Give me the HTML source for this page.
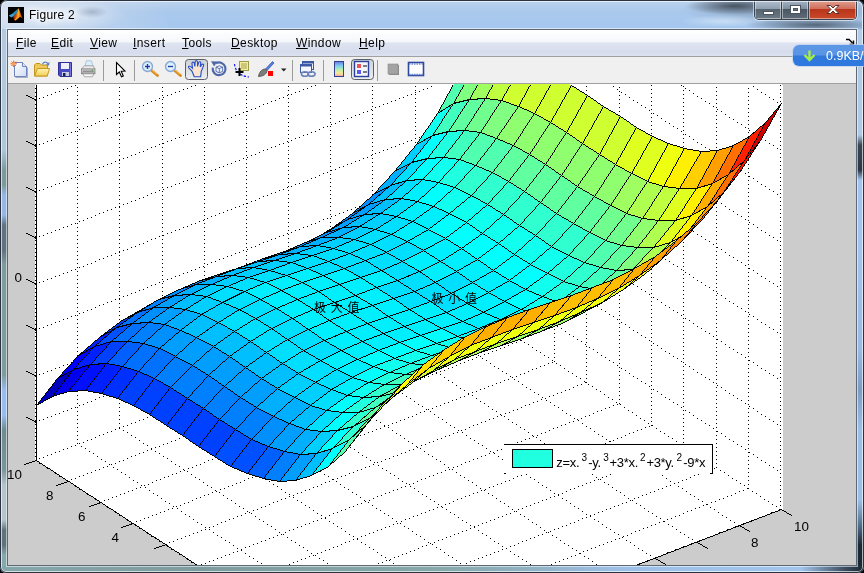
<!DOCTYPE html>
<html><head><meta charset="utf-8"><title>Figure 2</title>
<style>
html,body{margin:0;padding:0;}
body{width:864px;height:573px;overflow:hidden;position:relative;background:#000;font-family:"Liberation Sans","Noto Sans CJK SC",sans-serif;}
#win{position:absolute;left:0;top:0;width:864px;height:573px;border-radius:7px 7px 6px 6px;overflow:hidden;
 background:linear-gradient(180deg,#bcd3ee 0px,#a9c8ec 12px,#a6c8ef 30px,#a9c9ee 100%);}
#winedge{position:absolute;left:0;top:0;width:862px;height:571px;border:1px solid #2b3340;border-radius:7px 7px 6px 6px;box-shadow:inset 0 0 0 1px rgba(255,255,255,.65);z-index:20;pointer-events:none;}
#smudge{position:absolute;left:600px;top:2px;width:262px;height:27px;
 background:radial-gradient(ellipse 50px 9px at 135px 4px,rgba(55,65,75,.85),rgba(55,65,75,0) 100%),radial-gradient(ellipse 70px 7px at 215px 23px,rgba(60,70,80,.75),rgba(60,70,80,0) 100%),radial-gradient(ellipse 45px 6px at 125px 19px,rgba(215,232,250,.7),rgba(215,232,250,0) 100%),radial-gradient(ellipse 110px 16px at 190px 8px,rgba(90,105,120,.45),rgba(90,105,120,0) 100%);}
#glow{position:absolute;left:2px;top:2px;width:200px;height:27px;background:radial-gradient(ellipse 16px 6px at 90px 10px,rgba(120,135,160,.45),rgba(120,135,160,0) 100%),radial-gradient(ellipse 80px 18px at 45px 13px,rgba(238,242,248,.8),rgba(238,242,248,0) 100%),linear-gradient(90deg,rgba(225,230,238,.6) 0,rgba(225,230,238,.35) 90px,rgba(225,230,238,0) 170px);}
#bl{position:absolute;left:1px;top:30px;width:6px;height:540px;background:linear-gradient(180deg,#b3cae0 0,#aec6dc 120px,#7d9a9b 140px,#7d9a9b 155px,#96b6e6 165px,#96b6e6 185px,#5e7480 195px,#5e7480 220px,#7f9c9c 235px,#7f9c9c 345px,#98bcf0 360px,#98bcf0 385px,#6f8a90 400px,#7a9698 440px,#b4c4cc 455px,#b4c4cc 490px,#5e747c 500px,#5e747c 515px,#86a8ac 525px,#86a8ac 100%);}
#br{position:absolute;left:857px;top:30px;width:6px;height:540px;background:linear-gradient(180deg,#b5cde6 0,#b0c9e4 105px,#3a4656 115px,#2c3646 140px,#a2c4ee 150px,#a2c4ee 220px,#98bae4 320px,#7d9cc4 360px,#9cbfe8 400px,#9cbfe8 470px,#55708c 495px,#1c2836 515px,#1c2836 100%);}
#bb{position:absolute;left:1px;top:566px;width:862px;height:6px;background:linear-gradient(90deg,#84a6ab 0,#7e9c9f 200px,#86a8a8 430px,#8fb0c0 520px,#9dc0e8 620px,#a0c4ec 800px,#3a4a5c 845px,#1c2836 100%);}
#ticon{position:absolute;left:8px;top:7px;width:16px;height:16px;}
#title{position:absolute;left:29px;top:7px;font-size:12px;line-height:16px;color:#000;letter-spacing:.25px;text-shadow:0 0 6px #fff,0 0 6px #fff,0 0 8px #fff;}
#btns{position:absolute;left:754px;top:0;width:103px;height:20px;border:1px solid #3a4350;border-top:none;border-radius:0 0 5px 5px;box-sizing:border-box;overflow:hidden;display:flex;box-shadow:0 0 0 1px rgba(255,255,255,.55);}
#btns div{height:100%;box-sizing:border-box;position:relative;}
#bmin{width:27px;background:linear-gradient(180deg,#b4c3d3 0,#8fa0b1 45%,#566370 50%,#6d7b89 100%);border-right:1px solid #39424d;box-shadow:inset 0 0 0 1px rgba(255,255,255,.45);}
#bmax{width:27px;background:linear-gradient(180deg,#a9b8c8 0,#808f9f 45%,#4a5662 50%,#606d7a 100%);border-right:1px solid #39424d;box-shadow:inset 0 0 0 1px rgba(255,255,255,.45);}
#bcls{width:47px;background:linear-gradient(180deg,#e2a395 0,#d0705c 45%,#b9351b 50%,#c94a2a 100%);box-shadow:inset 0 0 0 1px rgba(255,255,255,.45);}
#client{position:absolute;left:8px;top:30px;width:848px;height:535px;background:#f0f0f0;}
#clientedge{position:absolute;left:7px;top:29px;width:848px;height:535px;border:1px solid #5d6875;z-index:5;pointer-events:none;box-shadow:0 0 0 1px rgba(255,255,255,.55);}
#menubar{position:absolute;left:0;top:0;width:848px;height:26px;background:linear-gradient(180deg,#ffffff 0,#f5f7fb 45%,#dfe4f1 50%,#d6dcec 85%,#dde2f0 100%);border-bottom:1px solid #a0a0a0;}
#menubar span{position:absolute;top:5px;font-size:12px;line-height:16px;color:#000;letter-spacing:.4px;}
#menubar span::first-letter{text-decoration:underline;text-underline-offset:1px;}
#toolbar{position:absolute;left:0;top:27px;width:848px;height:26px;background:#f0f0f0;}
#tbline{position:absolute;left:0;top:53px;width:848px;height:1px;background:#a0a0a0;}
.sep{position:absolute;top:5px;width:1px;height:19px;background:#a5a5a5;}
.ic{position:absolute;top:5px;width:18px;height:18px;}
.pressed{position:absolute;top:2px;height:22px;border:1px solid #555b66;border-radius:3px;background:linear-gradient(180deg,#d0d4da,#eceef2);box-sizing:border-box;box-shadow:inset 1px 1px 2px rgba(0,0,0,.25);}
#fig{position:absolute;left:0;top:54px;width:848px;height:481px;background:#cccccc;overflow:hidden;}
#fig svg{position:absolute;left:0;top:1px;overflow:visible;}
.gl,#menubar span,#badge span{will-change:transform;}
.t{font-family:"Liberation Sans","Noto Sans CJK SC",sans-serif;font-size:13.4px;fill:#000;}
#badge{position:absolute;left:793px;top:45px;width:80px;height:21px;border-radius:6px;background:linear-gradient(180deg,#5c97e6 0,#5a94e4 48%,#3078dc 52%,#2f78de 100%);z-index:30;box-shadow:0 0 0 1px rgba(190,210,240,.7);}
#badge span{position:absolute;left:33px;top:3px;color:#fff;font-size:12.5px;line-height:16px;}
</style></head><body>
<div id="win">
 <div id="smudge"></div><div id="glow"></div><div id="bl"></div><div id="br"></div><div id="bb"></div>
 <svg id="ticon" viewBox="0 0 16 16"><defs><linearGradient id="ml" x1="0" x2="1"><stop offset="0" stop-color="#8a1f08"/><stop offset=".32" stop-color="#e0540f"/><stop offset=".53" stop-color="#fdb824"/><stop offset=".68" stop-color="#ee7216"/><stop offset="1" stop-color="#a8300a"/></linearGradient></defs><rect width="16" height="16" fill="#000"/>
  <path d="M0.700 8.600 L4.600 6.400 L9.800 2 L8.600 6.500 L5.600 9.200 L3.200 10.600 Z" fill="#3aa3cc"/><path d="M4.600 6.400 L9.800 2 L8.600 6.500 L6 8 Z" fill="#2f86aa"/>
  <path d="M10.600 1 C11.600 3,12.600 7.200,14.800 11.800 C13.400 10.400,12.400 9.600,11.400 10.200 C10 11.200,8.600 13.600,7 13.600 C6.200 13.400,5.400 11.600,5.200 9.600 L8.600 6.500 Z" fill="url(#ml)"/>
  <path d="M7 13.600 C8 13,9 11.500,9.600 10 L8.600 10.400 C8 11.500,7.200 12.500,6.500 12.800 Z" fill="#f8c020"/></svg>
 <div id="title" class="gl">Figure 2</div>
 <div id="btns"><div id="bmin"><svg width="26" height="20" style="position:absolute;left:0;top:0"><rect x="8.500" y="11.500" width="10" height="3" fill="#fff" stroke="#4a5560" stroke-width="1"/></svg></div><div id="bmax"><svg width="26" height="20" style="position:absolute;left:0;top:0"><rect x="8.500" y="5.500" width="10" height="8" fill="#fff" stroke="#4a5560"/><rect x="11.500" y="8.500" width="4" height="2" fill="#6b7784" stroke="#4a5560"/></svg></div><div id="bcls"><svg width="47" height="19" style="position:absolute;left:0;top:0"><path d="M18 5.500 L21.500 5.500 L24 8 L26.500 5.500 L30 5.500 L26 9.500 L30 13.500 L26.500 13.500 L24 11 L21.500 13.500 L18 13.500 L22 9.500 Z" fill="#fff" stroke="#5a3028" stroke-width="1"/></svg></div></div>
 <div id="clientedge"></div>
 <div id="client">
  <div id="menubar">
   <span style="left:8px">File</span><span style="left:43px">Edit</span><span style="left:82px">View</span><span style="left:125px">Insert</span><span style="left:174px">Tools</span><span style="left:223px">Desktop</span><span style="left:288px">Window</span><span style="left:351px">Help</span>
   <svg style="position:absolute;left:837px;top:8px" width="10" height="8"><path d="M1 1.500 L4 1.500 L7.500 5 M4.500 6.500 L8.500 6.500 L8.500 2.500" stroke="#000" stroke-width="1.4" fill="none"/></svg>
  </div>
  <div id="toolbar">
   <svg width="849" height="26" viewBox="8 57 849 26" style="position:absolute;left:0;top:0">
<defs>
<linearGradient id="gcb" x1="0" y1="0" x2="0" y2="1"><stop offset="0" stop-color="#6a78e8"/><stop offset=".3" stop-color="#7fd0f0"/><stop offset=".55" stop-color="#b8eeb0"/><stop offset=".78" stop-color="#f6e890"/><stop offset="1" stop-color="#f0a0b8"/></linearGradient>
<linearGradient id="gpg" x1="0" y1="0" x2="1" y2="1"><stop offset="0" stop-color="#fff"/><stop offset="1" stop-color="#cfdcf4"/></linearGradient>
<linearGradient id="gfo" x1="0" y1="0" x2="0" y2="1"><stop offset="0" stop-color="#fff6b8"/><stop offset="1" stop-color="#f2cc50"/></linearGradient>
<linearGradient id="gbt" x1="0" y1="0" x2="0" y2="1"><stop offset="0" stop-color="#cfd2d6"/><stop offset="1" stop-color="#eceef0"/></linearGradient>
<linearGradient id="gpr" x1="0" y1="0" x2="0" y2="1"><stop offset="0" stop-color="#dcdcdc"/><stop offset="1" stop-color="#9c9c9c"/></linearGradient>
<radialGradient id="glens"><stop offset="0" stop-color="#fff"/><stop offset="1" stop-color="#bfe6f4"/></radialGradient>
</defs>
<!-- separators -->
<g fill="#9c9c9c"><rect x="103" y="60" width="1" height="21"/><rect x="134" y="60" width="1" height="21"/><rect x="292" y="60" width="1" height="21"/><rect x="323" y="60" width="1" height="21"/><rect x="377" y="60" width="1" height="21"/></g>
<!-- new -->
<path d="M14.500 62.500 L22.500 62.500 L26.500 66.500 L26.500 76.500 L14.500 76.500 Z" fill="url(#gpg)" stroke="#6f84bd"/><path d="M22.500 62.500 L22.500 66.500 L26.500 66.500" fill="#dfe8f8" stroke="#6f84bd"/><rect x="15.500" y="77" width="12" height="1" fill="#a6aec2"/><rect x="27" y="67.500" width="1" height="10" fill="#a6aec2"/>
<g stroke="#e8562a" stroke-width="1"><path d="M13.700 60.600 L13.700 67 M10.500 63.800 L16.900 63.800 M11.500 61.600 L15.900 66 M15.900 61.600 L11.500 66"/></g><circle cx="13.700" cy="63.800" r="1.600" fill="#f9a850"/>
<!-- open -->
<path d="M34.500 65 L36 63.500 L40 63.500 L41.500 65 L47.500 65 L47.500 76 L34.500 76 Z" fill="#efc95a" stroke="#c09420"/><path d="M34.700 76 L37.500 68.500 L49.500 68.500 L47.300 76 Z" fill="url(#gfo)" stroke="#c69a22"/>
<path d="M42.500 64.200 C43.500 61.800,46.300 61.400,48 63.600" fill="none" stroke="#5d86c8" stroke-width="1.300"/><path d="M49.600 62 L49 65.700 L45.900 64.300 Z" fill="#5d86c8"/>
<!-- save -->
<path d="M58.500 62.500 L71.500 62.500 L71.500 76.500 L60 76.500 L58.500 75 Z" fill="#4a4ac0" stroke="#2f2f94"/><rect x="61" y="63" width="8" height="6" fill="#eef1fb"/><rect x="62" y="72" width="7" height="4" fill="#c8cce8"/><rect x="63" y="73" width="2.500" height="3" fill="#1c1c50"/><path d="M70.500 63 L70.500 76" stroke="#7a7ae0"/>
<!-- print -->
<path d="M85 66.200 L86.300 60.800 L91.300 60.800 L93.300 66.200 Z" fill="#dbeefc" stroke="#9bbde0" stroke-width=".8"/><path d="M81.500 69 L84.300 65.800 L93.200 65.800 L95 69 Z" fill="#ececec" stroke="#8c8c8c" stroke-width=".7"/><rect x="81.500" y="69" width="13.500" height="4.800" fill="url(#gpr)" stroke="#7a7a7a" stroke-width=".7"/><path d="M82.800 73.800 L84.500 76.800 L92.500 76.800 L93.800 73.800 Z" fill="#f6f6f6" stroke="#8e8e8e" stroke-width=".7"/><path d="M83 71.200 L93.500 71.200" stroke="#707070" stroke-width=".8"/><rect x="91.800" y="69.800" width="1.400" height="1.200" fill="#38b838"/>
<!-- pointer -->
<path d="M116.500 62.500 L116.500 74.500 L119.300 72 L121.500 76.800 L123.300 76 L121.200 71.300 L125 71 Z" fill="#fff" stroke="#000" stroke-width="1.100"/>
<!-- zoom in -->
<path d="M151 70 L157.500 75.500" stroke="#d98a1e" stroke-width="2.800" stroke-linecap="round"/><path d="M151.500 69.500 L157 74.200" stroke="#f4c46a" stroke-width="1"/><circle cx="147.500" cy="66.500" r="5" fill="url(#glens)" stroke="#8aa6d8" stroke-width="1.300"/><path d="M145 66.500 L150 66.500 M147.500 64 L147.500 69" stroke="#2338a8" stroke-width="1.400"/>
<!-- zoom out -->
<path d="M174 70 L180.500 75.500" stroke="#d98a1e" stroke-width="2.800" stroke-linecap="round"/><path d="M174.500 69.500 L180 74.200" stroke="#f4c46a" stroke-width="1"/><circle cx="170.500" cy="66.500" r="5" fill="url(#glens)" stroke="#8aa6d8" stroke-width="1.300"/><path d="M168 66.500 L173 66.500" stroke="#2338a8" stroke-width="1.400"/>
<!-- pan (pressed) -->
<rect x="185.500" y="59.500" width="22" height="20" rx="3" fill="url(#gbt)" stroke="#5a5f68"/>
<g transform="translate(196 69) scale(1.16 1.04) translate(-196 -69)"><path d="M192.500 71 L189.700 67.800 C189 66.500,190.500 65.800,191.500 66.800 L193 68.300 L192.500 63.500 C192.500 62,194.300 62,194.500 63.500 L195 66.500 L195.300 62 C195.500 60.500,197.300 60.700,197.300 62.200 L197.300 66.500 L198.300 62.800 C198.700 61.500,200.300 62,200.100 63.400 L199.600 67 L201 64.800 C201.800 63.800,203 64.600,202.500 65.800 L200.500 71.500 L200 76.500 L194.500 76.500 Z" fill="#fbe3cf" stroke="#2a52c8" stroke-width="1"/></g>
<!-- rotate 3d -->
<path d="M216 63.200 A6.400 6.400 0 1 1 212.800 67.600" fill="none" stroke="#4f68a8" stroke-width="2.200"/><path d="M211 61.200 L217.200 61.400 L214.200 66.600 Z" fill="#4f68a8"/>
<path d="M216 67.200 L219.300 65.800 L222.600 67.200 L222.600 71.400 L219.300 72.800 L216 71.400 Z M216 67.200 L219.300 68.600 L222.600 67.200 M219.300 68.600 L219.300 72.800" fill="#eef3fc" stroke="#4f68a8" stroke-width=".9"/>
<!-- data cursor -->
<rect x="239.500" y="61.500" width="9" height="9" fill="#f3eea0" stroke="#9c9a4a"/><path d="M241 64 L247 64 M241 66 L247 66 M241 68 L247 68" stroke="#8f8c40" stroke-width=".8"/>
<path d="M234.500 64 C235 70,239 76,249 77" fill="none" stroke="#1a1aff" stroke-width="1.200" stroke-dasharray="2.500 1.500"/><path d="M235.500 72 L243.500 72 M239.500 68 L239.500 76" stroke="#000" stroke-width="2"/>
<!-- brush -->
<path d="M265.500 69 L272.500 61.500 L274 63 L267 70.500 Z" fill="#5d7fe0" stroke="#3a58b8" stroke-width=".8"/><path d="M258.500 76.500 C259 72,262 69,265.500 69 L267 70.500 C267 74,263 76.500,258.500 76.500 Z" fill="#7c7c7c" stroke="#4a4a4a" stroke-width=".8"/><rect x="268" y="71" width="5" height="5" fill="#ff0000"/>
<path d="M281 68.500 L286.500 68.500 L283.750 71.500 Z" fill="#222"/>
<!-- link -->
<rect x="302.500" y="61.500" width="11" height="8" fill="#eaf0fb" stroke="#3b5aa6"/><rect x="302.500" y="61.500" width="11" height="2" fill="#3b5aa6"/><rect x="300.500" y="64.500" width="11" height="8" fill="#f4f7fd" stroke="#3b5aa6"/><rect x="300.500" y="64.500" width="11" height="2" fill="#3b5aa6"/>
<ellipse cx="305" cy="74" rx="3.600" ry="2.300" fill="none" stroke="#6d84b8" stroke-width="1.600"/><ellipse cx="311.500" cy="74" rx="3.600" ry="2.300" fill="none" stroke="#6d84b8" stroke-width="1.600"/>
<!-- colorbar -->
<rect x="334.500" y="61.500" width="9" height="15" fill="url(#gcb)" stroke="#34408c"/>
<!-- legend pressed -->
<rect x="351.500" y="59.500" width="22" height="20" rx="3" fill="url(#gbt)" stroke="#5a5f68"/>
<rect x="354.500" y="61.500" width="14" height="15" fill="#f4f6fc" stroke="#2b3f9c" stroke-width="1.400"/><rect x="357" y="64" width="4" height="4" fill="#e8505c"/><rect x="357" y="70" width="4" height="4" fill="#5a5ae8"/><path d="M363 66 L367 66 M363 72 L367 72" stroke="#000" stroke-width="1.200"/>
<!-- gray square -->
<rect x="389" y="65" width="10" height="10" fill="#8a8a8a"/><rect x="388" y="64" width="10" height="10" fill="#a3a3a3" stroke="#8d8d8d" stroke-width=".6"/>
<!-- dock -->
<rect x="408.500" y="62.500" width="15" height="13" fill="#fff" stroke="#2e4aa0" stroke-width="1.600"/><path d="M409 64 L423 64 M409 74.500 L423 74.500" stroke="#6f88d0" stroke-width="1.400" stroke-dasharray="1.500 1"/>
</svg>

  </div>
  <div id="tbline"></div>
  <div id="fig">
   <svg width="849" height="480" viewBox="0 0 849 480" shape-rendering="crispEdges">
   <polygon points="352.4,586.9 774.0,424.7 450.2,213.0 28.6,375.2" fill="#fff"/>
<polygon points="28.6,375.2 450.2,213.0 450.2,-257.2 28.6,-95.0" fill="#fff"/>
<polygon points="450.2,213.0 774.0,424.7 774.0,-45.4 450.2,-257.2" fill="#fff"/>
<rect x="773.8" y="0" width="1.2" height="424.7" fill="#fff"/>
<rect x="27" y="0" width="2" height="375.2" fill="#fff"/>
<path d="M0 .5m28 0h1m38 0h1m119 0h1m119 0h1m225 0h1m12 0h1m96 0h1m29 0h1m98 0h1m-745 1h1m34 0h1m119 0h1m96 0h1m22 0h1m18 0h1m41 0h1m42 0h1m15 0h1m25 0h1m128 0h1m26 0h1m69 0h1m69 0h1m-718 1h1m40 0h1m41 0h1m42 0h1m41 0h1m41 0h1m226 0h1m15 0h1m129 0h1m96 0h1m-682 1h2m30 0h1m119 0h1m119 0h1m119 0h1m93 0h1m23 0h1m139 0h1m62 0h1m-713 1h1m26 0h1m119 0h1m119 0h1m119 0h1m53 0h1m76 0h1m62 0h1m33 0h1m105 0h1m22 0h1m-745 1h1m251 0h1m41 0h1m41 0h1m42 0h1m41 0h1m91 0h1m36 0h1m96 0h1m5 0h1m-654 1h1m22 0h1m17 0h1m41 0h1m42 0h1m16 0h1m24 0h1m41 0h1m52 0h1m119 0h1m69 0h1m129 0h1m96 0h1m-682 1h2m18 0h1m119 0h1m119 0h1m119 0h1m65 0h1m39 0h1m99 0h1m126 0h1m12 0h1m-726 1h1m516 0h2m96 0h1m41 0h1m86 0h1m-745 1h1m14 0h1m119 0h1m116 0h1m2 0h1m38 0h1m41 0h1m38 0h1m3 0h1m41 0h1m27 0h1m100 0h1m38 0h1m57 0h1m81 0h1m-740 1h2m8 0h1m10 0h1m29 0h1m41 0h1m42 0h1m4 0h1m36 0h1m41 0h1m40 0h1m119 0h1m81 0h1m129 0h1m96 0h1m-689 1h2m5 0h2m484 0h1m35 0h1m139 0h1m50 0h1m-719 1h2m4 0h1m6 0h1m119 0h1m119 0h1m119 0h1m85 0h1m64 0h1m74 0h1m21 0h1m117 0h1m10 0h1m-749 1h2m2 0h1m2 0h1m119 0h1m119 0h1m8 0h1m41 0h1m41 0h1m26 0h1m15 0h1m41 0h1m103 0h1m24 0h1m96 0h1m17 0h1m-668 1h3m40 0h1m41 0h1m42 0h1m41 0h1m41 0h1m242 0h1m129 0h1m96 0h1m56 0h1m-739 1h2m118 0h1m119 0h1m119 0h1m97 0h1m27 0h1m111 0h1m114 0h1m-713 1h1m114 0h1m119 0h1m119 0h1m162 0h1m10 0h1m85 0h1m53 0h1m74 0h1m-745 1h1m251 0h1m41 0h1m41 0h1m42 0h1m41 0h1m39 0h1m88 0h1m50 0h1m45 0h1m93 0h1m-742 1h1m40 0h1m41 0h1m27 0h1m14 0h1m41 0h1m41 0h1m20 0h1m119 0h1m101 0h1m129 0h1m89 0h1m6 0h1m-682 1h2m226 0h1m119 0h1m137 0h1m47 0h1m178 0h1m-713 1h1m106 0h1m357 0h1m52 0h1m86 0h1m9 0h1m128 0h1m-745 1h1m102 0h1m119 0h1m28 0h1m41 0h1m41 0h1m6 0h1m35 0h1m41 0h1m115 0h1m12 0h1m96 0h1m29 0h1m-678 1h1m40 0h1m41 0h1m42 0h1m41 0h1m41 0h1m128 0h1m113 0h1m129 0h1m25 0h1m70 0h1m-682 1h2m98 0h1m119 0h1m249 0h1m15 0h1m226 0h1m-713 1h1m94 0h1m119 0h1m119 0h1m182 0h1m22 0h1m73 0h1m65 0h1m62 0h1m-745 1h1m251 0h1m41 0h1m41 0h1m42 0h1m41 0h1m51 0h1m76 0h1m62 0h1m33 0h1m-648 1h1m40 0h1m41 0h1m7 0h1m34 0h1m41 0h1m41 0h2m119 0h1m121 0h1m91 0h1m37 0h1m96 0h1m4 0h1m-687 1h2m86 0h1m119 0h1m119 0h1m157 0h1m226 0h1m-713 1h1m476 0h1m40 0h1m96 0h1m1 0h1m126 0h1m-745 1h1m82 0h1m119 0h1m48 0h1m41 0h1m28 0h1m12 0h1m42 0h1m41 0h1m127 0h2m96 0h1m41 0h1m-690 1h1m40 0h1m37 0h1m3 0h1m42 0h1m41 0h1m30 0h1m10 0h1m108 0h1m133 0h1m27 0h1m101 0h1m37 0h1m58 0h1m-682 1h2m484 0h1m226 0h1m-713 1h1m74 0h1m119 0h1m119 0h1m202 0h1m34 0h1m61 0h1m77 0h1m50 0h1m-745 1h1m70 0h1m119 0h1m60 0h1m41 0h1m16 0h1m24 0h1m42 0h1m41 0h1m63 0h1m64 0h1m74 0h1m21 0h1m-648 1h1m40 0h1m41 0h1m42 0h1m41 0h1m41 0h1m242 0h1m103 0h1m25 0h1m96 0h1m16 0h1m-699 1h2m66 0h1m119 0h1m119 0h1m177 0h1m226 0h1m-713 1h1m62 0h1m119 0h1m119 0h1m185 0h1m28 0h1m96 0h1m13 0h1m114 0h1m-745 1h1m251 0h1m41 0h1m41 0h1m42 0h1m41 0h1m128 0h1m10 0h1m85 0h1m53 0h1m-702 1h1m40 0h1m17 0h1m23 0h1m42 0h1m41 0h1m10 0h1m30 0h1m88 0h1m119 0h1m33 0h1m39 0h1m89 0h1m49 0h1m46 0h1m-682 1h2m174 0h1m119 0h1m119 0h1m69 0h1m219 0h1m6 0h1m-713 1h1m54 0h1m369 0h1m92 0h1m46 0h1m49 0h1m128 0h1m-745 1h1m50 0h1m119 0h1m80 0h1m38 0h1m2 0h1m41 0h1m42 0h1m31 0h1m9 0h1m75 0h1m52 0h1m86 0h1m9 0h1m-648 1h1m40 0h1m41 0h1m42 0h1m41 0h1m41 0h1m76 0h1m119 0h1m21 0h1m23 0h1m115 0h1m13 0h1m96 0h1m28 0h1m-711 1h2m46 0h1m119 0h1m317 0h1m155 0h1m70 0h1m-713 1h1m42 0h1m119 0h1m119 0h1m119 0h1m97 0h1m16 0h1m96 0h1m128 0h1m-745 1h1m251 0h1m41 0h1m41 0h1m42 0h1m19 0h1m21 0h1m11 0h1m116 0h1m22 0h1m73 0h1m65 0h1m-714 1h1m38 0h1m1 0h1m41 0h1m42 0h1m32 0h1m8 0h1m41 0h1m68 0h1m173 0h1m51 0h1m77 0h1m61 0h1m34 0h1m-682 1h2m34 0h1m119 0h1m119 0h1m119 0h1m89 0h1m91 0h1m134 0h1m4 0h1m-718 1h1m436 0h1m80 0h1m96 0h1m128 0h1m-745 1h1m30 0h1m119 0h1m100 0h1m18 0h1m22 0h1m41 0h1m42 0h1m11 0h1m29 0h1m87 0h1m40 0h1m96 0h1m1 0h1m-650 1h1m26 0h1m13 0h1m41 0h1m42 0h1m20 0h1m20 0h1m41 0h1m56 0h1m119 0h1m53 0h1m11 0h1m127 0h1m1 0h1m96 0h1m40 0h1m-723 1h2m484 0h1m27 0h1m139 0h1m58 0h1m-713 1h1m22 0h1m119 0h1m119 0h1m119 0h1m134 0h1m96 0h1m128 0h1m-745 1h1m18 0h1m119 0h1m112 0h1m6 0h1m34 0h1m41 0h1m42 0h1m41 0h1m23 0h1m104 0h1m34 0h1m61 0h1m77 0h1m-726 1h1m40 0h1m41 0h1m42 0h1m41 0h1m41 0h1m242 0h1m63 0h1m65 0h1m73 0h1m22 0h1m-682 1h2m14 0h1m119 0h1m119 0h1m119 0h1m73 0h1m35 0h1m103 0h1m122 0h1m16 0h1m-740 1h2m8 0h1m10 0h1m119 0h1m119 0h1m119 0h1m146 0h1m96 0h1m128 0h1m-753 1h2m6 0h1m251 0h1m41 0h1m41 0h1m42 0h1m41 0h1m99 0h1m28 0h1m96 0h1m13 0h1m-668 1h2m4 0h1m6 0h1m33 0h1m41 0h1m42 0h2m40 0h1m41 0h1m36 0h1m119 0h1m85 0h1m129 0h1m9 0h1m86 0h1m52 0h1m-738 1h2m1 0h2m2 0h1m119 0h1m119 0h1m119 0h1m121 0h1m39 0h1m139 0h1m46 0h1m-715 1h3m517 0h1m96 0h1m121 0h1m6 0h1m-746 1h2m118 0h1m119 0h1m12 0h1m41 0h1m41 0h1m22 0h1m19 0h1m41 0h1m35 0h1m92 0h1m46 0h1m49 0h1m-648 1h1m40 0h1m41 0h1m31 0h1m10 0h1m41 0h1m41 0h1m24 0h1m119 0h1m97 0h1m75 0h1m53 0h1m85 0h1m10 0h1m-682 1h2m460 0h1m23 0h1m115 0h1m110 0h1m28 0h1m-742 1h1m110 0h1m119 0h1m119 0h1m166 0h1m96 0h1m57 0h1m70 0h1m-745 1h1m226 0h1m24 0h1m41 0h1m41 0h1m10 0h1m31 0h1m41 0h1m111 0h1m16 0h1m96 0h1m-648 1h1m40 0h1m41 0h1m23 0h1m18 0h1m41 0h1m41 0h1m242 0h1m11 0h1m117 0h1m21 0h1m74 0h1m-682 1h2m102 0h1m119 0h1m119 0h1m141 0h1m51 0h1m139 0h1m34 0h1m-713 1h1m338 0h1m178 0h1m90 0h1m5 0h1m128 0h1m-745 1h1m98 0h1m119 0h1m32 0h1m41 0h1m41 0h1m42 0h1m41 0h1m47 0h1m80 0h1m96 0h1m-648 1h1m40 0h1m41 0h1m11 0h1m30 0h1m41 0h1m41 0h1m4 0h1m119 0h1m117 0h1m87 0h1m41 0h1m96 0h2m-683 1h2m472 0h1m11 0h1m127 0h1m98 0h1m-713 1h1m90 0h1m119 0h1m119 0h1m186 0h1m26 0h1m69 0h1m69 0h1m58 0h1m-745 1h1m86 0h1m119 0h1m44 0h1m41 0h1m32 0h1m8 0h1m42 0h1m41 0h1m128 0h1m96 0h1m-648 1h1m40 0h1m41 0h1m42 0h1m41 0h1m41 0h1m242 0h1m23 0h1m105 0h1m33 0h1m62 0h1m-682 1h2m82 0h1m119 0h1m119 0h1m161 0h1m63 0h1m139 0h1m22 0h1m-713 1h1m78 0h1m119 0h1m119 0h1m161 0h1m36 0h1m96 0h1m5 0h1m122 0h1m-745 1h1m251 0h1m41 0h1m41 0h1m42 0h1m41 0h1m128 0h1m96 0h1m-648 1h1m40 0h1m33 0h1m7 0h1m42 0h1m41 0h1m26 0h1m14 0h1m104 0h1m137 0h1m99 0h1m29 0h1m96 0h1m12 0h1m-695 1h2m70 0h1m119 0h1m119 0h1m173 0h1m139 0h1m86 0h1m-713 1h1m517 0h1m38 0h1m57 0h1m81 0h1m46 0h1m-745 1h1m66 0h1m119 0h1m64 0h1m41 0h1m12 0h1m28 0h1m42 0h1m41 0h1m128 0h1m96 0h1m-648 1h1m40 0h1m21 0h1m19 0h1m42 0h1m41 0h1m14 0h1m26 0h1m92 0h1m149 0h1m35 0h1m93 0h1m45 0h1m50 0h1m-682 1h2m420 0h1m63 0h1m75 0h1m139 0h1m10 0h1m-713 1h1m58 0h1m119 0h1m119 0h1m119 0h1m73 0h1m24 0h1m96 0h1m17 0h1m110 0h1m-745 1h1m174 0h1m76 0h1m41 0h2m40 0h1m42 0h1m35 0h1m5 0h1m128 0h1m96 0h1m57 0h1m-706 1h1m40 0h1m13 0h1m27 0h1m42 0h1m41 0h1m41 0h1m214 0h1m27 0h1m111 0h1m17 0h1m96 0h1m-682 1h2m50 0h1m119 0h1m119 0h1m119 0h1m73 0h1m11 0h1m139 0h1m74 0h1m-713 1h1m286 0h1m119 0h1m21 0h1m88 0h1m50 0h1m45 0h1m93 0h1m34 0h1m-745 1h1m46 0h1m119 0h1m84 0h1m41 0h1m41 0h1m42 0h1m41 0h1m128 0h1m90 0h1m5 0h1m-648 1h1m40 0h1m1 0h1m39 0h1m42 0h1m36 0h1m4 0h1m41 0h1m72 0h1m119 0h1m49 0h1m47 0h1m81 0h1m96 0h1m-682 1h2m398 0h1m33 0h1m51 0h1m87 0h1m138 0h2m-714 1h1m38 0h1m119 0h1m119 0h1m225 0h1m12 0h1m96 0h1m29 0h1m98 0h1m-745 1h1m34 0h1m119 0h1m96 0h1m22 0h1m18 0h1m41 0h1m42 0h1m15 0h1m25 0h1m128 0h1m26 0h1m69 0h1m69 0h1m-718 1h1m40 0h1m41 0h1m42 0h1m41 0h1m41 0h1m226 0h1m15 0h1m129 0h1m96 0h1m-682 1h2m30 0h1m119 0h1m119 0h1m119 0h1m93 0h1m23 0h1m139 0h1m62 0h1m-713 1h1m26 0h1m119 0h1m119 0h1m119 0h1m53 0h1m76 0h1m62 0h1m33 0h1m105 0h1m22 0h1m-745 1h1m251 0h1m41 0h1m41 0h1m42 0h1m41 0h1m91 0h1m36 0h1m96 0h1m5 0h1m-654 1h1m22 0h1m17 0h1m41 0h1m42 0h1m16 0h1m24 0h1m41 0h1m52 0h1m119 0h1m69 0h1m129 0h1m96 0h1m-682 1h2m18 0h1m119 0h1m119 0h1m119 0h1m65 0h1m39 0h1m99 0h1m126 0h1m12 0h1m-726 1h1m516 0h2m96 0h1m41 0h1m86 0h1m-745 1h1m14 0h1m119 0h1m116 0h1m2 0h1m38 0h1m41 0h1m38 0h1m3 0h1m41 0h1m27 0h1m100 0h1m38 0h1m57 0h1m81 0h1m-740 1h2m8 0h1m10 0h1m29 0h1m41 0h1m42 0h1m4 0h1m36 0h1m41 0h1m40 0h1m119 0h1m81 0h1m129 0h1m96 0h1m-689 1h2m5 0h2m484 0h1m35 0h1m139 0h1m50 0h1m-719 1h2m4 0h1m6 0h1m119 0h1m119 0h1m119 0h1m85 0h1m64 0h1m74 0h1m21 0h1m117 0h1m10 0h1m-749 1h2m2 0h1m2 0h1m119 0h1m119 0h1m8 0h1m41 0h1m41 0h1m26 0h1m15 0h1m41 0h1m103 0h1m24 0h1m96 0h1m17 0h1m-668 1h3m40 0h1m41 0h1m42 0h1m41 0h1m41 0h1m242 0h1m129 0h1m96 0h1m56 0h1m-739 1h2m118 0h1m119 0h1m119 0h1m97 0h1m27 0h1m111 0h1m114 0h1m-713 1h1m114 0h1m119 0h1m119 0h1m162 0h1m10 0h1m85 0h1m53 0h1m74 0h1m-745 1h1m251 0h1m41 0h1m41 0h1m42 0h1m41 0h1m39 0h1m88 0h1m50 0h1m45 0h1m93 0h1m-742 1h1m40 0h1m41 0h1m27 0h1m14 0h1m41 0h1m41 0h1m20 0h1m119 0h1m101 0h1m129 0h1m89 0h1m6 0h1m-682 1h2m226 0h1m119 0h1m137 0h1m47 0h1m178 0h1m-713 1h1m106 0h1m357 0h1m52 0h1m86 0h1m9 0h1m128 0h1m-745 1h1m102 0h1m119 0h1m28 0h1m41 0h1m41 0h1m6 0h1m35 0h1m41 0h1m115 0h1m12 0h1m96 0h1m29 0h1m-678 1h1m40 0h1m41 0h1m42 0h1m41 0h1m41 0h1m128 0h1m113 0h1m129 0h1m25 0h1m70 0h1m-682 1h2m98 0h1m119 0h1m249 0h1m15 0h1m226 0h1m-713 1h1m94 0h1m119 0h1m119 0h1m182 0h1m22 0h1m73 0h1m65 0h1m62 0h1m-745 1h1m251 0h1m41 0h1m41 0h1m42 0h1m41 0h1m51 0h1m76 0h1m62 0h1m33 0h1m-648 1h1m40 0h1m41 0h1m7 0h1m34 0h1m41 0h1m41 0h2m119 0h1m121 0h1m91 0h1m37 0h1m96 0h1m4 0h1m-687 1h2m86 0h1m119 0h1m119 0h1m157 0h1m226 0h1m-713 1h1m476 0h1m40 0h1m96 0h1m1 0h1m126 0h1m-745 1h1m82 0h1m119 0h1m48 0h1m41 0h1m28 0h1m12 0h1m42 0h1m41 0h1m127 0h2m96 0h1m41 0h1m-690 1h1m40 0h1m37 0h1m3 0h1m42 0h1m41 0h1m30 0h1m10 0h1m108 0h1m133 0h1m27 0h1m101 0h1m37 0h1m58 0h1m-682 1h2m484 0h1m226 0h1m-713 1h1m74 0h1m119 0h1m119 0h1m202 0h1m34 0h1m61 0h1m77 0h1m50 0h1m-745 1h1m70 0h1m119 0h1m60 0h1m41 0h1m16 0h1m24 0h1m42 0h1m41 0h1m63 0h1m64 0h1m74 0h1m21 0h1m-648 1h1m40 0h1m41 0h1m42 0h1m41 0h1m41 0h1m242 0h1m103 0h1m25 0h1m96 0h1m16 0h1m-699 1h2m66 0h1m119 0h1m119 0h1m177 0h1m226 0h1m-713 1h1m62 0h1m119 0h1m119 0h1m185 0h1m28 0h1m96 0h1m13 0h1m114 0h1m-745 1h1m251 0h1m41 0h1m41 0h1m42 0h1m41 0h1m128 0h1m10 0h1m85 0h1m53 0h1m-702 1h1m40 0h1m17 0h1m23 0h1m42 0h1m41 0h1m10 0h1m30 0h1m88 0h1m119 0h1m33 0h1m39 0h1m89 0h1m49 0h1m46 0h1m-682 1h2m174 0h1m119 0h1m119 0h1m69 0h1m219 0h1m6 0h1m-713 1h1m54 0h1m369 0h1m92 0h1m46 0h1m49 0h1m128 0h1m-745 1h1m50 0h1m119 0h1m80 0h1m38 0h1m2 0h1m41 0h1m42 0h1m31 0h1m9 0h1m75 0h1m52 0h1m86 0h1m9 0h1m-648 1h1m40 0h1m41 0h1m42 0h1m41 0h1m41 0h1m76 0h1m119 0h1m21 0h1m23 0h1m115 0h1m13 0h1m96 0h1m28 0h1m-711 1h2m46 0h1m119 0h1m317 0h1m155 0h1m70 0h1m-713 1h1m42 0h1m119 0h1m119 0h1m119 0h1m97 0h1m16 0h1m96 0h1m128 0h1m-745 1h1m251 0h1m41 0h1m41 0h1m42 0h1m19 0h1m21 0h1m11 0h1m116 0h1m22 0h1m73 0h1m65 0h1m-714 1h1m38 0h1m1 0h1m41 0h1m42 0h1m32 0h1m8 0h1m41 0h1m68 0h1m173 0h1m51 0h1m77 0h1m61 0h1m34 0h1m-682 1h2m34 0h1m119 0h1m119 0h1m119 0h1m89 0h1m91 0h1m134 0h1m4 0h1m-718 1h1m436 0h1m80 0h1m96 0h1m128 0h1m-745 1h1m30 0h1m119 0h1m100 0h1m18 0h1m22 0h1m41 0h1m42 0h1m11 0h1m29 0h1m87 0h1m40 0h1m96 0h1m1 0h1m-650 1h1m26 0h1m13 0h1m41 0h1m42 0h1m20 0h1m20 0h1m41 0h1m56 0h1m119 0h1m53 0h1m11 0h1m127 0h1m1 0h1m96 0h1m40 0h1m-723 1h2m484 0h1m27 0h1m139 0h1m58 0h1m-713 1h1m22 0h1m119 0h1m119 0h1m119 0h1m134 0h1m96 0h1m128 0h1m-745 1h1m18 0h1m119 0h1m112 0h1m6 0h1m34 0h1m41 0h1m42 0h1m41 0h1m23 0h1m104 0h1m34 0h1m61 0h1m77 0h1m-726 1h1m40 0h1m41 0h1m42 0h1m41 0h1m41 0h1m242 0h1m63 0h1m65 0h1m73 0h1m22 0h1m-682 1h2m14 0h1m119 0h1m119 0h1m119 0h1m73 0h1m35 0h1m103 0h1m122 0h1m16 0h1m-740 1h2m8 0h1m10 0h1m119 0h1m119 0h1m119 0h1m146 0h1m96 0h1m128 0h1m-753 1h2m6 0h1m251 0h1m41 0h1m41 0h1m42 0h1m41 0h1m99 0h1m28 0h1m96 0h1m13 0h1m-668 1h2m4 0h1m6 0h1m33 0h1m41 0h1m42 0h2m40 0h1m41 0h1m36 0h1m119 0h1m85 0h1m129 0h1m9 0h1m86 0h1m52 0h1m-738 1h2m1 0h2m2 0h1m119 0h1m119 0h1m119 0h1m121 0h1m39 0h1m139 0h1m46 0h1m-715 1h3m517 0h1m96 0h1m121 0h1m6 0h1m-746 1h2m118 0h1m119 0h1m12 0h1m41 0h1m41 0h1m22 0h1m19 0h1m41 0h1m35 0h1m92 0h1m46 0h1m49 0h1m-648 1h1m40 0h1m41 0h1m31 0h1m10 0h1m41 0h1m41 0h1m24 0h1m119 0h1m97 0h1m75 0h1m53 0h1m85 0h1m10 0h1m-682 1h2m460 0h1m23 0h1m115 0h1m110 0h1m28 0h1m-742 1h1m110 0h1m119 0h1m119 0h1m166 0h1m96 0h1m57 0h1m70 0h1m-745 1h1m226 0h1m24 0h1m41 0h1m41 0h1m10 0h1m31 0h1m41 0h1m111 0h1m16 0h1m96 0h1m-648 1h1m40 0h1m41 0h1m23 0h1m18 0h1m41 0h1m41 0h1m242 0h1m11 0h1m117 0h1m21 0h1m74 0h1m-682 1h2m102 0h1m119 0h1m119 0h1m141 0h1m51 0h1m139 0h1m34 0h1m-713 1h1m338 0h1m178 0h1m90 0h1m5 0h1m128 0h1m-745 1h1m98 0h1m119 0h1m32 0h1m41 0h1m41 0h1m42 0h1m41 0h1m47 0h1m80 0h1m96 0h1m-648 1h1m40 0h1m41 0h1m11 0h1m30 0h1m41 0h1m41 0h1m4 0h1m119 0h1m117 0h1m87 0h1m41 0h1m96 0h2m-683 1h2m472 0h1m11 0h1m127 0h1m98 0h1m-713 1h1m90 0h1m119 0h1m119 0h1m186 0h1m26 0h1m69 0h1m69 0h1m58 0h1m-745 1h1m86 0h1m119 0h1m44 0h1m41 0h1m32 0h1m8 0h1m42 0h1m41 0h1m128 0h1m96 0h1m-648 1h1m40 0h1m41 0h1m42 0h1m41 0h1m41 0h1m242 0h1m23 0h1m105 0h1m33 0h1m62 0h1m-682 1h2m82 0h1m119 0h1m119 0h1m161 0h1m63 0h1m139 0h1m22 0h1m-713 1h1m78 0h1m119 0h1m119 0h1m161 0h1m36 0h1m96 0h1m5 0h1m122 0h1m-745 1h1m251 0h1m41 0h1m41 0h1m42 0h1m41 0h1m128 0h1m96 0h1m-648 1h1m40 0h1m33 0h1m7 0h1m42 0h1m41 0h1m26 0h1m14 0h1m104 0h1m137 0h1m99 0h1m29 0h1m96 0h1m12 0h1m-695 1h2m70 0h1m119 0h1m119 0h1m173 0h1m139 0h1m86 0h1m-713 1h1m517 0h1m38 0h1m57 0h1m81 0h1m46 0h1m-745 1h1m66 0h1m119 0h1m64 0h1m41 0h1m12 0h1m28 0h1m42 0h1m41 0h1m128 0h1m96 0h1m-648 1h1m40 0h1m21 0h1m19 0h1m42 0h1m41 0h1m14 0h1m26 0h1m92 0h1m149 0h1m35 0h1m93 0h1m45 0h1m50 0h1m-682 1h2m420 0h1m63 0h1m75 0h1m139 0h1m10 0h1m-713 1h1m58 0h1m119 0h1m119 0h1m119 0h1m73 0h1m24 0h1m96 0h1m17 0h1m110 0h1m-745 1h1m174 0h1m76 0h1m41 0h2m40 0h1m42 0h1m35 0h1m5 0h1m128 0h1m96 0h1m57 0h1m-706 1h1m40 0h1m13 0h1m27 0h1m42 0h1m41 0h1m41 0h1m214 0h1m27 0h1m111 0h1m17 0h1m96 0h1m-682 1h2m50 0h1m119 0h1m119 0h1m119 0h1m73 0h1m11 0h1m139 0h1m74 0h1m-713 1h1m286 0h1m119 0h1m21 0h1m88 0h1m50 0h1m45 0h1m93 0h1m34 0h1m-745 1h1m46 0h1m119 0h1m84 0h1m41 0h1m41 0h1m42 0h1m41 0h1m128 0h1m90 0h1m5 0h1m-648 1h1m40 0h1m1 0h1m39 0h1m42 0h1m36 0h1m4 0h1m41 0h1m72 0h1m119 0h1m49 0h1m47 0h1m81 0h1m96 0h1m-682 1h2m398 0h1m33 0h1m51 0h1m87 0h1m138 0h2m-714 1h1m38 0h1m119 0h1m119 0h1m225 0h1m12 0h1m96 0h1m29 0h1m98 0h1m-745 1h1m34 0h1m119 0h1m96 0h1m22 0h1m18 0h1m41 0h1m42 0h1m15 0h1m25 0h1m128 0h1m26 0h1m69 0h1m69 0h1m-718 1h1m40 0h1m41 0h1m42 0h1m41 0h1m41 0h1m226 0h1m15 0h1m129 0h1m96 0h1m-682 1h2m30 0h1m119 0h1m119 0h1m119 0h1m93 0h1m23 0h1m139 0h1m62 0h1m-713 1h1m26 0h1m119 0h1m119 0h1m119 0h1m53 0h1m76 0h1m62 0h1m33 0h1m105 0h1m22 0h1m-745 1h1m251 0h1m41 0h1m41 0h1m42 0h1m41 0h1m91 0h1m36 0h1m96 0h1m5 0h1m-654 1h1m22 0h1m17 0h1m41 0h1m42 0h1m16 0h1m24 0h1m41 0h1m52 0h1m119 0h1m69 0h1m129 0h1m96 0h1m-682 1h2m18 0h1m119 0h1m119 0h1m119 0h1m65 0h1m39 0h1m99 0h1m126 0h1m12 0h1m-726 1h1m516 0h2m96 0h1m41 0h1m86 0h1m-745 1h1m14 0h1m119 0h1m116 0h1m2 0h1m38 0h1m41 0h1m38 0h1m3 0h1m41 0h1m27 0h1m100 0h1m38 0h1m57 0h1m81 0h1m-740 1h2m8 0h1m10 0h1m29 0h1m41 0h1m42 0h1m4 0h1m36 0h1m41 0h1m40 0h1m119 0h1m81 0h1m129 0h1m96 0h1m-689 1h2m5 0h2m484 0h1m35 0h1m139 0h1m50 0h1m-719 1h2m4 0h1m6 0h1m119 0h1m119 0h1m119 0h1m85 0h1m64 0h1m74 0h1m21 0h1m117 0h1m10 0h1m-749 1h2m2 0h1m2 0h1m119 0h1m119 0h1m8 0h1m41 0h1m41 0h1m26 0h1m15 0h1m41 0h1m103 0h1m24 0h1m96 0h1m17 0h1m-668 1h3m40 0h1m41 0h1m42 0h1m41 0h1m41 0h1m242 0h1m129 0h1m96 0h1m56 0h1m-739 1h2m118 0h1m119 0h1m119 0h1m97 0h1m27 0h1m111 0h1m114 0h1m-713 1h1m114 0h1m119 0h1m119 0h1m162 0h1m10 0h1m85 0h1m53 0h1m74 0h1m-745 1h1m251 0h1m41 0h1m41 0h1m42 0h1m41 0h1m39 0h1m88 0h1m50 0h1m45 0h1m93 0h1m-742 1h1m40 0h1m41 0h1m27 0h1m14 0h1m41 0h1m41 0h1m20 0h1m119 0h1m101 0h1m129 0h1m89 0h1m6 0h1m-682 1h2m226 0h1m119 0h1m137 0h1m47 0h1m178 0h1m-713 1h1m106 0h1m357 0h1m52 0h1m86 0h1m9 0h1m128 0h1m-745 1h1m102 0h1m119 0h1m28 0h1m41 0h1m41 0h1m6 0h1m35 0h1m41 0h1m115 0h1m12 0h1m96 0h1m29 0h1m-678 1h1m40 0h1m41 0h1m42 0h1m41 0h1m41 0h1m128 0h1m113 0h1m129 0h1m25 0h1m70 0h1m-682 1h2m98 0h1m119 0h1m249 0h1m15 0h1m226 0h1m-713 1h1m94 0h1m119 0h1m119 0h1m182 0h1m22 0h1m73 0h1m65 0h1m62 0h1m-745 1h1m251 0h1m41 0h1m41 0h1m42 0h1m41 0h1m51 0h1m76 0h1m62 0h1m33 0h1m-648 1h1m40 0h1m41 0h1m7 0h1m34 0h1m41 0h1m41 0h2m119 0h1m121 0h1m91 0h1m37 0h1m96 0h1m4 0h1m-687 1h2m86 0h1m119 0h1m119 0h1m157 0h1m226 0h1m-713 1h1m476 0h1m40 0h1m96 0h1m1 0h1m126 0h1m-745 1h1m82 0h1m119 0h1m48 0h1m41 0h1m28 0h1m12 0h1m42 0h1m41 0h1m127 0h2m96 0h1m41 0h1m-690 1h1m40 0h1m37 0h1m3 0h1m42 0h1m41 0h1m30 0h1m10 0h1m108 0h1m99 0h1m33 0h1m27 0h1m101 0h1m37 0h1m58 0h1m-682 1h2m414 0h1m8 0h1m60 0h1m226 0h1m-713 1h1m74 0h1m119 0h1m119 0h1m202 0h1m34 0h1m61 0h1m77 0h1m50 0h1m-745 1h1m70 0h1m119 0h1m60 0h1m41 0h1m16 0h1m24 0h1m42 0h1m31 0h1m73 0h1m64 0h1m74 0h1m21 0h1m-648 1h1m40 0h1m41 0h1m42 0h1m41 0h1m41 0h1m196 0h1m20 0h1m24 0h1m103 0h1m25 0h1m96 0h1m16 0h1m-699 1h2m66 0h1m119 0h1m119 0h1m177 0h1m226 0h1m-713 1h1m62 0h1m119 0h1m119 0h1m99 0h1m28 0h1m56 0h1m28 0h1m96 0h1m13 0h1m114 0h1m-745 1h1m251 0h1m41 0h1m41 0h1m42 0h1m19 0h1m150 0h1m10 0h1m85 0h1m53 0h1m-702 1h1m40 0h1m17 0h1m23 0h1m42 0h1m41 0h1m10 0h1m30 0h1m88 0h1m153 0h1m39 0h1m89 0h1m49 0h1m46 0h1m-682 1h2m174 0h1m119 0h1m99 0h1m40 0h1m48 0h1m219 0h1m6 0h1m-713 1h1m54 0h1m462 0h1m46 0h1m49 0h1m128 0h1m-745 1h1m50 0h1m119 0h1m80 0h1m38 0h1m2 0h1m41 0h1m42 0h1m11 0h1m48 0h1m56 0h1m52 0h1m86 0h1m9 0h1m-648 1h1m40 0h1m41 0h1m42 0h1m41 0h1m41 0h1m76 0h1m99 0h1m65 0h1m115 0h1m13 0h1m96 0h1m28 0h1m-711 1h2m46 0h1m119 0h1m317 0h1m155 0h1m70 0h1m-713 1h1m42 0h1m119 0h1m119 0h1m99 0h1m60 0h1m56 0h1m16 0h1m96 0h1m128 0h1m-745 1h1m251 0h1m41 0h1m41 0h1m42 0h1m170 0h1m22 0h1m73 0h1m65 0h1m-714 1h1m38 0h1m1 0h1m41 0h1m42 0h1m32 0h1m8 0h1m41 0h1m68 0h1m173 0h1m51 0h1m77 0h1m61 0h1m34 0h1m-682 1h2m34 0h1m119 0h1m119 0h1m99 0h1m6 0h1m65 0h1m36 0h1m91 0h1m134 0h1m4 0h1m-718 1h1m370 0h1m146 0h1m96 0h1m128 0h1m-745 1h1m30 0h1m119 0h1m100 0h1m18 0h1m22 0h1m41 0h1m115 0h1m56 0h1m40 0h1m96 0h1m1 0h1m-650 1h1m26 0h1m13 0h1m41 0h1m42 0h1m20 0h1m20 0h1m41 0h1m56 0h1m99 0h1m18 0h1m66 0h1m127 0h1m1 0h1m96 0h1m40 0h1m-723 1h2m362 0h1m87 0h1m33 0h1m27 0h1m139 0h1m58 0h1m-713 1h1m22 0h1m119 0h1m119 0h1m126 0h1m56 0h1m8 0h1m61 0h1m96 0h1m128 0h1m-745 1h1m18 0h1m119 0h1m112 0h1m6 0h1m34 0h1m41 0h1m22 0h1m190 0h1m34 0h1m61 0h1m77 0h1m-726 1h1m40 0h1m41 0h1m42 0h1m41 0h1m41 0h1m144 0h1m87 0h1m16 0h1m56 0h1m65 0h1m73 0h1m22 0h1m-682 1h2m14 0h1m119 0h1m119 0h1m138 0h1m44 0h1m45 0h1m103 0h1m122 0h1m16 0h1m-740 1h2m8 0h1m10 0h1m119 0h1m119 0h1m99 0h1m166 0h1m96 0h1m128 0h1m-753 1h2m6 0h1m251 0h1m41 0h1m41 0h1m10 0h1m50 0h1m36 0h1m28 0h1m56 0h1m28 0h1m96 0h1m13 0h1m-668 1h2m4 0h1m6 0h1m33 0h1m41 0h1m42 0h2m40 0h1m41 0h1m36 0h1m183 0h1m151 0h1m9 0h1m86 0h1m52 0h1m-738 1h2m1 0h2m2 0h1m119 0h1m119 0h1m99 0h1m141 0h1m39 0h1m139 0h1m46 0h1m-715 1h3m338 0h1m62 0h1m24 0h1m40 0h1m49 0h1m96 0h1m121 0h1m6 0h1m-746 1h2m118 0h1m119 0h1m12 0h1m41 0h1m41 0h1m213 0h1m46 0h1m49 0h1m-648 1h1m40 0h1m41 0h1m31 0h1m10 0h1m41 0h1m41 0h1m24 0h1m99 0h1m87 0h1m48 0h1m56 0h1m53 0h1m85 0h1m10 0h1m-682 1h2m405 0h1m12 0h1m65 0h1m115 0h1m110 0h1m28 0h1m-742 1h1m110 0h1m119 0h1m99 0h1m8 0h1m177 0h1m96 0h1m57 0h1m70 0h1m-745 1h1m226 0h1m24 0h1m41 0h1m32 0h1m82 0h1m4 0h1m60 0h1m56 0h1m16 0h1m96 0h1m-648 1h1m40 0h1m41 0h1m23 0h1m18 0h1m41 0h1m41 0h1m133 0h1m66 0h1m171 0h1m21 0h1m74 0h1m-682 1h2m102 0h1m119 0h1m99 0h1m161 0h1m51 0h1m139 0h1m34 0h1m-713 1h1m318 0h1m87 0h1m6 0h1m65 0h1m37 0h1m90 0h1m5 0h1m128 0h1m-745 1h1m98 0h1m119 0h1m32 0h1m41 0h1m53 0h1m54 0h1m146 0h1m96 0h1m-648 1h1m40 0h1m41 0h1m11 0h1m30 0h1m41 0h1m41 0h1m4 0h1m99 0h1m102 0h1m65 0h1m56 0h1m41 0h1m96 0h2m-683 1h2m310 0h1m40 0h1m46 0h1m84 0h2m127 0h1m98 0h1m-713 1h1m90 0h1m119 0h1m183 0h1m122 0h1m26 0h1m69 0h1m69 0h1m58 0h1m-745 1h1m86 0h1m119 0h1m44 0h1m41 0h1m12 0h1m114 0h1m57 0h1m7 0h1m61 0h1m96 0h1m-648 1h1m40 0h1m41 0h1m42 0h1m41 0h1m41 0h1m92 0h1m52 0h1m34 0h1m84 0h1m106 0h1m33 0h1m62 0h1m-682 1h2m82 0h1m119 0h1m183 0h1m104 0h1m56 0h1m139 0h1m22 0h1m-713 1h1m78 0h1m119 0h1m99 0h1m126 0h1m45 0h1m45 0h1m96 0h1m5 0h1m122 0h1m-745 1h1m251 0h1m41 0h2m64 0h1m22 0h1m166 0h1m96 0h1m-648 1h1m40 0h1m33 0h1m7 0h1m42 0h1m41 0h1m26 0h1m14 0h1m168 0h1m50 0h1m37 0h1m27 0h1m56 0h1m29 0h1m96 0h1m12 0h1m-695 1h2m70 0h1m119 0h1m99 0h1m72 0h1m99 0h1m160 0h1m86 0h1m-713 1h1m286 0h1m10 0h1m76 0h1m142 0h1m38 0h1m57 0h1m81 0h1m46 0h1m-745 1h1m66 0h1m119 0h1m64 0h1m118 0h1m62 0h1m25 0h1m39 0h1m49 0h1m96 0h1m-648 1h1m40 0h1m21 0h1m19 0h1m42 0h1m41 0h1m14 0h1m26 0h1m72 0h1m18 0h1m65 0h1m87 0h1m126 0h1m45 0h1m50 0h1m-682 1h2m366 0h1m136 0h1m56 0h1m139 0h1m10 0h1m-713 1h1m58 0h1m119 0h1m99 0h1m158 0h1m13 0h1m65 0h1m96 0h1m17 0h1m110 0h1m-745 1h1m174 0h1m76 0h1m22 0h1m30 0h1m56 0h1m8 0h1m75 0h1m101 0h1m96 0h1m57 0h1m-706 1h1m40 0h1m13 0h1m27 0h1m42 0h1m41 0h1m41 0h1m148 0h1m82 0h1m65 0h1m56 0h1m17 0h1m96 0h1m-682 1h2m50 0h1m119 0h1m99 0h1m38 0h1m65 0h1m67 0h1m192 0h1m74 0h1m-713 1h1m266 0h1m87 0h1m84 0h1m71 0h1m5 0h1m50 0h1m45 0h1m93 0h1m34 0h1m-745 1h1m46 0h1m119 0h1m84 0h1m98 0h1m94 0h1m103 0h1m90 0h1m5 0h1m-648 1h1m40 0h1m1 0h1m39 0h1m42 0h1m36 0h1m4 0h1m41 0h1m52 0h1m50 0h1m65 0h1m55 0h1m146 0h1m96 0h1m-682 1h2m258 0h1m87 0h1m84 0h1m17 0h1m65 0h1m56 0h1m138 0h2m-714 1h1m38 0h1m119 0h1m183 0h1m40 0h1m133 0h1m96 0h1m29 0h1m98 0h1m-745 1h1m34 0h1m119 0h1m96 0h1m2 0h1m62 0h1m109 0h1m87 0h1m33 0h1m26 0h1m69 0h1m69 0h1m-718 1h1m40 0h1m41 0h1m42 0h1m41 0h1m41 0h1m40 0h1m87 0h1m84 0h1m29 0h1m57 0h1m7 0h1m62 0h1m96 0h1m-682 1h2m30 0h1m119 0h1m170 0h1m12 0h1m52 0h1m260 0h1m62 0h1m-713 1h1m26 0h1m119 0h1m99 0h1m8 0h1m163 0h1m87 0h1m15 0h1m56 0h1m33 0h1m105 0h1m22 0h1m-745 1h1m242 0h1m87 0h1m126 0h1m45 0h1m45 0h1m96 0h1m5 0h1m-654 1h1m22 0h1m17 0h1m41 0h1m42 0h1m16 0h1m24 0h1m41 0h1m49 0h1m65 0h2m64 0h1m23 0h1m166 0h1m96 0h1m-682 1h2m18 0h1m119 0h1m99 0h1m172 0h1m49 0h1m37 0h1m27 0h1m56 0h1m126 0h1m12 0h1m-726 1h1m234 0h1m87 0h1m72 0h1m99 0h1m118 0h1m41 0h1m86 0h1m-745 1h1m14 0h1m119 0h1m128 0h1m54 0h1m10 0h1m77 0h1m141 0h1m38 0h1m57 0h1m81 0h1m-740 1h2m8 0h1m10 0h1m29 0h1m41 0h1m42 0h1m4 0h1m36 0h1m41 0h1m20 0h1m172 0h1m61 0h1m25 0h1m39 0h1m50 0h1m96 0h1m-689 1h2m5 0h2m226 0h1m40 0h1m46 0h1m18 0h1m65 0h1m260 0h1m50 0h1m-719 1h2m4 0h1m6 0h1m119 0h1m272 0h1m69 0h1m17 0h1m47 0h1m56 0h1m21 0h1m117 0h1m10 0h1m-749 1h2m2 0h1m2 0h1m119 0h1m99 0h1m87 0h1m84 0h1m7 0h1m79 0h1m65 0h1m96 0h1m17 0h1m-668 1h3m40 0h1m41 0h1m42 0h1m41 0h1m41 0h1m61 0h1m34 0h1m30 0h1m244 0h1m96 0h1m56 0h1m-739 1h2m118 0h1m99 0h1m172 0h1m81 0h1m5 0h1m59 0h1m56 0h1m114 0h1m-713 1h1m114 0h1m99 0h1m87 0h1m38 0h1m45 0h1m19 0h1m67 0h1m138 0h1m53 0h1m74 0h1m-745 1h1m275 0h1m22 0h1m244 0h1m5 0h1m50 0h1m45 0h1m93 0h1m-742 1h1m40 0h1m41 0h1m27 0h1m14 0h1m41 0h1m41 0h2m172 0h1m87 0h1m5 0h1m104 0h1m89 0h1m6 0h1m-682 1h2m206 0h1m72 0h1m14 0h1m50 0h1m33 0h1m31 0h1m55 0h1m243 0h1m-713 1h1m106 0h1m183 0h1m190 0h1m65 0h1m56 0h1m9 0h1m128 0h1m-745 1h1m102 0h1m99 0h1m10 0h1m161 0h1m39 0h1m47 0h1m84 0h2m96 0h1m29 0h1m-678 1h1m40 0h1m41 0h1m42 0h1m41 0h1m30 0h1m84 0h1m2 0h1m62 0h1m21 0h1m87 0h1m122 0h1m25 0h1m70 0h1m-682 1h2m98 0h1m118 0h1m64 0h1m202 0h1m58 0h1m6 0h1m159 0h1m-713 1h1m94 0h1m99 0h1m158 0h1m13 0h1m51 0h1m35 0h1m84 0h1m73 0h1m65 0h1m62 0h1m-745 1h1m190 0h1m87 0h1m8 0h1m163 0h1m103 0h1m56 0h1m33 0h1m-648 1h1m40 0h1m41 0h1m7 0h1m34 0h1m41 0h1m53 0h1m52 0h1m88 0h1m125 0h1m46 0h1m45 0h1m96 0h1m4 0h1m-687 1h2m86 0h1m99 0h1m104 0h1m65 0h1m1 0h1m63 0h1m23 0h1m263 0h1m-713 1h1m182 0h1m42 0h1m44 0h1m172 0h1m49 0h1m38 0h1m26 0h1m54 0h1m1 0h1m126 0h1m-745 1h1m82 0h1m183 0h1m88 0h1m5 0h1m65 0h1m100 0h1m117 0h1m41 0h1m-690 1h1m40 0h1m37 0h1m3 0h1m42 0h1m41 0h1m10 0h1m116 0h1m55 0h1m87 0h1m123 0h1m18 0h1m37 0h1m58 0h1m-682 1h2m174 0h1m54 0h1m32 0h1m172 0h1m61 0h1m26 0h1m186 0h1m-713 1h1m74 0h1m183 0h1m40 0h1m47 0h1m17 0h1m65 0h1m88 0h1m93 0h1m77 0h1m50 0h1m-745 1h1m70 0h1m99 0h1m172 0h1m87 0h1m69 0h1m65 0h1m56 0h1m21 0h1m-648 1h1m40 0h1m41 0h1m42 0h1m41 0h1m65 0h1m20 0h1m180 0h1m80 0h1m65 0h1m96 0h1m16 0h1m-699 1h2m66 0h1m99 0h1m136 0h1m35 0h1m29 0h1m57 0h1m84 0h1m198 0h1m-713 1h1m62 0h1m99 0h1m74 0h1m12 0h1m84 0h1m87 0h1m81 0h1m65 0h1m42 0h1m13 0h1m114 0h1m-745 1h1m171 0h1m74 0h1m126 0h1m65 0h1m68 0h1m137 0h1m53 0h1m-702 1h1m40 0h1m17 0h1m23 0h1m42 0h1m32 0h1m148 0h1m23 0h1m87 0h1m84 0h1m70 0h1m6 0h1m49 0h1m46 0h1m-682 1h2m154 0h1m20 0h1m65 0h2m84 0h1m87 0h1m93 0h1m194 0h1m6 0h1m-713 1h1m54 0h1m183 0h1m72 0h1m65 0h1m65 0h1m56 0h1m113 0h1m128 0h1m-745 1h1m50 0h1m99 0h1m94 0h1m77 0h1m87 0h1m84 0h1m16 0h1m65 0h1m56 0h1m9 0h1m-648 1h1m40 0h1m41 0h1m42 0h1m20 0h1m32 0h1m54 0h1m84 0h1m87 0h1m39 0h1m134 0h1m96 0h1m28 0h1m-711 1h2m46 0h1m183 0h1m84 0h1m65 0h1m110 0h1m87 0h1m2 0h1m56 0h1m70 0h1m-713 1h1m42 0h1m99 0h1m40 0h1m65 0h1m65 0h1m87 0h1m84 0h1m28 0h1m58 0h1m37 0h1m128 0h1m-745 1h1m138 0h1m87 0h1m92 0h1m65 0h1m13 0h1m51 0h1m194 0h1m65 0h1m-714 1h1m38 0h1m1 0h1m41 0h1m42 0h1m96 0h1m88 0h1m172 0h1m36 0h1m50 0h1m14 0h1m56 0h1m34 0h1m-682 1h2m34 0h1m99 0h1m52 0h1m65 0h1m53 0h1m87 0h1m172 0h1m142 0h1m4 0h1m-718 1h1m130 0h1m87 0h1m104 0h1m65 0h1m1 0h1m63 0h1m24 0h1m133 0h1m128 0h1m-745 1h1m30 0h1m183 0h1m42 0h1m45 0h1m172 0h1m48 0h1m38 0h1m26 0h1m54 0h1m1 0h1m-650 1h1m26 0h1m13 0h1m41 0h1m42 0h2m64 0h1m107 0h1m87 0h1m5 0h1m65 0h1m100 0h1m118 0h1m40 0h1m-723 1h2m122 0h1m87 0h1m116 0h1m55 0h1m88 0h1m122 0h1m56 0h1m58 0h1m-713 1h1m22 0h1m105 0h1m66 0h1m10 0h1m54 0h1m33 0h1m172 0h1m60 0h1m26 0h1m57 0h1m128 0h1m-745 1h1m18 0h1m99 0h1m172 0h1m39 0h1m47 0h1m17 0h1m65 0h1m182 0h1m77 0h1m-726 1h1m40 0h1m41 0h1m31 0h1m87 0h1m62 0h1m198 0h1m68 0h1m18 0h1m46 0h1m56 0h1m22 0h1m-682 1h2m14 0h1m117 0h1m66 0h1m87 0h1m87 0h1m84 0h1m6 0h1m80 0h1m162 0h1m16 0h1m-740 1h2m8 0h1m10 0h1m99 0h1m87 0h1m84 0h1m51 0h1m35 0h1m29 0h1m212 0h1m128 0h1m-753 1h2m6 0h1m136 0h1m57 0h1m74 0h1m186 0h1m80 0h1m6 0h1m58 0h1m42 0h1m13 0h1m-668 1h2m4 0h1m6 0h1m33 0h1m41 0h1m23 0h1m96 0h1m75 0h1m87 0h1m37 0h1m46 0h1m18 0h1m68 0h1m138 0h1m52 0h1m-738 1h2m1 0h2m2 0h1m99 0h1m87 0h1m84 0h1m63 0h1m23 0h1m177 0h1m65 0h1m56 0h1m46 0h1m-715 1h3m140 0h1m45 0h1m20 0h1m65 0h1m174 0h1m87 0h1m77 0h1m121 0h1m6 0h1m-746 1h2m98 0h1m172 0h1m71 0h1m15 0h1m49 0h1m34 0h1m30 0h1m56 0h1m113 0h1m-648 1h1m40 0h1m41 0h1m11 0h1m49 0h1m37 0h1m94 0h1m77 0h1m189 0h1m65 0h1m56 0h1m10 0h1m-682 1h2m178 0h1m32 0h1m55 0h1m172 0h1m38 0h1m48 0h1m182 0h1m28 0h1m-742 1h1m90 0h1m172 0h1m83 0h1m3 0h1m61 0h1m22 0h1m87 0h1m89 0h2m56 0h1m70 0h1m-745 1h1m86 0h1m61 0h1m25 0h1m40 0h1m65 0h1m65 0h1m201 0h1m62 0h1m33 0h1m-648 1h1m40 0h1m41 0h1m87 0h1m88 0h1m91 0h1m65 0h1m14 0h1m50 0h1m36 0h1m87 0h1m70 0h1m-682 1h2m82 0h1m172 0h1m29 0h1m57 0h1m172 0h1m36 0h1m65 0h1m56 0h1m34 0h1m-713 1h1m78 0h1m73 0h1m13 0h1m52 0h1m119 0h1m88 0h1m58 0h1m116 0h1m138 0h1m-745 1h1m86 0h1m75 0h1m88 0h1m103 0h1m65 0h1m2 0h1m87 0h1m87 0h1m45 0h1m-648 1h1m40 0h1m33 0h1m81 0h1m90 0h1m41 0h1m45 0h1m221 0h1m65 0h1m55 0h2m-683 1h2m70 0h1m19 0h1m67 0h1m64 0h1m107 0h1m88 0h1m4 0h1m65 0h1m16 0h1m87 0h1m114 0h1m-713 1h1m154 0h1m88 0h1m115 0h1m56 0h1m87 0h1m87 0h1m34 0h1m56 0h1m58 0h1m-745 1h1m66 0h1m93 0h1m66 0h1m11 0h1m53 0h1m33 0h1m233 0h1m84 0h1m-648 1h1m40 0h1m21 0h1m31 0h1m55 0h1m172 0h1m39 0h1m48 0h1m16 0h1m65 0h1m4 0h1m87 0h1m90 0h1m-682 1h2m146 0h1m88 0h1m61 0h1m110 0h1m87 0h1m68 0h1m65 0h1m56 0h1m22 0h1m-713 1h1m58 0h1m39 0h1m65 0h1m66 0h1m87 0h1m179 0h1m84 0h1m158 0h1m-745 1h1m142 0h1m224 0h1m36 0h1m28 0h1m58 0h1m87 0h1m54 0h1m10 0h1m-648 1h1m40 0h1m13 0h1m113 0h1m58 0h1m7 0h1m65 0h1m13 0h1m84 0h1m87 0h1m80 0h1m109 0h1m12 0h1m-695 1h2m50 0h1m51 0h1m35 0h1m84 0h1m87 0h1m125 0h1m65 0h1m72 0h1m134 0h1m-713 1h1m134 0h1m236 0h1m24 0h1m87 0h1m87 0h2m65 0h1m56 0h1m46 0h1m-745 1h1m46 0h1m125 0h1m46 0h1m19 0h1m65 0h1m1 0h1m84 0h1m87 0h1m165 0h1m-648 1h1m40 0h1m1 0h1m63 0h1m23 0h1m172 0h1m71 0h1m65 0h1m65 0h1m60 0h1m110 0h1m-682 1h2m126 0h1m49 0h1m38 0h1m93 0h1m78 0h1m87 0h1m87 0h1m12 0h1m65 0h1m56 0h1m10 0h1m-713 1h1m38 0h1m71 0h1m100 0h1m31 0h1m55 0h1m84 0h1m60 0h1m26 0h1m38 0h1m231 0h1m-745 1h1m34 0h1m9 0h1m77 0h1m172 0h1m83 0h1m180 0h1m84 0h3m56 0h1m-706 1h1m118 0h1m61 0h1m26 0h1m39 0h1m65 0h1m66 0h1m87 0h1m87 0h1m24 0h1m97 0h1m-682 1h2m30 0h1m17 0h1m65 0h1m88 0h1m87 0h1m91 0h1m65 0h1m65 0h1m125 0h1m69 0h1m-713 1h1m26 0h1m87 0h1m172 0h1m29 0h1m58 0h1m87 0h1m87 0h1m32 0h1m51 0h1m13 0h1m56 0h1m34 0h1m-745 1h1m110 0h1m73 0h1m14 0h1m51 0h1m120 0h1m87 0h1m58 0h1m28 0h1m-550 1h1m22 0h1m29 0h1m65 0h1m76 0h1m87 0h1m103 0h1m65 0h1m179 0h1m45 0h1m-682 1h2m18 0h1m87 0h1m81 0h1m90 0h1m41 0h1m46 0h1m87 0h1m87 0h1m44 0h1m65 0h1m55 0h2m-714 1h1m56 0h1m45 0h1m19 0h1m68 0h1m63 0h1m108 0h1m87 0h1m4 0h1m65 0h1m16 0h1m88 0h1m113 0h1m-745 1h1m14 0h1m172 0h1m87 0h1m115 0h1m201 0h1m31 0h1m33 0h1m56 0h1m-718 1h1m10 0h1m87 0h1m93 0h1m66 0h1m11 0h1m53 0h1m34 0h1m87 0h1m87 0h1m142 0h1m-682 1h2m60 0h1m33 0h1m31 0h1m56 0h1m172 0h1m38 0h1m48 0h1m16 0h1m65 0h1m4 0h1m88 0h1m89 0h1m-713 1h1m6 0h1m172 0h1m87 0h1m61 0h1m267 0h1m19 0h1m45 0h1m56 0h1m22 0h1m-745 1h1m2 0h1m87 0h1m39 0h1m65 0h1m66 0h1m88 0h1m87 0h1m87 0h1m2 0h1m-533 1h1m64 0h1m110 0h1m87 0h1m84 0h1m50 0h1m36 0h1m28 0h1m147 0h1m53 0h1m11 0h1m-682 1h2m86 0h1m84 0h1m28 0h1m58 0h1m7 0h1m65 0h1m190 0h1m76 0h1m7 0h1m101 0h1m12 0h1m-730 1h3m2 0h2m66 0h1m13 0h1m51 0h1m209 0h1m58 0h1m28 0h1m36 0h1m50 0h1m14 0h1m207 0h1m-752 1h3m7 0h1m164 0h1m87 0h1m81 0h1m2 0h1m87 0h1m176 0h1m65 0h1m56 0h1m-740 1h3m10 0h3m73 0h1m125 0h1m46 0h1m19 0h1m244 0h1m22 0h1m61 0h1m77 0h1m-693 1h2m16 0h1m66 0h1m1 0h1m63 0h1m24 0h1m172 0h1m70 0h1m16 0h1m48 0h1m38 0h1m198 0h1m-706 1h2m151 0h1m48 0h1m38 0h1m93 0h1m255 0h1m11 0h1m65 0h1m56 0h1m10 0h1m-736 1h1m61 0h1m71 0h1m100 0h1m31 0h1m56 0h1m87 0h1m56 0h1m30 0h1m34 0h1m49 0h1m-585 1h2m55 0h1m9 0h1m78 0h1m172 0h1m82 0h1m4 0h1m87 0h1m174 0h1m56 0h1m-727 1h3m138 0h1m60 0h1m26 0h1m39 0h1m65 0h1m243 0h1m23 0h1m63 0h1m33 0h1m-699 1h1m48 0h1m17 0h1m65 0h1m88 0h1m88 0h1m87 0h1m2 0h1m65 0h1m18 0h1m46 0h1m37 0h1m87 0h1m69 0h1m-730 1h2m42 0h1m88 0h1m172 0h1m28 0h1m58 0h1m87 0h1m120 0h1m65 0h1m56 0h1m-725 1h1m126 0h1m6 0h1m65 0h1m14 0h1m51 0h1m267 0h1m29 0h1m87 0h1m-653 1h2m35 0h1m29 0h1m142 0h1m88 0h1m87 0h1m14 0h1m65 0h1m6 0h1m172 0h1m21 0h1m23 0h1m-694 1h2m30 0h1m88 0h1m80 0h1m91 0h1m40 0h1m46 0h1m87 0h1m88 0h1m43 0h1m121 0h1m-724 1h2m66 0h1m46 0h1m18 0h1m68 0h1m63 0h1m201 0h1m65 0h1m17 0h1m87 0h1m-640 1h1m23 0h1m172 0h1m88 0h1m48 0h1m38 0h1m26 0h1m60 0h1m140 0h1m31 0h1m33 0h1m-670 1h3m17 0h1m88 0h1m92 0h1m66 0h1m12 0h1m87 0h1m87 0h1m88 0h1m141 0h1m-687 1h1m66 0h1m34 0h1m30 0h1m56 0h1m211 0h1m65 0h1m65 0h1m5 0h1m87 0h1m89 0h1m-718 1h2m10 0h1m172 0h1m88 0h1m60 0h1m26 0h1m87 0h1m152 0h1m65 0h1m-668 1h1m5 0h1m88 0h1m38 0h1m65 0h1m66 0h2m87 0h1m112 0h1m63 0h1m1 0h1m85 0h1m-621 1h2m65 0h1m22 0h1m87 0h1m223 0h1m40 0h1m84 0h1m87 0h1m53 0h1m11 0h1m-682 1h3m199 0h1m59 0h1m6 0h1m65 0h1m14 0h1m87 0h1m164 0h1m109 0h1m-717 1h3m3 0h1m66 0h1m14 0h1m50 0h1m36 0h1m84 0h1m146 0h1m65 0h1m51 0h1m13 0h1m73 0h1m-618 1h3m7 0h2m163 0h1m169 0h1m6 0h1m87 0h1m84 0h1m87 0h1m65 0h1m-683 1h3m12 0h1m74 0h1m124 0h1m47 0h1m18 0h1m68 0h1m87 0h1m110 0h1m139 0h1m-693 1h2m16 0h2m65 0h1m2 0h1m62 0h1m24 0h1m243 0h1m65 0h1m39 0h1m87 0h1m73 0h1m35 0h1m-706 1h2m151 0h1m48 0h1m39 0h1m87 0h1m4 0h1m82 0h1m84 0h1m87 0h1m11 0h1m-602 1h2m61 0h1m4 0h1m65 0h1m101 0h1m30 0h1m56 0h1m87 0h1m56 0h1m65 0h1m-534 1h1m56 0h1m87 0h1m189 0h1m65 0h1m93 0h1m87 0h1m19 0h1m64 0h2m-670 1h3m138 0h1m60 0h1m27 0h1m38 0h1m48 0h1m87 0h1m84 0h1m87 0h1m121 0h1m-699 1h1m49 0h1m16 0h1m65 0h1m89 0h1m87 0h1m87 0h1m2 0h1m65 0h1m65 0h1m126 0h1m-661 1h2m43 0h1m87 0h1m201 0h1m147 0h1m87 0h1m31 0h1m52 0h1m12 0h1m-668 1h1m126 0h1m6 0h1m65 0h1m15 0h1m50 0h1m36 0h1m87 0h1m142 0h1m29 0h1m-565 1h2m36 0h1m28 0h1m143 0h1m87 0h1m87 0h1m14 0h1m65 0h1m7 0h1m172 0h1m20 0h1m23 0h1m-694 1h2m31 0h1m87 0h1m80 0h1m66 0h1m65 0h1m135 0h1m87 0h1m43 0h1m-602 1h2m66 0h1m46 0h1m18 0h1m69 0h1m87 0h1m87 0h1m22 0h1m65 0h1m65 0h1m17 0h1m88 0h1m-641 1h2m23 0h1m172 0h1m87 0h1m48 0h1m38 0h1m88 0h1m139 0h1m32 0h1m32 0h1m-668 1h1m18 0h1m87 0h1m92 0h1m66 0h1m189 0h1m87 0h1m141 0h1m-687 1h2m65 0h1m34 0h1m30 0h1m57 0h1m87 0h1m87 0h1m34 0h1m65 0h1m65 0h1m5 0h1m88 0h1m-629 1h2m11 0h1m172 0h1m148 0h1m26 0h1m88 0h1m151 0h1m20 0h1m44 0h1m-668 1h2m5 0h1m87 0h1m38 0h1m65 0h1m66 0h1m4 0h1m172 0h1m23 0h1m63 0h1m1 0h1m-534 1h1m65 0h1m111 0h1m87 0h1m68 0h1m18 0h1m46 0h1m201 0h1m12 0h1m52 0h1m11 0h1m-682 1h3m86 0h1m84 0h1m27 0h1m66 0h1m169 0h1m87 0h1m84 0h1m-615 1h3m2 0h1m66 0h1m14 0h1m50 0h1m125 0h1m87 0h1m54 0h1m29 0h1m35 0h1m51 0h1m13 0h1m-543 1h3m6 0h2m164 0h1m87 0h1m80 0h1m6 0h1m260 0h2m64 0h1m-682 1h3m11 0h1m74 0h1m124 0h1m66 0h1m157 0h1m87 0h1m21 0h1m62 0h1m76 0h1m-692 1h2m15 0h2m65 0h1m2 0h1m62 0h1m25 0h1m87 0h1m87 0h1m66 0h1m17 0h1m47 0h1m39 0h1m161 0h1m-670 1h2m152 0h1m47 0h1m39 0h1m87 0h1m4 0h1m256 0h1m10 0h1m-602 1h2m61 0h1m4 0h1m65 0h1m132 0h1m145 0h1m55 0h1m31 0h1m33 0h1m50 0h1m-585 1h2m55 0h1m88 0h1m87 0h1m87 0h1m12 0h1m65 0h1m5 0h1m87 0h1m107 0h1m64 0h3m-669 1h1m139 0h1m59 0h1m27 0h1m38 0h1m48 0h1m261 0h1m86 0h2m2 0h2m-670 1h2m48 0h1m16 0h1m65 0h1m266 0h1m1 0h1m65 0h1m19 0h1m45 0h1m38 0h1m87 0h3m6 0h2m-671 1h2m43 0h1m88 0h1m87 0h1m87 0h1m24 0h1m147 0h1m119 0h1m52 0h4m11 0h1m-670 1h2m126 0h1m5 0h1m65 0h1m15 0h1m50 0h1m36 0h1m88 0h1m141 0h1m30 0h1m86 0h2m15 0h2m-670 1h1m36 0h1m28 0h1m268 0h1m51 0h1m13 0h1m65 0h1m7 0h1m172 0h3m19 0h2m-672 1h3m30 0h1m88 0h1m79 0h1m7 0h1m58 0h1m28 0h1m172 0h1m88 0h1m42 0h1m42 0h2m24 0h1m-670 1h1m66 0h1m47 0h1m17 0h1m157 0h1m88 0h1m21 0h1m65 0h1m65 0h1m18 0h1m86 0h3m-642 1h2m23 0h1m176 0h1m132 0h1m39 0h1m87 0h1m139 0h1m32 0h3m-637 1h1m18 0h1m88 0h1m87 0h1m3 0h1m66 0h1m16 0h1m172 0h1m77 0h1m10 0h1m85 0h2m-633 1h2m65 0h1m35 0h1m29 0h1m145 0h1m88 0h1m33 0h1m65 0h1m72 0h1m86 0h3m-630 1h2m11 0h1m176 0h1m144 0h1m27 0h1m87 0h1m151 0h1m20 0h3m-625 1h2m5 0h1m88 0h1m37 0h1m49 0h1m15 0h1m66 0h1m4 0h1m196 0h1m64 0h2m84 0h3m-621 1h1m65 0h1m23 0h1m244 0h1m19 0h1m45 0h1m41 0h1m84 0h1m74 0h1m11 0h3m-618 1h3m175 0h1m23 0h1m63 0h1m2 0h1m81 0h1m87 0h1m172 0h3m-617 1h3m2 0h2m65 0h1m15 0h1m49 0h1m37 0h1m87 0h1m142 0h1m65 0h1m52 0h1m12 0h1m72 0h3m-618 1h3m6 0h2m333 0h1m7 0h1m87 0h1m84 0h1m86 0h3m-618 1h3m11 0h2m74 0h1m57 0h1m29 0h1m35 0h1m51 0h1m14 0h1m69 0h1m87 0h1m109 0h1m62 0h4m1 0h2m-621 1h2m16 0h1m65 0h1m3 0h1m87 0h1m87 0h1m88 0h1m65 0h1m65 0h1m40 0h1m85 0h3m6 0h2m-605 1h3m199 0h1m66 0h1m61 0h1m87 0h1m84 0h1m87 0h2m11 0h1m-603 1h1m62 0h1m3 0h1m65 0h1m17 0h1m87 0h1m172 0h1m55 0h1m65 0h1m50 0h4m14 0h2m-604 1h2m56 0h1m87 0h1m87 0h1m88 0h1m11 0h1m65 0h1m94 0h1m86 0h2m19 0h2m-604 1h1m199 0h1m66 0h1m49 0h1m87 0h1m84 0h1m87 0h3m23 0h1m-604 1h2m49 0h1m15 0h1m65 0h1m5 0h1m87 0h1m172 0h1m1 0h1m65 0h1m65 0h1m38 0h4m-576 1h2m44 0h1m175 0h1m88 0h1m23 0h1m148 0h1m86 0h2m-571 1h2m130 0h1m1 0h1m65 0h1m66 0h1m37 0h1m87 0h1m75 0h1m65 0h1m30 0h3m-567 1h1m37 0h1m27 0h1m59 0h1m87 0h1m120 0h1m51 0h1m13 0h1m74 0h1m85 0h2m-564 1h3m31 0h1m167 0h1m7 0h1m58 0h1m29 0h1m172 0h1m86 0h3m-559 1h2m65 0h1m51 0h1m13 0h1m158 0h1m87 0h1m21 0h1m65 0h1m65 0h1m18 0h3m-555 1h2m24 0h1m87 0h1m87 0h1m132 0h1m39 0h1m88 0h1m85 0h2m-550 1h2m18 0h1m175 0h1m3 0h1m66 0h1m17 0h1m172 0h1m76 0h1m9 0h3m-546 1h1m65 0h1m39 0h1m25 0h1m146 0h1m87 0h1m33 0h1m65 0h1m72 0h3m-543 1h3m11 0h1m87 0h1m87 0h1m144 0h1m27 0h1m88 0h1m85 0h3m-538 1h1m6 0h1m59 0h1m65 0h1m49 0h1m15 0h1m66 0h1m5 0h1m172 0h1m22 0h1m63 0h4m-535 1h2m92 0h1m172 0h1m67 0h1m19 0h1m45 0h1m126 0h3m4 0h2m-535 1h2m86 0h1m87 0h1m23 0h1m66 0h1m170 0h1m85 0h3m8 0h2m-540 1h3m1 0h2m65 0h1m65 0h1m126 0h1m87 0h1m53 0h1m30 0h1m34 0h1m52 0h2m13 0h1m-544 1h3m5 0h2m80 0h1m87 0h1m84 0h1m79 0h1m7 0h1m172 0h4m16 0h2m-549 1h3m10 0h2m74 0h1m57 0h1m29 0h1m35 0h1m66 0h1m158 0h1m85 0h3m21 0h2m-553 1h2m15 0h1m65 0h1m180 0h1m87 0h1m65 0h1m18 0h1m46 0h1m40 0h2m26 0h1m-537 1h3m67 0h1m87 0h1m43 0h1m66 0h1m61 0h1m172 0h4m-505 1h1m66 0h1m65 0h1m17 0h1m88 0h1m161 0h1m10 0h1m54 0h1m31 0h2m-501 1h2m60 0h1m172 0h1m87 0h1m11 0h1m72 0h1m87 0h3m-497 1h2m54 0h1m87 0h1m55 0h1m66 0h1m49 0h1m172 0h4m-492 1h1m65 0h1m65 0h1m5 0h1m88 0h1m172 0h2m65 0h1m19 0h2m-489 1h3m47 0h1m172 0h1m87 0h1m23 0h1m148 0h3m-484 1h1m42 0h1m87 0h1m1 0h1m65 0h1m66 0h1m37 0h1m88 0h1m74 0h1m10 0h2m-480 1h2m64 0h1m59 0h1m88 0h1m119 0h1m52 0h1m12 0h1m73 0h3m-476 1h1m35 0h1m163 0h1m8 0h1m57 0h1m29 0h1m172 0h3m-472 1h2m29 0h1m35 0h1m51 0h1m13 0h1m158 0h1m88 0h1m20 0h1m64 0h3m-469 1h2m112 0h1m88 0h1m131 0h1m40 0h1m86 0h3m3 0h2m-469 1h2m22 0h1m109 0h1m62 0h1m2 0h1m66 0h1m17 0h1m172 0h3m8 0h2m-469 1h1m17 0h1m47 0h1m39 0h1m172 0h1m55 0h1m32 0h1m32 0h1m52 0h3m12 0h1m-470 1h3m99 0h1m88 0h1m172 0h1m86 0h3m16 0h2m-469 1h1m10 0h1m55 0h1m65 0h1m50 0h1m14 0h1m66 0h1m5 0h1m172 0h3m21 0h2m-470 1h2m4 0h1m87 0h1m240 0h1m20 0h1m44 0h1m40 0h3m25 0h1" stroke="#000" stroke-width="1" fill="none"/>
<g><polygon points="445.5,18.5 466.5,-18.5 450.5,-9.5 429.5,28.5" fill="#50ffaf"/><polygon points="424.5,50.5 445.5,18.5 429.5,28.5 408.5,59.5" fill="#10ffef"/><polygon points="403.5,77.5 424.5,50.5 408.5,59.5 386.5,86.5" fill="#00cfff"/><polygon points="382.5,100.5 403.5,77.5 386.5,86.5 365.5,109.5" fill="#00afff"/><polygon points="360.5,119.5 382.5,100.5 365.5,109.5 344.5,128.5" fill="#008fff"/><polygon points="339.5,134.5 360.5,119.5 344.5,128.5 323.5,143.5" fill="#0080ff"/><polygon points="318.5,147.5 339.5,134.5 323.5,143.5 302.5,156.5" fill="#0070ff"/><polygon points="297.5,157.5 318.5,147.5 302.5,156.5 281.5,166.5" fill="#0060ff"/><polygon points="276.5,166.5 297.5,157.5 281.5,166.5 260.5,175.5" fill="#0060ff"/><polygon points="255.5,173.5 276.5,166.5 260.5,175.5 239.5,183.5" fill="#0060ff"/><polygon points="234.5,181.5 255.5,173.5 239.5,183.5 218.5,190.5" fill="#0060ff"/><polygon points="213.5,188.5 234.5,181.5 218.5,190.5 197.5,197.5" fill="#0070ff"/><polygon points="192.5,195.5 213.5,188.5 197.5,197.5 176.5,204.5" fill="#0070ff"/><polygon points="171.5,204.5 192.5,195.5 176.5,204.5 155.5,213.5" fill="#0070ff"/><polygon points="150.5,214.5 171.5,204.5 155.5,213.5 133.5,224.5" fill="#0060ff"/><polygon points="129.5,227.5 150.5,214.5 133.5,224.5 112.5,236.5" fill="#0050ff"/><polygon points="108.5,242.5 129.5,227.5 112.5,236.5 91.5,252.5" fill="#0040ff"/><polygon points="86.5,261.5 108.5,242.5 91.5,252.5 70.5,270.5" fill="#0020ff"/><polygon points="65.5,284.5 86.5,261.5 70.5,270.5 49.5,293.5" fill="#0000ff"/><polygon points="44.5,311.5 65.5,284.5 49.5,293.5 28.5,320.5" fill="#0000bf"/><polygon points="461.5,14.5 482.5,-23.5 466.5,-18.5 445.5,18.5" fill="#80ff80"/><polygon points="440.5,46.5 461.5,14.5 445.5,18.5 424.5,50.5" fill="#40ffbf"/><polygon points="419.5,73.5 440.5,46.5 424.5,50.5 403.5,77.5" fill="#00ffff"/><polygon points="398.5,95.5 419.5,73.5 403.5,77.5 382.5,100.5" fill="#00dfff"/><polygon points="377.5,114.5 398.5,95.5 382.5,100.5 360.5,119.5" fill="#00bfff"/><polygon points="356.5,129.5 377.5,114.5 360.5,119.5 339.5,134.5" fill="#009fff"/><polygon points="335.5,142.5 356.5,129.5 339.5,134.5 318.5,147.5" fill="#009fff"/><polygon points="313.5,152.5 335.5,142.5 318.5,147.5 297.5,157.5" fill="#008fff"/><polygon points="292.5,161.5 313.5,152.5 297.5,157.5 276.5,166.5" fill="#008fff"/><polygon points="271.5,169.5 292.5,161.5 276.5,166.5 255.5,173.5" fill="#008fff"/><polygon points="250.5,176.5 271.5,169.5 255.5,173.5 234.5,181.5" fill="#008fff"/><polygon points="229.5,183.5 250.5,176.5 234.5,181.5 213.5,188.5" fill="#008fff"/><polygon points="208.5,191.5 229.5,183.5 213.5,188.5 192.5,195.5" fill="#009fff"/><polygon points="187.5,199.5 208.5,191.5 192.5,195.5 171.5,204.5" fill="#008fff"/><polygon points="166.5,210.5 187.5,199.5 171.5,204.5 150.5,214.5" fill="#008fff"/><polygon points="145.5,222.5 166.5,210.5 150.5,214.5 129.5,227.5" fill="#0080ff"/><polygon points="124.5,238.5 145.5,222.5 129.5,227.5 108.5,242.5" fill="#0070ff"/><polygon points="103.5,256.5 124.5,238.5 108.5,242.5 86.5,261.5" fill="#0050ff"/><polygon points="82.5,279.5 103.5,256.5 86.5,261.5 65.5,284.5" fill="#0020ff"/><polygon points="60.5,306.5 82.5,279.5 65.5,284.5 44.5,311.5" fill="#0000ef"/><polygon points="477.5,13.5 498.5,-24.5 482.5,-23.5 461.5,14.5" fill="#9fff60"/><polygon points="456.5,45.5 477.5,13.5 461.5,14.5 440.5,46.5" fill="#60ff9f"/><polygon points="435.5,72.5 456.5,45.5 440.5,46.5 419.5,73.5" fill="#20ffdf"/><polygon points="414.5,94.5 435.5,72.5 419.5,73.5 398.5,95.5" fill="#00ffff"/><polygon points="393.5,113.5 414.5,94.5 398.5,95.5 377.5,114.5" fill="#00dfff"/><polygon points="372.5,128.5 393.5,113.5 377.5,114.5 356.5,129.5" fill="#00bfff"/><polygon points="351.5,141.5 372.5,128.5 356.5,129.5 335.5,142.5" fill="#00bfff"/><polygon points="330.5,152.5 351.5,141.5 335.5,142.5 313.5,152.5" fill="#00afff"/><polygon points="309.5,160.5 330.5,152.5 313.5,152.5 292.5,161.5" fill="#00afff"/><polygon points="287.5,168.5 309.5,160.5 292.5,161.5 271.5,169.5" fill="#00afff"/><polygon points="266.5,175.5 287.5,168.5 271.5,169.5 250.5,176.5" fill="#00afff"/><polygon points="245.5,182.5 266.5,175.5 250.5,176.5 229.5,183.5" fill="#00bfff"/><polygon points="224.5,190.5 245.5,182.5 229.5,183.5 208.5,191.5" fill="#00bfff"/><polygon points="203.5,199.5 224.5,190.5 208.5,191.5 187.5,199.5" fill="#00afff"/><polygon points="182.5,209.5 203.5,199.5 187.5,199.5 166.5,210.5" fill="#00afff"/><polygon points="161.5,222.5 182.5,209.5 166.5,210.5 145.5,222.5" fill="#009fff"/><polygon points="140.5,237.5 161.5,222.5 145.5,222.5 124.5,238.5" fill="#008fff"/><polygon points="119.5,256.5 140.5,237.5 124.5,238.5 103.5,256.5" fill="#0070ff"/><polygon points="98.5,278.5 119.5,256.5 103.5,256.5 82.5,279.5" fill="#0040ff"/><polygon points="77.5,305.5 98.5,278.5 82.5,279.5 60.5,306.5" fill="#0010ff"/><polygon points="493.5,15.5 514.5,-21.5 498.5,-24.5 477.5,13.5" fill="#bfff40"/><polygon points="472.5,47.5 493.5,15.5 477.5,13.5 456.5,45.5" fill="#70ff8f"/><polygon points="451.5,74.5 472.5,47.5 456.5,45.5 435.5,72.5" fill="#40ffbf"/><polygon points="430.5,97.5 451.5,74.5 435.5,72.5 414.5,94.5" fill="#10ffef"/><polygon points="409.5,116.5 430.5,97.5 414.5,94.5 393.5,113.5" fill="#00efff"/><polygon points="388.5,131.5 409.5,116.5 393.5,113.5 372.5,128.5" fill="#00dfff"/><polygon points="367.5,144.5 388.5,131.5 372.5,128.5 351.5,141.5" fill="#00cfff"/><polygon points="346.5,154.5 367.5,144.5 351.5,141.5 330.5,152.5" fill="#00cfff"/><polygon points="325.5,163.5 346.5,154.5 330.5,152.5 309.5,160.5" fill="#00cfff"/><polygon points="304.5,170.5 325.5,163.5 309.5,160.5 287.5,168.5" fill="#00cfff"/><polygon points="283.5,177.5 304.5,170.5 287.5,168.5 266.5,175.5" fill="#00cfff"/><polygon points="261.5,185.5 283.5,177.5 266.5,175.5 245.5,182.5" fill="#00cfff"/><polygon points="240.5,192.5 261.5,185.5 245.5,182.5 224.5,190.5" fill="#00cfff"/><polygon points="219.5,201.5 240.5,192.5 224.5,190.5 203.5,199.5" fill="#00cfff"/><polygon points="198.5,211.5 219.5,201.5 203.5,199.5 182.5,209.5" fill="#00cfff"/><polygon points="177.5,224.5 198.5,211.5 182.5,209.5 161.5,222.5" fill="#00bfff"/><polygon points="156.5,239.5 177.5,224.5 161.5,222.5 140.5,237.5" fill="#009fff"/><polygon points="135.5,258.5 156.5,239.5 140.5,237.5 119.5,256.5" fill="#0080ff"/><polygon points="114.5,281.5 135.5,258.5 119.5,256.5 98.5,278.5" fill="#0060ff"/><polygon points="93.5,308.5 114.5,281.5 98.5,278.5 77.5,305.5" fill="#0020ff"/><polygon points="510.5,21.5 531.5,-16.5 514.5,-21.5 493.5,15.5" fill="#cfff30"/><polygon points="488.5,53.5 510.5,21.5 493.5,15.5 472.5,47.5" fill="#80ff80"/><polygon points="467.5,80.5 488.5,53.5 472.5,47.5 451.5,74.5" fill="#50ffaf"/><polygon points="446.5,102.5 467.5,80.5 451.5,74.5 430.5,97.5" fill="#20ffdf"/><polygon points="425.5,121.5 446.5,102.5 430.5,97.5 409.5,116.5" fill="#00ffff"/><polygon points="404.5,136.5 425.5,121.5 409.5,116.5 388.5,131.5" fill="#00efff"/><polygon points="383.5,149.5 404.5,136.5 388.5,131.5 367.5,144.5" fill="#00dfff"/><polygon points="362.5,159.5 383.5,149.5 367.5,144.5 346.5,154.5" fill="#00dfff"/><polygon points="341.5,168.5 362.5,159.5 346.5,154.5 325.5,163.5" fill="#00dfff"/><polygon points="320.5,176.5 341.5,168.5 325.5,163.5 304.5,170.5" fill="#00dfff"/><polygon points="299.5,183.5 320.5,176.5 304.5,170.5 283.5,177.5" fill="#00dfff"/><polygon points="278.5,190.5 299.5,183.5 283.5,177.5 261.5,185.5" fill="#00dfff"/><polygon points="257.5,197.5 278.5,190.5 261.5,185.5 240.5,192.5" fill="#00dfff"/><polygon points="236.5,206.5 257.5,197.5 240.5,192.5 219.5,201.5" fill="#00dfff"/><polygon points="214.5,217.5 236.5,206.5 219.5,201.5 198.5,211.5" fill="#00dfff"/><polygon points="193.5,229.5 214.5,217.5 198.5,211.5 177.5,224.5" fill="#00cfff"/><polygon points="172.5,245.5 193.5,229.5 177.5,224.5 156.5,239.5" fill="#00afff"/><polygon points="151.5,263.5 172.5,245.5 156.5,239.5 135.5,258.5" fill="#008fff"/><polygon points="130.5,286.5 151.5,263.5 135.5,258.5 114.5,281.5" fill="#0070ff"/><polygon points="109.5,313.5 130.5,286.5 114.5,281.5 93.5,308.5" fill="#0030ff"/><polygon points="526.5,28.5 547.5,-8.5 531.5,-16.5 510.5,21.5" fill="#cfff30"/><polygon points="505.5,60.5 526.5,28.5 510.5,21.5 488.5,53.5" fill="#8fff70"/><polygon points="484.5,87.5 505.5,60.5 488.5,53.5 467.5,80.5" fill="#50ffaf"/><polygon points="463.5,110.5 484.5,87.5 467.5,80.5 446.5,102.5" fill="#30ffcf"/><polygon points="441.5,128.5 463.5,110.5 446.5,102.5 425.5,121.5" fill="#10ffef"/><polygon points="420.5,144.5 441.5,128.5 425.5,121.5 404.5,136.5" fill="#00efff"/><polygon points="399.5,156.5 420.5,144.5 404.5,136.5 383.5,149.5" fill="#00efff"/><polygon points="378.5,167.5 399.5,156.5 383.5,149.5 362.5,159.5" fill="#00dfff"/><polygon points="357.5,175.5 378.5,167.5 362.5,159.5 341.5,168.5" fill="#00dfff"/><polygon points="336.5,183.5 357.5,175.5 341.5,168.5 320.5,176.5" fill="#00dfff"/><polygon points="315.5,190.5 336.5,183.5 320.5,176.5 299.5,183.5" fill="#00dfff"/><polygon points="294.5,197.5 315.5,190.5 299.5,183.5 278.5,190.5" fill="#00efff"/><polygon points="273.5,205.5 294.5,197.5 278.5,190.5 257.5,197.5" fill="#00efff"/><polygon points="252.5,214.5 273.5,205.5 257.5,197.5 236.5,206.5" fill="#00efff"/><polygon points="231.5,224.5 252.5,214.5 236.5,206.5 214.5,217.5" fill="#00dfff"/><polygon points="210.5,237.5 231.5,224.5 214.5,217.5 193.5,229.5" fill="#00cfff"/><polygon points="188.5,252.5 210.5,237.5 193.5,229.5 172.5,245.5" fill="#00bfff"/><polygon points="167.5,271.5 188.5,252.5 172.5,245.5 151.5,263.5" fill="#009fff"/><polygon points="146.5,293.5 167.5,271.5 151.5,263.5 130.5,286.5" fill="#0070ff"/><polygon points="125.5,320.5 146.5,293.5 130.5,286.5 109.5,313.5" fill="#0040ff"/><polygon points="542.5,37.5 563.5,0.5 547.5,-8.5 526.5,28.5" fill="#cfff30"/><polygon points="521.5,69.5 542.5,37.5 526.5,28.5 505.5,60.5" fill="#8fff70"/><polygon points="500.5,96.5 521.5,69.5 505.5,60.5 484.5,87.5" fill="#60ff9f"/><polygon points="479.5,119.5 500.5,96.5 484.5,87.5 463.5,110.5" fill="#30ffcf"/><polygon points="458.5,137.5 479.5,119.5 463.5,110.5 441.5,128.5" fill="#10ffef"/><polygon points="437.5,153.5 458.5,137.5 441.5,128.5 420.5,144.5" fill="#00ffff"/><polygon points="415.5,165.5 437.5,153.5 420.5,144.5 399.5,156.5" fill="#00efff"/><polygon points="394.5,176.5 415.5,165.5 399.5,156.5 378.5,167.5" fill="#00dfff"/><polygon points="373.5,185.5 394.5,176.5 378.5,167.5 357.5,175.5" fill="#00dfff"/><polygon points="352.5,192.5 373.5,185.5 357.5,175.5 336.5,183.5" fill="#00dfff"/><polygon points="331.5,199.5 352.5,192.5 336.5,183.5 315.5,190.5" fill="#00efff"/><polygon points="310.5,206.5 331.5,199.5 315.5,190.5 294.5,197.5" fill="#00efff"/><polygon points="289.5,214.5 310.5,206.5 294.5,197.5 273.5,205.5" fill="#00efff"/><polygon points="268.5,223.5 289.5,214.5 273.5,205.5 252.5,214.5" fill="#00efff"/><polygon points="247.5,233.5 268.5,223.5 252.5,214.5 231.5,224.5" fill="#00dfff"/><polygon points="226.5,246.5 247.5,233.5 231.5,224.5 210.5,237.5" fill="#00dfff"/><polygon points="205.5,261.5 226.5,246.5 210.5,237.5 188.5,252.5" fill="#00bfff"/><polygon points="184.5,280.5 205.5,261.5 188.5,252.5 167.5,271.5" fill="#009fff"/><polygon points="162.5,302.5 184.5,280.5 167.5,271.5 146.5,293.5" fill="#0080ff"/><polygon points="141.5,329.5 162.5,302.5 146.5,293.5 125.5,320.5" fill="#0040ff"/><polygon points="558.5,47.5 579.5,10.5 563.5,0.5 542.5,37.5" fill="#cfff30"/><polygon points="537.5,79.5 558.5,47.5 542.5,37.5 521.5,69.5" fill="#8fff70"/><polygon points="516.5,106.5 537.5,79.5 521.5,69.5 500.5,96.5" fill="#60ff9f"/><polygon points="495.5,129.5 516.5,106.5 500.5,96.5 479.5,119.5" fill="#30ffcf"/><polygon points="474.5,148.5 495.5,129.5 479.5,119.5 458.5,137.5" fill="#10ffef"/><polygon points="453.5,163.5 474.5,148.5 458.5,137.5 437.5,153.5" fill="#00ffff"/><polygon points="432.5,176.5 453.5,163.5 437.5,153.5 415.5,165.5" fill="#00efff"/><polygon points="411.5,186.5 432.5,176.5 415.5,165.5 394.5,176.5" fill="#00efff"/><polygon points="389.5,195.5 411.5,186.5 394.5,176.5 373.5,185.5" fill="#00dfff"/><polygon points="368.5,202.5 389.5,195.5 373.5,185.5 352.5,192.5" fill="#00efff"/><polygon points="347.5,210.5 368.5,202.5 352.5,192.5 331.5,199.5" fill="#00efff"/><polygon points="326.5,217.5 347.5,210.5 331.5,199.5 310.5,206.5" fill="#00efff"/><polygon points="305.5,224.5 326.5,217.5 310.5,206.5 289.5,214.5" fill="#00efff"/><polygon points="284.5,233.5 305.5,224.5 289.5,214.5 268.5,223.5" fill="#00efff"/><polygon points="263.5,243.5 284.5,233.5 268.5,223.5 247.5,233.5" fill="#00dfff"/><polygon points="242.5,256.5 263.5,243.5 247.5,233.5 226.5,246.5" fill="#00dfff"/><polygon points="221.5,271.5 242.5,256.5 226.5,246.5 205.5,261.5" fill="#00bfff"/><polygon points="200.5,290.5 221.5,271.5 205.5,261.5 184.5,280.5" fill="#009fff"/><polygon points="179.5,313.5 200.5,290.5 184.5,280.5 162.5,302.5" fill="#0080ff"/><polygon points="158.5,340.5 179.5,313.5 162.5,302.5 141.5,329.5" fill="#0040ff"/><polygon points="574.5,58.5 595.5,21.5 579.5,10.5 558.5,47.5" fill="#cfff30"/><polygon points="553.5,90.5 574.5,58.5 558.5,47.5 537.5,79.5" fill="#8fff70"/><polygon points="532.5,117.5 553.5,90.5 537.5,79.5 516.5,106.5" fill="#60ff9f"/><polygon points="511.5,140.5 532.5,117.5 516.5,106.5 495.5,129.5" fill="#30ffcf"/><polygon points="490.5,158.5 511.5,140.5 495.5,129.5 474.5,148.5" fill="#10ffef"/><polygon points="469.5,174.5 490.5,158.5 474.5,148.5 453.5,163.5" fill="#00ffff"/><polygon points="448.5,186.5 469.5,174.5 453.5,163.5 432.5,176.5" fill="#00efff"/><polygon points="427.5,197.5 448.5,186.5 432.5,176.5 411.5,186.5" fill="#00efff"/><polygon points="406.5,206.5 427.5,197.5 411.5,186.5 389.5,195.5" fill="#00dfff"/><polygon points="385.5,213.5 406.5,206.5 389.5,195.5 368.5,202.5" fill="#00dfff"/><polygon points="364.5,220.5 385.5,213.5 368.5,202.5 347.5,210.5" fill="#00efff"/><polygon points="342.5,227.5 364.5,220.5 347.5,210.5 326.5,217.5" fill="#00efff"/><polygon points="321.5,235.5 342.5,227.5 326.5,217.5 305.5,224.5" fill="#00efff"/><polygon points="300.5,244.5 321.5,235.5 305.5,224.5 284.5,233.5" fill="#00efff"/><polygon points="279.5,254.5 300.5,244.5 284.5,233.5 263.5,243.5" fill="#00dfff"/><polygon points="258.5,267.5 279.5,254.5 263.5,243.5 242.5,256.5" fill="#00dfff"/><polygon points="237.5,282.5 258.5,267.5 242.5,256.5 221.5,271.5" fill="#00bfff"/><polygon points="216.5,301.5 237.5,282.5 221.5,271.5 200.5,290.5" fill="#009fff"/><polygon points="195.5,323.5 216.5,301.5 200.5,290.5 179.5,313.5" fill="#0080ff"/><polygon points="174.5,350.5 195.5,323.5 179.5,313.5 158.5,340.5" fill="#0040ff"/><polygon points="591.5,69.5 612.5,31.5 595.5,21.5 574.5,58.5" fill="#cfff30"/><polygon points="569.5,101.5 591.5,69.5 574.5,58.5 553.5,90.5" fill="#8fff70"/><polygon points="548.5,128.5 569.5,101.5 553.5,90.5 532.5,117.5" fill="#60ff9f"/><polygon points="527.5,150.5 548.5,128.5 532.5,117.5 511.5,140.5" fill="#30ffcf"/><polygon points="506.5,169.5 527.5,150.5 511.5,140.5 490.5,158.5" fill="#10ffef"/><polygon points="485.5,185.5 506.5,169.5 490.5,158.5 469.5,174.5" fill="#00ffff"/><polygon points="464.5,197.5 485.5,185.5 469.5,174.5 448.5,186.5" fill="#00efff"/><polygon points="443.5,208.5 464.5,197.5 448.5,186.5 427.5,197.5" fill="#00dfff"/><polygon points="422.5,216.5 443.5,208.5 427.5,197.5 406.5,206.5" fill="#00dfff"/><polygon points="401.5,224.5 422.5,216.5 406.5,206.5 385.5,213.5" fill="#00dfff"/><polygon points="380.5,231.5 401.5,224.5 385.5,213.5 364.5,220.5" fill="#00efff"/><polygon points="359.5,238.5 380.5,231.5 364.5,220.5 342.5,227.5" fill="#00efff"/><polygon points="338.5,246.5 359.5,238.5 342.5,227.5 321.5,235.5" fill="#00efff"/><polygon points="316.5,255.5 338.5,246.5 321.5,235.5 300.5,244.5" fill="#00efff"/><polygon points="295.5,265.5 316.5,255.5 300.5,244.5 279.5,254.5" fill="#00dfff"/><polygon points="274.5,278.5 295.5,265.5 279.5,254.5 258.5,267.5" fill="#00dfff"/><polygon points="253.5,293.5 274.5,278.5 258.5,267.5 237.5,282.5" fill="#00bfff"/><polygon points="232.5,312.5 253.5,293.5 237.5,282.5 216.5,301.5" fill="#009fff"/><polygon points="211.5,334.5 232.5,312.5 216.5,301.5 195.5,323.5" fill="#0080ff"/><polygon points="190.5,361.5 211.5,334.5 195.5,323.5 174.5,350.5" fill="#0040ff"/><polygon points="607.5,79.5 628.5,42.5 612.5,31.5 591.5,69.5" fill="#cfff30"/><polygon points="586.5,111.5 607.5,79.5 591.5,69.5 569.5,101.5" fill="#8fff70"/><polygon points="565.5,138.5 586.5,111.5 569.5,101.5 548.5,128.5" fill="#60ff9f"/><polygon points="543.5,161.5 565.5,138.5 548.5,128.5 527.5,150.5" fill="#30ffcf"/><polygon points="522.5,179.5 543.5,161.5 527.5,150.5 506.5,169.5" fill="#10ffef"/><polygon points="501.5,195.5 522.5,179.5 506.5,169.5 485.5,185.5" fill="#00ffff"/><polygon points="480.5,207.5 501.5,195.5 485.5,185.5 464.5,197.5" fill="#00efff"/><polygon points="459.5,218.5 480.5,207.5 464.5,197.5 443.5,208.5" fill="#00efff"/><polygon points="438.5,227.5 459.5,218.5 443.5,208.5 422.5,216.5" fill="#00dfff"/><polygon points="417.5,234.5 438.5,227.5 422.5,216.5 401.5,224.5" fill="#00efff"/><polygon points="396.5,241.5 417.5,234.5 401.5,224.5 380.5,231.5" fill="#00efff"/><polygon points="375.5,248.5 396.5,241.5 380.5,231.5 359.5,238.5" fill="#00efff"/><polygon points="354.5,256.5 375.5,248.5 359.5,238.5 338.5,246.5" fill="#00efff"/><polygon points="333.5,265.5 354.5,256.5 338.5,246.5 316.5,255.5" fill="#00efff"/><polygon points="312.5,275.5 333.5,265.5 316.5,255.5 295.5,265.5" fill="#00dfff"/><polygon points="290.5,288.5 312.5,275.5 295.5,265.5 274.5,278.5" fill="#00dfff"/><polygon points="269.5,303.5 290.5,288.5 274.5,278.5 253.5,293.5" fill="#00bfff"/><polygon points="248.5,322.5 269.5,303.5 253.5,293.5 232.5,312.5" fill="#009fff"/><polygon points="227.5,344.5 248.5,322.5 232.5,312.5 211.5,334.5" fill="#0080ff"/><polygon points="206.5,371.5 227.5,344.5 211.5,334.5 190.5,361.5" fill="#0040ff"/><polygon points="623.5,88.5 644.5,51.5 628.5,42.5 607.5,79.5" fill="#dfff20"/><polygon points="602.5,120.5 623.5,88.5 607.5,79.5 586.5,111.5" fill="#8fff70"/><polygon points="581.5,147.5 602.5,120.5 586.5,111.5 565.5,138.5" fill="#60ff9f"/><polygon points="560.5,170.5 581.5,147.5 565.5,138.5 543.5,161.5" fill="#30ffcf"/><polygon points="539.5,188.5 560.5,170.5 543.5,161.5 522.5,179.5" fill="#10ffef"/><polygon points="517.5,204.5 539.5,188.5 522.5,179.5 501.5,195.5" fill="#00ffff"/><polygon points="496.5,216.5 517.5,204.5 501.5,195.5 480.5,207.5" fill="#00efff"/><polygon points="475.5,227.5 496.5,216.5 480.5,207.5 459.5,218.5" fill="#00efff"/><polygon points="454.5,236.5 475.5,227.5 459.5,218.5 438.5,227.5" fill="#00efff"/><polygon points="433.5,243.5 454.5,236.5 438.5,227.5 417.5,234.5" fill="#00efff"/><polygon points="412.5,250.5 433.5,243.5 417.5,234.5 396.5,241.5" fill="#00efff"/><polygon points="391.5,257.5 412.5,250.5 396.5,241.5 375.5,248.5" fill="#00efff"/><polygon points="370.5,265.5 391.5,257.5 375.5,248.5 354.5,256.5" fill="#00efff"/><polygon points="349.5,274.5 370.5,265.5 354.5,256.5 333.5,265.5" fill="#00efff"/><polygon points="328.5,284.5 349.5,274.5 333.5,265.5 312.5,275.5" fill="#00efff"/><polygon points="307.5,297.5 328.5,284.5 312.5,275.5 290.5,288.5" fill="#00dfff"/><polygon points="286.5,312.5 307.5,297.5 290.5,288.5 269.5,303.5" fill="#00cfff"/><polygon points="265.5,331.5 286.5,312.5 269.5,303.5 248.5,322.5" fill="#00afff"/><polygon points="243.5,354.5 265.5,331.5 248.5,322.5 227.5,344.5" fill="#0080ff"/><polygon points="222.5,381.5 243.5,354.5 227.5,344.5 206.5,371.5" fill="#0050ff"/><polygon points="639.5,96.5 660.5,58.5 644.5,51.5 623.5,88.5" fill="#dfff20"/><polygon points="618.5,128.5 639.5,96.5 623.5,88.5 602.5,120.5" fill="#9fff60"/><polygon points="597.5,155.5 618.5,128.5 602.5,120.5 581.5,147.5" fill="#70ff8f"/><polygon points="576.5,177.5 597.5,155.5 581.5,147.5 560.5,170.5" fill="#40ffbf"/><polygon points="555.5,196.5 576.5,177.5 560.5,170.5 539.5,188.5" fill="#20ffdf"/><polygon points="534.5,211.5 555.5,196.5 539.5,188.5 517.5,204.5" fill="#10ffef"/><polygon points="513.5,224.5 534.5,211.5 517.5,204.5 496.5,216.5" fill="#00ffff"/><polygon points="492.5,234.5 513.5,224.5 496.5,216.5 475.5,227.5" fill="#00efff"/><polygon points="470.5,243.5 492.5,234.5 475.5,227.5 454.5,236.5" fill="#00efff"/><polygon points="449.5,251.5 470.5,243.5 454.5,236.5 433.5,243.5" fill="#00efff"/><polygon points="428.5,258.5 449.5,251.5 433.5,243.5 412.5,250.5" fill="#00ffff"/><polygon points="407.5,265.5 428.5,258.5 412.5,250.5 391.5,257.5" fill="#00ffff"/><polygon points="386.5,273.5 407.5,265.5 391.5,257.5 370.5,265.5" fill="#00ffff"/><polygon points="365.5,281.5 386.5,273.5 370.5,265.5 349.5,274.5" fill="#00ffff"/><polygon points="344.5,292.5 365.5,281.5 349.5,274.5 328.5,284.5" fill="#00efff"/><polygon points="323.5,304.5 344.5,292.5 328.5,284.5 307.5,297.5" fill="#00dfff"/><polygon points="302.5,320.5 323.5,304.5 307.5,297.5 286.5,312.5" fill="#00cfff"/><polygon points="281.5,338.5 302.5,320.5 286.5,312.5 265.5,331.5" fill="#00afff"/><polygon points="260.5,361.5 281.5,338.5 265.5,331.5 243.5,354.5" fill="#008fff"/><polygon points="239.5,388.5 260.5,361.5 243.5,354.5 222.5,381.5" fill="#0050ff"/><polygon points="655.5,101.5 676.5,63.5 660.5,58.5 639.5,96.5" fill="#efff10"/><polygon points="634.5,133.5 655.5,101.5 639.5,96.5 618.5,128.5" fill="#afff50"/><polygon points="613.5,160.5 634.5,133.5 618.5,128.5 597.5,155.5" fill="#70ff8f"/><polygon points="592.5,182.5 613.5,160.5 597.5,155.5 576.5,177.5" fill="#50ffaf"/><polygon points="571.5,201.5 592.5,182.5 576.5,177.5 555.5,196.5" fill="#30ffcf"/><polygon points="550.5,217.5 571.5,201.5 555.5,196.5 534.5,211.5" fill="#20ffdf"/><polygon points="529.5,229.5 550.5,217.5 534.5,211.5 513.5,224.5" fill="#10ffef"/><polygon points="508.5,240.5 529.5,229.5 513.5,224.5 492.5,234.5" fill="#00ffff"/><polygon points="487.5,248.5 508.5,240.5 492.5,234.5 470.5,243.5" fill="#00ffff"/><polygon points="466.5,256.5 487.5,248.5 470.5,243.5 449.5,251.5" fill="#00ffff"/><polygon points="444.5,263.5 466.5,256.5 449.5,251.5 428.5,258.5" fill="#10ffef"/><polygon points="423.5,270.5 444.5,263.5 428.5,258.5 407.5,265.5" fill="#10ffef"/><polygon points="402.5,278.5 423.5,270.5 407.5,265.5 386.5,273.5" fill="#10ffef"/><polygon points="381.5,287.5 402.5,278.5 386.5,273.5 365.5,281.5" fill="#10ffef"/><polygon points="360.5,297.5 381.5,287.5 365.5,281.5 344.5,292.5" fill="#00ffff"/><polygon points="339.5,310.5 360.5,297.5 344.5,292.5 323.5,304.5" fill="#00efff"/><polygon points="318.5,325.5 339.5,310.5 323.5,304.5 302.5,320.5" fill="#00dfff"/><polygon points="297.5,344.5 318.5,325.5 302.5,320.5 281.5,338.5" fill="#00bfff"/><polygon points="276.5,366.5 297.5,344.5 281.5,338.5 260.5,361.5" fill="#009fff"/><polygon points="255.5,393.5 276.5,366.5 260.5,361.5 239.5,388.5" fill="#0060ff"/><polygon points="671.5,103.5 693.5,66.5 676.5,63.5 655.5,101.5" fill="#ffef00"/><polygon points="650.5,135.5 671.5,103.5 655.5,101.5 634.5,133.5" fill="#bfff40"/><polygon points="629.5,162.5 650.5,135.5 634.5,133.5 613.5,160.5" fill="#8fff70"/><polygon points="608.5,185.5 629.5,162.5 613.5,160.5 592.5,182.5" fill="#60ff9f"/><polygon points="587.5,204.5 608.5,185.5 592.5,182.5 571.5,201.5" fill="#40ffbf"/><polygon points="566.5,219.5 587.5,204.5 571.5,201.5 550.5,217.5" fill="#30ffcf"/><polygon points="545.5,232.5 566.5,219.5 550.5,217.5 529.5,229.5" fill="#20ffdf"/><polygon points="524.5,242.5 545.5,232.5 529.5,229.5 508.5,240.5" fill="#20ffdf"/><polygon points="503.5,251.5 524.5,242.5 508.5,240.5 487.5,248.5" fill="#20ffdf"/><polygon points="482.5,258.5 503.5,251.5 487.5,248.5 466.5,256.5" fill="#20ffdf"/><polygon points="461.5,266.5 482.5,258.5 466.5,256.5 444.5,263.5" fill="#20ffdf"/><polygon points="440.5,273.5 461.5,266.5 444.5,263.5 423.5,270.5" fill="#20ffdf"/><polygon points="418.5,280.5 440.5,273.5 423.5,270.5 402.5,278.5" fill="#20ffdf"/><polygon points="397.5,289.5 418.5,280.5 402.5,278.5 381.5,287.5" fill="#20ffdf"/><polygon points="376.5,299.5 397.5,289.5 381.5,287.5 360.5,297.5" fill="#20ffdf"/><polygon points="355.5,312.5 376.5,299.5 360.5,297.5 339.5,310.5" fill="#10ffef"/><polygon points="334.5,327.5 355.5,312.5 339.5,310.5 318.5,325.5" fill="#00ffff"/><polygon points="313.5,346.5 334.5,327.5 318.5,325.5 297.5,344.5" fill="#00dfff"/><polygon points="292.5,369.5 313.5,346.5 297.5,344.5 276.5,366.5" fill="#00afff"/><polygon points="271.5,396.5 292.5,369.5 276.5,366.5 255.5,393.5" fill="#0080ff"/><polygon points="688.5,103.5 709.5,65.5 693.5,66.5 671.5,103.5" fill="#ffcf00"/><polygon points="667.5,135.5 688.5,103.5 671.5,103.5 650.5,135.5" fill="#dfff20"/><polygon points="645.5,162.5 667.5,135.5 650.5,135.5 629.5,162.5" fill="#afff50"/><polygon points="624.5,184.5 645.5,162.5 629.5,162.5 608.5,185.5" fill="#80ff80"/><polygon points="603.5,203.5 624.5,184.5 608.5,185.5 587.5,204.5" fill="#60ff9f"/><polygon points="582.5,218.5 603.5,203.5 587.5,204.5 566.5,219.5" fill="#50ffaf"/><polygon points="561.5,231.5 582.5,218.5 566.5,219.5 545.5,232.5" fill="#40ffbf"/><polygon points="540.5,241.5 561.5,231.5 545.5,232.5 524.5,242.5" fill="#40ffbf"/><polygon points="519.5,250.5 540.5,241.5 524.5,242.5 503.5,251.5" fill="#40ffbf"/><polygon points="498.5,258.5 519.5,250.5 503.5,251.5 482.5,258.5" fill="#40ffbf"/><polygon points="477.5,265.5 498.5,258.5 482.5,258.5 461.5,266.5" fill="#40ffbf"/><polygon points="456.5,272.5 477.5,265.5 461.5,266.5 440.5,273.5" fill="#40ffbf"/><polygon points="435.5,279.5 456.5,272.5 440.5,273.5 418.5,280.5" fill="#40ffbf"/><polygon points="414.5,288.5 435.5,279.5 418.5,280.5 397.5,289.5" fill="#40ffbf"/><polygon points="393.5,299.5 414.5,288.5 397.5,289.5 376.5,299.5" fill="#40ffbf"/><polygon points="371.5,311.5 393.5,299.5 376.5,299.5 355.5,312.5" fill="#30ffcf"/><polygon points="350.5,327.5 371.5,311.5 355.5,312.5 334.5,327.5" fill="#20ffdf"/><polygon points="329.5,345.5 350.5,327.5 334.5,327.5 313.5,346.5" fill="#00ffff"/><polygon points="308.5,368.5 329.5,345.5 313.5,346.5 292.5,369.5" fill="#00cfff"/><polygon points="287.5,395.5 308.5,368.5 292.5,369.5 271.5,396.5" fill="#009fff"/><polygon points="704.5,98.5 725.5,60.5 709.5,65.5 688.5,103.5" fill="#ff9f00"/><polygon points="683.5,130.5 704.5,98.5 688.5,103.5 667.5,135.5" fill="#ffef00"/><polygon points="662.5,157.5 683.5,130.5 667.5,135.5 645.5,162.5" fill="#dfff20"/><polygon points="641.5,179.5 662.5,157.5 645.5,162.5 624.5,184.5" fill="#afff50"/><polygon points="620.5,198.5 641.5,179.5 624.5,184.5 603.5,203.5" fill="#8fff70"/><polygon points="598.5,214.5 620.5,198.5 603.5,203.5 582.5,218.5" fill="#80ff80"/><polygon points="577.5,226.5 598.5,214.5 582.5,218.5 561.5,231.5" fill="#70ff8f"/><polygon points="556.5,237.5 577.5,226.5 561.5,231.5 540.5,241.5" fill="#70ff8f"/><polygon points="535.5,245.5 556.5,237.5 540.5,241.5 519.5,250.5" fill="#70ff8f"/><polygon points="514.5,253.5 535.5,245.5 519.5,250.5 498.5,258.5" fill="#70ff8f"/><polygon points="493.5,260.5 514.5,253.5 498.5,258.5 477.5,265.5" fill="#70ff8f"/><polygon points="472.5,267.5 493.5,260.5 477.5,265.5 456.5,272.5" fill="#70ff8f"/><polygon points="451.5,275.5 472.5,267.5 456.5,272.5 435.5,279.5" fill="#70ff8f"/><polygon points="430.5,284.5 451.5,275.5 435.5,279.5 414.5,288.5" fill="#70ff8f"/><polygon points="409.5,294.5 430.5,284.5 414.5,288.5 393.5,299.5" fill="#70ff8f"/><polygon points="388.5,307.5 409.5,294.5 393.5,299.5 371.5,311.5" fill="#60ff9f"/><polygon points="367.5,322.5 388.5,307.5 371.5,311.5 350.5,327.5" fill="#40ffbf"/><polygon points="345.5,341.5 367.5,322.5 350.5,327.5 329.5,345.5" fill="#30ffcf"/><polygon points="324.5,363.5 345.5,341.5 329.5,345.5 308.5,368.5" fill="#00ffff"/><polygon points="303.5,390.5 324.5,363.5 308.5,368.5 287.5,395.5" fill="#00bfff"/><polygon points="720.5,89.5 741.5,51.5 725.5,60.5 704.5,98.5" fill="#ff7000"/><polygon points="699.5,121.5 720.5,89.5 704.5,98.5 683.5,130.5" fill="#ffaf00"/><polygon points="678.5,148.5 699.5,121.5 683.5,130.5 662.5,157.5" fill="#ffef00"/><polygon points="657.5,170.5 678.5,148.5 662.5,157.5 641.5,179.5" fill="#efff10"/><polygon points="636.5,189.5 657.5,170.5 641.5,179.5 620.5,198.5" fill="#cfff30"/><polygon points="615.5,204.5 636.5,189.5 620.5,198.5 598.5,214.5" fill="#bfff40"/><polygon points="594.5,217.5 615.5,204.5 598.5,214.5 577.5,226.5" fill="#afff50"/><polygon points="572.5,227.5 594.5,217.5 577.5,226.5 556.5,237.5" fill="#9fff60"/><polygon points="551.5,236.5 572.5,227.5 556.5,237.5 535.5,245.5" fill="#9fff60"/><polygon points="530.5,244.5 551.5,236.5 535.5,245.5 514.5,253.5" fill="#9fff60"/><polygon points="509.5,251.5 530.5,244.5 514.5,253.5 493.5,260.5" fill="#9fff60"/><polygon points="488.5,258.5 509.5,251.5 493.5,260.5 472.5,267.5" fill="#afff50"/><polygon points="467.5,266.5 488.5,258.5 472.5,267.5 451.5,275.5" fill="#afff50"/><polygon points="446.5,274.5 467.5,266.5 451.5,275.5 430.5,284.5" fill="#afff50"/><polygon points="425.5,285.5 446.5,274.5 430.5,284.5 409.5,294.5" fill="#9fff60"/><polygon points="404.5,297.5 425.5,285.5 409.5,294.5 388.5,307.5" fill="#8fff70"/><polygon points="383.5,313.5 404.5,297.5 388.5,307.5 367.5,322.5" fill="#80ff80"/><polygon points="362.5,332.5 383.5,313.5 367.5,322.5 345.5,341.5" fill="#60ff9f"/><polygon points="341.5,354.5 362.5,332.5 345.5,341.5 324.5,363.5" fill="#30ffcf"/><polygon points="320.5,381.5 341.5,354.5 324.5,363.5 303.5,390.5" fill="#00ffff"/><polygon points="736.5,75.5 757.5,37.5 741.5,51.5 720.5,89.5" fill="#ff2000"/><polygon points="715.5,107.5 736.5,75.5 720.5,89.5 699.5,121.5" fill="#ff7000"/><polygon points="694.5,134.5 715.5,107.5 699.5,121.5 678.5,148.5" fill="#ff9f00"/><polygon points="673.5,156.5 694.5,134.5 678.5,148.5 657.5,170.5" fill="#ffcf00"/><polygon points="652.5,175.5 673.5,156.5 657.5,170.5 636.5,189.5" fill="#ffef00"/><polygon points="631.5,190.5 652.5,175.5 636.5,189.5 615.5,204.5" fill="#ffff00"/><polygon points="610.5,203.5 631.5,190.5 615.5,204.5 594.5,217.5" fill="#efff10"/><polygon points="589.5,213.5 610.5,203.5 594.5,217.5 572.5,227.5" fill="#efff10"/><polygon points="568.5,222.5 589.5,213.5 572.5,227.5 551.5,236.5" fill="#efff10"/><polygon points="546.5,230.5 568.5,222.5 551.5,236.5 530.5,244.5" fill="#efff10"/><polygon points="525.5,237.5 546.5,230.5 530.5,244.5 509.5,251.5" fill="#efff10"/><polygon points="504.5,244.5 525.5,237.5 509.5,251.5 488.5,258.5" fill="#efff10"/><polygon points="483.5,252.5 504.5,244.5 488.5,258.5 467.5,266.5" fill="#efff10"/><polygon points="462.5,260.5 483.5,252.5 467.5,266.5 446.5,274.5" fill="#efff10"/><polygon points="441.5,271.5 462.5,260.5 446.5,274.5 425.5,285.5" fill="#efff10"/><polygon points="420.5,283.5 441.5,271.5 425.5,285.5 404.5,297.5" fill="#dfff20"/><polygon points="399.5,299.5 420.5,283.5 404.5,297.5 383.5,313.5" fill="#cfff30"/><polygon points="378.5,317.5 399.5,299.5 383.5,313.5 362.5,332.5" fill="#afff50"/><polygon points="357.5,340.5 378.5,317.5 362.5,332.5 341.5,354.5" fill="#80ff80"/><polygon points="336.5,367.5 357.5,340.5 341.5,354.5 320.5,381.5" fill="#50ffaf"/><polygon points="752.5,55.5 773.5,18.5 757.5,37.5 736.5,75.5" fill="#cf0000"/><polygon points="731.5,87.5 752.5,55.5 736.5,75.5 715.5,107.5" fill="#ff1000"/><polygon points="710.5,114.5 731.5,87.5 715.5,107.5 694.5,134.5" fill="#ff5000"/><polygon points="689.5,137.5 710.5,114.5 694.5,134.5 673.5,156.5" fill="#ff7000"/><polygon points="668.5,155.5 689.5,137.5 673.5,156.5 652.5,175.5" fill="#ff8f00"/><polygon points="647.5,171.5 668.5,155.5 652.5,175.5 631.5,190.5" fill="#ff9f00"/><polygon points="626.5,183.5 647.5,171.5 631.5,190.5 610.5,203.5" fill="#ffaf00"/><polygon points="605.5,194.5 626.5,183.5 610.5,203.5 589.5,213.5" fill="#ffbf00"/><polygon points="584.5,202.5 605.5,194.5 589.5,213.5 568.5,222.5" fill="#ffbf00"/><polygon points="563.5,210.5 584.5,202.5 568.5,222.5 546.5,230.5" fill="#ffbf00"/><polygon points="542.5,217.5 563.5,210.5 546.5,230.5 525.5,237.5" fill="#ffbf00"/><polygon points="521.5,224.5 542.5,217.5 525.5,237.5 504.5,244.5" fill="#ffaf00"/><polygon points="499.5,232.5 521.5,224.5 504.5,244.5 483.5,252.5" fill="#ffaf00"/><polygon points="478.5,241.5 499.5,232.5 483.5,252.5 462.5,260.5" fill="#ffaf00"/><polygon points="457.5,251.5 478.5,241.5 462.5,260.5 441.5,271.5" fill="#ffbf00"/><polygon points="436.5,264.5 457.5,251.5 441.5,271.5 420.5,283.5" fill="#ffcf00"/><polygon points="415.5,279.5 436.5,264.5 420.5,283.5 399.5,299.5" fill="#ffdf00"/><polygon points="394.5,298.5 415.5,279.5 399.5,299.5 378.5,317.5" fill="#ffff00"/><polygon points="373.5,320.5 394.5,298.5 378.5,317.5 357.5,340.5" fill="#cfff30"/><polygon points="352.5,347.5 373.5,320.5 357.5,340.5 336.5,367.5" fill="#9fff60"/></g>
<path d="M0 .5m444 0h1m10 0h1m13 0h1m14 0h1m17 0h1m19 0h1m19 0h1m20 0h1m-120 1h1m10 0h1m12 0h1m15 0h1m16 0h1m19 0h1m19 0h1m20 0h1m1 0h2m-123 1h1m10 0h1m13 0h1m14 0h1m16 0h1m19 0h1m20 0h1m20 0h1m3 0h2m-125 1h1m10 0h1m12 0h1m15 0h1m16 0h1m19 0h1m19 0h1m20 0h1m6 0h1m-127 1h1m10 0h1m13 0h1m14 0h1m16 0h1m19 0h1m20 0h1m20 0h1m7 0h2m-129 1h1m9 0h1m13 0h1m14 0h1m17 0h1m19 0h1m19 0h1m20 0h1m10 0h1m-131 1h1m10 0h1m12 0h1m15 0h1m16 0h1m19 0h1m19 0h1m21 0h1m11 0h2m-133 1h1m9 0h1m13 0h1m14 0h1m17 0h1m19 0h1m19 0h1m20 0h1m14 0h2m-136 1h1m10 0h1m12 0h1m15 0h1m16 0h1m19 0h1m19 0h1m20 0h1m17 0h1m-138 1h1m10 0h1m13 0h1m14 0h1m16 0h1m20 0h1m19 0h1m20 0h1m18 0h2m-140 1h1m10 0h1m12 0h1m15 0h1m16 0h1m19 0h1m19 0h1m20 0h1m21 0h1m-142 1h1m10 0h1m13 0h1m14 0h1m16 0h1m20 0h1m19 0h1m20 0h1m20 0h1m1 0h2m-144 1h1m9 0h1m13 0h1m15 0h1m16 0h1m19 0h1m19 0h1m20 0h1m21 0h1m3 0h1m-146 1h1m10 0h1m13 0h1m6 0h13m12 0h1m19 0h1m20 0h1m20 0h1m20 0h1m5 0h2m-148 1h1m9 0h1m11 0h11m6 0h1m5 0h8m4 0h1m19 0h1m19 0h1m20 0h1m21 0h1m7 0h1m-150 1h1m10 0h1m7 0h6m15 0h1m13 0h5m18 0h1m19 0h1m20 0h1m21 0h1m9 0h2m-152 1h1m9 0h1m4 0h5m4 0h1m14 0h1m16 0h1m2 0h3m15 0h1m19 0h1m20 0h1m21 0h1m11 0h1m-154 1h1m10 0h6m7 0h1m14 0h1m17 0h1m5 0h3m11 0h1m19 0h1m20 0h1m21 0h1m13 0h1m-155 1h1m9 0h3m10 0h1m15 0h1m16 0h1m9 0h2m9 0h1m19 0h1m20 0h1m20 0h1m15 0h2m181 0h1m-340 1h1m8 0h2m13 0h1m14 0h1m16 0h1m12 0h3m5 0h1m19 0h1m20 0h1m21 0h1m17 0h1m179 0h1m-340 1h1m7 0h2m1 0h1m12 0h1m14 0h1m17 0h1m15 0h3m2 0h1m19 0h1m20 0h1m20 0h1m19 0h2m176 0h2m-340 1h1m6 0h2m1 0h1m12 0h1m15 0h1m16 0h1m19 0h3m18 0h1m20 0h1m21 0h1m21 0h1m174 0h2m-340 1h1m5 0h2m2 0h1m13 0h1m14 0h1m16 0h1m20 0h1m2 0h2m15 0h1m21 0h1m20 0h1m21 0h1m1 0h2m172 0h2m-340 1h1m4 0h1m4 0h1m12 0h1m14 0h1m17 0h1m20 0h1m4 0h2m13 0h1m20 0h1m21 0h1m21 0h1m3 0h2m169 0h2m-340 1h1m3 0h2m4 0h1m12 0h1m15 0h1m16 0h1m20 0h1m7 0h3m9 0h1m20 0h1m21 0h1m21 0h1m6 0h1m167 0h1m1 0h1m-340 1h1m1 0h2m5 0h1m13 0h1m14 0h1m16 0h1m20 0h1m11 0h2m7 0h1m20 0h1m20 0h1m22 0h1m7 0h2m164 0h1m1 0h1m-340 1h1m1 0h2m6 0h1m12 0h1m14 0h1m17 0h1m20 0h1m13 0h2m4 0h1m20 0h1m21 0h1m21 0h1m10 0h2m161 0h1m1 0h1m-339 1h2m7 0h1m12 0h1m15 0h1m16 0h1m20 0h1m16 0h2m2 0h1m20 0h1m20 0h1m22 0h1m12 0h2m158 0h1m2 0h1m-340 1h1m8 0h1m13 0h1m14 0h1m16 0h1m20 0h1m19 0h2m20 0h1m21 0h1m21 0h1m15 0h1m157 0h1m1 0h1m-340 1h1m9 0h1m12 0h1m14 0h1m17 0h1m19 0h1m20 0h1m1 0h2m18 0h1m20 0h1m21 0h1m17 0h2m154 0h1m2 0h1m-340 1h1m8 0h1m12 0h1m15 0h1m16 0h1m20 0h1m20 0h1m3 0h2m15 0h1m21 0h1m21 0h1m19 0h2m151 0h1m2 0h1m-340 1h1m8 0h1m13 0h1m14 0h1m16 0h1m20 0h1m20 0h1m6 0h2m12 0h1m21 0h1m21 0h1m22 0h1m149 0h1m3 0h1m-341 1h1m9 0h1m12 0h1m15 0h1m16 0h1m19 0h1m20 0h1m9 0h2m10 0h1m21 0h1m21 0h1m21 0h1m1 0h2m146 0h1m3 0h1m-340 1h1m8 0h1m13 0h1m14 0h1m16 0h1m20 0h1m20 0h1m11 0h1m8 0h1m21 0h1m21 0h1m22 0h1m3 0h1m144 0h1m3 0h1m-340 1h1m8 0h1m13 0h1m14 0h1m17 0h1m19 0h1m20 0h1m13 0h2m6 0h1m20 0h1m22 0h1m21 0h1m5 0h2m142 0h1m3 0h1m-341 1h1m9 0h1m12 0h1m15 0h1m16 0h1m19 0h1m20 0h1m16 0h2m3 0h1m21 0h1m21 0h1m22 0h1m7 0h1m140 0h1m3 0h1m-340 1h1m8 0h1m13 0h1m14 0h1m16 0h1m20 0h1m20 0h1m18 0h2m1 0h1m20 0h1m21 0h1m22 0h1m9 0h2m137 0h1m4 0h1m-341 1h1m9 0h1m12 0h1m14 0h1m17 0h1m19 0h1m20 0h1m21 0h1m21 0h1m21 0h1m22 0h1m11 0h1m135 0h1m4 0h1m-341 1h1m9 0h1m12 0h1m15 0h1m16 0h1m19 0h1m20 0h1m21 0h1m1 0h2m18 0h1m21 0h1m22 0h1m13 0h1m133 0h1m5 0h1m-341 1h1m8 0h1m13 0h1m14 0h1m16 0h1m20 0h1m20 0h1m21 0h1m3 0h2m16 0h1m21 0h1m22 0h1m14 0h2m130 0h2m4 0h1m-341 1h1m9 0h1m12 0h1m14 0h1m17 0h1m19 0h1m20 0h1m21 0h1m6 0h1m14 0h1m21 0h1m22 0h1m17 0h1m128 0h2m5 0h1m-342 1h1m9 0h1m12 0h1m15 0h1m16 0h1m19 0h1m20 0h1m21 0h1m8 0h2m11 0h1m22 0h1m21 0h1m19 0h2m124 0h2m1 0h1m4 0h1m-341 1h1m8 0h1m13 0h1m14 0h1m16 0h1m20 0h1m20 0h1m21 0h1m10 0h1m10 0h1m21 0h1m22 0h1m21 0h1m122 0h1m2 0h1m4 0h1m-341 1h1m9 0h1m12 0h1m14 0h1m17 0h1m19 0h1m20 0h1m21 0h1m12 0h2m7 0h1m22 0h1m21 0h1m21 0h1m1 0h2m119 0h1m3 0h1m4 0h1m-342 1h1m9 0h1m12 0h1m15 0h1m16 0h1m19 0h1m20 0h1m21 0h1m15 0h2m5 0h1m21 0h1m22 0h1m21 0h1m3 0h2m116 0h1m3 0h1m4 0h1m-342 1h1m9 0h1m13 0h1m6 0h13m12 0h1m19 0h1m21 0h1m21 0h1m17 0h1m3 0h1m21 0h1m22 0h1m21 0h1m6 0h2m113 0h1m4 0h1m4 0h1m-342 1h1m9 0h1m10 0h11m6 0h1m5 0h8m4 0h1m19 0h1m20 0h1m21 0h1m19 0h2m1 0h1m21 0h1m22 0h1m21 0h1m8 0h2m110 0h1m4 0h1m4 0h1m-342 1h1m9 0h1m7 0h6m14 0h1m14 0h5m18 0h1m21 0h1m20 0h1m22 0h1m21 0h1m22 0h1m21 0h1m11 0h1m108 0h1m4 0h1m5 0h1m-343 1h1m9 0h1m4 0h5m3 0h1m15 0h1m16 0h1m2 0h3m14 0h1m21 0h1m21 0h1m21 0h1m1 0h2m19 0h1m22 0h1m21 0h1m12 0h2m104 0h2m5 0h1m4 0h1m-342 1h1m9 0h6m7 0h1m14 0h1m16 0h1m6 0h2m12 0h1m20 0h1m21 0h1m22 0h1m3 0h1m17 0h1m22 0h1m21 0h1m15 0h2m101 0h1m6 0h1m4 0h1m-342 1h1m9 0h3m10 0h1m14 0h1m17 0h1m8 0h3m8 0h1m21 0h1m20 0h1m22 0h1m5 0h2m15 0h1m21 0h1m21 0h1m18 0h2m98 0h1m7 0h1m4 0h1m-343 1h1m8 0h2m12 0h1m14 0h1m17 0h1m12 0h3m4 0h1m21 0h1m21 0h1m21 0h1m8 0h1m13 0h1m22 0h1m21 0h1m20 0h2m95 0h1m7 0h1m4 0h1m-342 1h1m6 0h3m12 0h1m15 0h1m16 0h1m16 0h2m2 0h1m20 0h1m21 0h1m22 0h1m9 0h2m10 0h1m22 0h1m21 0h1m20 0h1m2 0h2m91 0h2m8 0h1m4 0h1m-343 1h1m5 0h2m2 0h1m12 0h1m14 0h1m16 0h1m19 0h3m20 0h1m20 0h1m22 0h1m12 0h1m9 0h1m22 0h1m21 0h1m20 0h1m4 0h2m87 0h2m1 0h1m7 0h1m4 0h1m-343 1h1m4 0h2m3 0h1m12 0h1m14 0h1m17 0h1m19 0h1m2 0h2m17 0h1m21 0h1m21 0h1m14 0h1m7 0h1m22 0h1m21 0h1m20 0h1m7 0h3m82 0h2m2 0h1m8 0h1m4 0h1m-343 1h1m3 0h2m3 0h1m12 0h1m14 0h1m17 0h1m19 0h1m5 0h3m13 0h1m21 0h1m22 0h1m15 0h2m5 0h1m22 0h1m21 0h1m20 0h1m10 0h2m79 0h1m4 0h1m7 0h1m4 0h1m-343 1h1m2 0h2m4 0h1m12 0h1m14 0h1m17 0h1m20 0h1m8 0h2m11 0h1m21 0h1m21 0h1m18 0h1m3 0h1m22 0h1m21 0h1m20 0h1m13 0h2m75 0h2m4 0h1m7 0h1m4 0h1m-343 1h1m1 0h2m6 0h1m11 0h1m15 0h1m16 0h1m20 0h1m11 0h2m8 0h1m21 0h1m21 0h1m20 0h2m1 0h1m22 0h1m20 0h1m21 0h1m15 0h2m71 0h2m6 0h1m7 0h1m3 0h2m-343 1h2m7 0h1m12 0h1m14 0h1m16 0h1m20 0h1m14 0h3m4 0h1m21 0h1m22 0h1m22 0h1m22 0h1m21 0h1m20 0h1m18 0h3m66 0h2m7 0h1m7 0h1m4 0h1m-343 1h1m8 0h1m12 0h1m14 0h1m17 0h1m19 0h1m18 0h2m2 0h1m21 0h1m21 0h1m22 0h1m1 0h2m20 0h1m20 0h1m20 0h1m19 0h1m2 0h3m61 0h2m9 0h1m7 0h1m3 0h1m-343 1h1m8 0h1m12 0h1m14 0h1m17 0h1m20 0h1m20 0h2m21 0h1m21 0h1m23 0h1m3 0h1m18 0h1m21 0h1m20 0h1m19 0h1m5 0h4m55 0h2m10 0h1m7 0h1m3 0h2m-344 1h1m8 0h1m12 0h1m15 0h1m16 0h1m20 0h1m21 0h1m1 0h2m18 0h1m22 0h1m22 0h1m5 0h2m15 0h1m21 0h1m20 0h1m19 0h1m10 0h3m49 0h4m10 0h1m8 0h1m2 0h2m-343 1h1m8 0h1m12 0h1m14 0h1m16 0h1m20 0h1m21 0h1m4 0h2m16 0h1m21 0h1m22 0h1m8 0h1m14 0h1m21 0h1m20 0h1m19 0h1m13 0h3m43 0h3m3 0h1m10 0h1m7 0h1m2 0h2m-343 1h1m8 0h1m12 0h1m14 0h1m17 0h1m19 0h1m22 0h1m6 0h2m13 0h1m21 0h1m23 0h1m9 0h2m11 0h1m21 0h1m20 0h1m19 0h1m17 0h4m35 0h4m5 0h1m10 0h1m8 0h1m2 0h2m-344 1h1m8 0h1m12 0h1m14 0h1m17 0h1m19 0h1m22 0h1m9 0h2m10 0h1m22 0h1m22 0h1m12 0h2m9 0h1m21 0h1m20 0h1m19 0h1m17 0h1m3 0h6m26 0h3m9 0h1m10 0h1m7 0h1m2 0h2m-344 1h1m8 0h1m12 0h1m14 0h1m17 0h1m20 0h1m21 0h1m12 0h1m9 0h1m21 0h1m22 0h1m15 0h1m7 0h1m21 0h1m20 0h1m19 0h1m18 0h1m9 0h6m11 0h9m11 0h1m10 0h1m8 0h1m1 0h2m-344 1h1m9 0h1m11 0h1m15 0h1m16 0h1m20 0h1m21 0h1m14 0h2m6 0h1m22 0h1m22 0h1m16 0h2m5 0h1m20 0h1m20 0h1m20 0h1m17 0h1m16 0h11m6 0h1m13 0h1m10 0h1m7 0h1m1 0h1m1 0h1m-345 1h1m9 0h1m12 0h1m14 0h1m16 0h1m20 0h1m22 0h1m16 0h2m3 0h1m22 0h1m22 0h1m19 0h1m3 0h1m21 0h1m20 0h1m19 0h1m18 0h1m17 0h1m15 0h1m12 0h1m10 0h1m7 0h1m1 0h1m1 0h1m-344 1h1m8 0h1m12 0h1m14 0h1m17 0h1m19 0h1m22 0h1m19 0h2m1 0h1m21 0h1m22 0h1m21 0h2m1 0h1m20 0h1m20 0h1m19 0h1m18 0h1m18 0h1m14 0h1m13 0h1m10 0h1m7 0h1m1 0h2m-344 1h1m8 0h1m12 0h1m14 0h1m17 0h1m20 0h1m21 0h1m22 0h1m22 0h1m22 0h1m23 0h1m21 0h1m20 0h1m19 0h1m18 0h1m17 0h1m15 0h1m12 0h1m10 0h1m7 0h1m1 0h1m1 0h1m-345 1h1m8 0h1m12 0h1m15 0h1m16 0h1m20 0h1m21 0h1m22 0h1m1 0h2m19 0h1m22 0h1m23 0h1m1 0h2m18 0h1m20 0h1m19 0h1m18 0h1m18 0h1m14 0h1m12 0h1m10 0h1m8 0h2m1 0h1m-345 1h1m9 0h1m12 0h1m14 0h1m16 0h1m20 0h1m21 0h1m22 0h1m4 0h2m16 0h1m22 0h1m24 0h1m3 0h2m16 0h1m20 0h1m19 0h1m18 0h1m17 0h1m15 0h1m12 0h1m10 0h1m7 0h2m2 0h1m-346 1h1m9 0h1m12 0h1m6 0h13m13 0h1m19 0h1m22 0h1m22 0h1m6 0h1m15 0h1m22 0h1m23 0h1m6 0h1m14 0h1m20 0h1m19 0h1m18 0h1m17 0h1m15 0h1m12 0h1m10 0h1m8 0h1m2 0h1m-345 1h1m8 0h1m10 0h11m6 0h1m5 0h8m4 0h1m19 0h1m22 0h1m22 0h1m8 0h2m12 0h1m22 0h1m23 0h1m8 0h2m11 0h1m21 0h1m19 0h1m17 0h1m18 0h1m15 0h1m12 0h1m10 0h1m7 0h2m1 0h1m-345 1h1m8 0h1m7 0h6m14 0h1m14 0h5m19 0h1m21 0h1m22 0h1m11 0h1m10 0h1m22 0h1m24 0h1m10 0h1m10 0h1m20 0h1m19 0h1m18 0h1m17 0h1m15 0h1m12 0h1m10 0h1m8 0h1m2 0h1m-346 1h1m9 0h1m3 0h5m3 0h1m14 0h1m17 0h1m2 0h3m15 0h1m21 0h1m22 0h1m13 0h2m8 0h1m22 0h1m23 0h1m12 0h2m7 0h1m20 0h1m20 0h1m17 0h1m18 0h1m14 0h1m13 0h1m10 0h1m7 0h1m2 0h1m-346 1h1m9 0h6m6 0h1m14 0h1m17 0h1m6 0h2m12 0h1m22 0h1m22 0h1m15 0h2m5 0h1m22 0h1m23 0h1m15 0h2m5 0h1m20 0h1m19 0h1m18 0h1m17 0h1m15 0h1m12 0h1m10 0h1m7 0h1m2 0h1m-346 1h1m9 0h3m9 0h1m14 0h1m17 0h1m9 0h3m8 0h1m22 0h1m22 0h1m18 0h1m3 0h1m23 0h1m22 0h1m18 0h1m3 0h1m20 0h1m19 0h1m18 0h1m17 0h1m15 0h1m13 0h1m10 0h1m6 0h2m2 0h1m-346 1h1m7 0h2m11 0h1m14 0h1m17 0h1m13 0h3m5 0h1m21 0h1m22 0h1m20 0h2m1 0h1m22 0h1m23 0h1m19 0h2m1 0h1m20 0h1m19 0h1m18 0h1m17 0h1m15 0h1m12 0h1m10 0h1m5 0h3m2 0h1m-346 1h1m6 0h3m11 0h1m14 0h1m17 0h1m17 0h2m2 0h1m21 0h1m22 0h1m23 0h1m22 0h1m23 0h1m22 0h1m20 0h1m19 0h1m18 0h1m17 0h1m15 0h1m12 0h1m11 0h1m4 0h3m2 0h1m-346 1h1m5 0h2m1 0h1m11 0h1m14 0h1m18 0h1m19 0h3m20 0h1m22 0h1m23 0h1m1 0h2m20 0h1m22 0h1m22 0h1m1 0h2m18 0h1m19 0h1m18 0h1m17 0h1m15 0h1m12 0h1m10 0h1m4 0h1m2 0h1m2 0h1m-347 1h1m4 0h2m2 0h1m11 0h1m14 0h1m18 0h1m20 0h1m2 0h2m18 0h1m22 0h1m22 0h1m4 0h1m18 0h1m23 0h1m22 0h1m3 0h2m15 0h1m19 0h1m18 0h1m17 0h1m15 0h1m12 0h1m10 0h1m4 0h1m2 0h1m2 0h1m-347 1h1m3 0h2m3 0h1m11 0h1m14 0h1m18 0h1m20 0h1m5 0h3m14 0h1m22 0h1m23 0h1m5 0h2m15 0h1m23 0h1m22 0h1m6 0h2m12 0h1m20 0h1m17 0h1m17 0h1m16 0h1m12 0h1m10 0h1m3 0h1m2 0h1m2 0h1m-347 1h1m2 0h2m5 0h1m10 0h1m14 0h1m18 0h1m20 0h1m9 0h2m11 0h1m22 0h1m23 0h1m8 0h1m14 0h1m22 0h1m22 0h1m9 0h2m10 0h1m19 0h1m18 0h1m17 0h1m15 0h1m12 0h1m10 0h1m3 0h1m3 0h1m2 0h1m-347 1h3m6 0h1m10 0h1m15 0h1m17 0h1m20 0h1m12 0h2m8 0h1m22 0h1m23 0h1m10 0h2m11 0h1m23 0h1m22 0h1m11 0h1m8 0h1m20 0h1m17 0h1m17 0h1m15 0h1m13 0h1m10 0h1m2 0h1m3 0h1m2 0h1m-347 1h2m7 0h1m11 0h1m14 0h1m17 0h1m20 0h1m15 0h3m5 0h1m22 0h1m22 0h1m13 0h1m9 0h1m23 0h1m22 0h1m13 0h2m6 0h1m19 0h1m18 0h1m17 0h1m15 0h1m12 0h1m10 0h1m1 0h2m3 0h1m2 0h1m-347 1h1m8 0h1m11 0h1m14 0h1m17 0h1m20 0h1m19 0h2m2 0h1m22 0h1m23 0h1m14 0h1m8 0h1m22 0h1m22 0h1m16 0h2m3 0h1m20 0h1m17 0h1m17 0h1m15 0h1m13 0h1m10 0h3m4 0h1m2 0h1m-348 1h1m8 0h1m11 0h1m14 0h1m17 0h1m20 0h1m22 0h2m22 0h1m23 0h1m16 0h2m5 0h1m23 0h1m22 0h1m18 0h2m1 0h1m19 0h1m18 0h1m17 0h1m15 0h1m12 0h1m10 0h2m5 0h1m2 0h1m-348 1h1m8 0h1m11 0h1m14 0h1m17 0h1m20 0h1m23 0h1m1 0h2m19 0h1m23 0h1m19 0h1m3 0h1m23 0h1m22 0h1m21 0h2m18 0h1m18 0h1m17 0h1m15 0h1m13 0h1m10 0h1m5 0h1m2 0h1m-348 1h1m8 0h1m11 0h1m14 0h1m17 0h1m20 0h1m23 0h1m4 0h2m16 0h1m23 0h1m21 0h2m1 0h1m22 0h1m22 0h1m21 0h1m2 0h2m16 0h1m18 0h1m16 0h1m16 0h1m12 0h1m10 0h1m6 0h1m1 0h1m-348 1h1m8 0h1m11 0h1m14 0h1m17 0h1m20 0h1m23 0h1m7 0h2m14 0h1m22 0h1m24 0h1m23 0h1m22 0h1m21 0h1m4 0h2m13 0h1m18 0h1m17 0h1m15 0h1m12 0h1m9 0h2m6 0h1m2 0h1m-349 1h1m8 0h1m11 0h1m14 0h1m17 0h1m20 0h1m23 0h1m10 0h2m11 0h1m23 0h1m23 0h1m1 0h2m20 0h1m22 0h1m21 0h1m7 0h2m11 0h1m18 0h1m16 0h1m16 0h1m12 0h1m7 0h2m1 0h1m5 0h1m2 0h1m-348 1h1m7 0h1m11 0h1m14 0h1m18 0h1m20 0h1m22 0h1m13 0h1m9 0h1m23 0h1m23 0h1m4 0h1m18 0h1m22 0h1m21 0h1m10 0h2m8 0h1m18 0h1m17 0h1m15 0h1m12 0h1m6 0h2m2 0h1m6 0h1m1 0h1m-348 1h1m7 0h1m11 0h1m14 0h1m18 0h1m20 0h1m23 0h1m14 0h2m6 0h1m23 0h1m24 0h1m5 0h2m15 0h1m23 0h1m21 0h1m12 0h2m6 0h1m17 0h1m17 0h1m16 0h1m12 0h1m4 0h2m3 0h1m6 0h1m1 0h1m-348 1h1m7 0h1m11 0h1m6 0h11m16 0h1m20 0h1m23 0h1m17 0h2m4 0h1m22 0h1m24 0h1m8 0h1m14 0h1m22 0h1m21 0h1m15 0h2m3 0h1m18 0h1m16 0h1m16 0h1m12 0h1m4 0h2m4 0h1m6 0h3m-349 1h1m8 0h1m9 0h10m6 0h1m3 0h6m9 0h1m20 0h1m23 0h1m20 0h2m1 0h1m23 0h1m23 0h1m10 0h2m11 0h1m22 0h1m21 0h1m18 0h2m1 0h1m17 0h1m17 0h1m15 0h1m13 0h1m2 0h2m5 0h1m6 0h1m1 0h1m-349 1h1m8 0h1m7 0h4m14 0h1m10 0h5m3 0h1m20 0h1m23 0h1m23 0h1m23 0h1m23 0h1m13 0h1m9 0h1m23 0h1m21 0h1m20 0h2m17 0h1m16 0h1m16 0h1m12 0h1m1 0h2m6 0h1m6 0h1m1 0h1m-349 1h1m8 0h1m4 0h4m2 0h1m14 0h1m16 0h4m19 0h1m23 0h1m23 0h1m1 0h2m20 0h1m24 0h1m14 0h1m8 0h1m22 0h1m21 0h1m20 0h1m2 0h3m13 0h1m17 0h1m15 0h1m13 0h2m8 0h1m6 0h2m-349 1h1m8 0h1m2 0h4m4 0h1m14 0h1m18 0h1m2 0h3m15 0h1m23 0h1m23 0h1m4 0h2m17 0h1m24 0h1m16 0h2m5 0h1m23 0h1m20 0h1m21 0h1m5 0h4m9 0h1m16 0h1m16 0h1m11 0h2m9 0h1m6 0h2m-349 1h1m8 0h4m7 0h1m13 0h2m18 0h1m6 0h4m10 0h1m23 0h1m23 0h1m7 0h1m15 0h1m24 0h1m19 0h1m3 0h1m23 0h1m21 0h1m20 0h1m10 0h3m5 0h1m16 0h1m16 0h1m9 0h4m9 0h1m6 0h3m-350 1h1m8 0h2m8 0h2m13 0h1m19 0h1m11 0h3m6 0h1m23 0h1m23 0h1m9 0h2m13 0h1m23 0h1m21 0h2m1 0h1m22 0h1m21 0h1m20 0h1m14 0h3m2 0h1m16 0h1m16 0h1m5 0h4m3 0h1m9 0h1m6 0h2m-350 1h1m7 0h2m9 0h1m14 0h1m19 0h1m15 0h3m2 0h1m23 0h1m23 0h1m12 0h1m11 0h1m23 0h1m24 0h1m23 0h1m20 0h1m21 0h1m17 0h6m12 0h1m16 0h1m3 0h4m5 0h1m9 0h1m6 0h2m-350 1h1m6 0h3m9 0h1m14 0h1m18 0h2m19 0h3m22 0h1m24 0h1m13 0h2m8 0h1m24 0h1m23 0h1m1 0h2m20 0h1m21 0h1m20 0h1m18 0h1m5 0h8m4 0h1m16 0h4m8 0h1m9 0h1m6 0h2m-350 1h1m5 0h4m9 0h1m14 0h1m18 0h1m21 0h1m2 0h2m19 0h1m24 0h1m16 0h2m5 0h1m24 0h1m23 0h1m4 0h2m17 0h1m21 0h1m20 0h1m19 0h1m13 0h22m11 0h1m9 0h1m6 0h2m-350 1h1m3 0h2m1 0h1m10 0h1m14 0h1m18 0h1m21 0h1m5 0h2m16 0h1m24 0h1m19 0h1m4 0h1m23 0h1m24 0h1m6 0h1m16 0h1m20 0h1m21 0h1m18 0h1m16 0h1m16 0h1m12 0h1m9 0h1m6 0h2m-350 1h1m2 0h2m2 0h1m10 0h1m14 0h1m18 0h1m21 0h1m8 0h2m14 0h1m23 0h1m21 0h2m1 0h1m23 0h1m24 0h1m8 0h2m13 0h1m21 0h1m20 0h1m18 0h1m17 0h1m16 0h1m11 0h1m9 0h1m6 0h2m-350 1h1m1 0h2m3 0h1m10 0h1m14 0h1m18 0h1m21 0h1m11 0h2m11 0h1m23 0h1m24 0h1m24 0h1m23 0h1m11 0h2m10 0h1m21 0h1m20 0h1m19 0h1m16 0h1m16 0h1m12 0h1m9 0h1m6 0h1m-350 1h3m4 0h1m10 0h1m14 0h1m18 0h1m20 0h2m14 0h2m8 0h1m23 0h1m24 0h1m1 0h2m21 0h1m23 0h1m14 0h2m8 0h1m21 0h1m20 0h1m18 0h1m16 0h1m16 0h1m12 0h1m9 0h1m6 0h1m-350 1h2m5 0h1m10 0h1m13 0h2m18 0h1m20 0h1m18 0h2m5 0h1m23 0h1m24 0h1m4 0h1m19 0h1m24 0h1m16 0h1m6 0h1m21 0h1m20 0h1m18 0h1m17 0h1m16 0h1m11 0h1m10 0h1m5 0h2m-351 1h1m5 0h2m9 0h2m13 0h1m19 0h1m20 0h1m21 0h2m2 0h1m23 0h1m24 0h1m6 0h2m16 0h1m24 0h1m18 0h2m3 0h1m21 0h1m20 0h1m19 0h1m16 0h1m16 0h1m12 0h1m9 0h1m5 0h2m-351 1h1m5 0h2m9 0h1m14 0h1m19 0h1m20 0h1m24 0h2m23 0h1m24 0h1m9 0h1m14 0h1m24 0h1m21 0h2m1 0h1m21 0h1m20 0h1m18 0h1m16 0h1m16 0h1m12 0h1m9 0h1m4 0h3m-351 1h1m5 0h1m10 0h1m14 0h1m18 0h2m20 0h1m25 0h1m1 0h2m20 0h1m24 0h1m11 0h2m12 0h1m23 0h1m24 0h1m21 0h1m20 0h1m18 0h1m17 0h1m16 0h1m11 0h1m10 0h1m3 0h3m-351 1h1m5 0h1m10 0h1m14 0h1m18 0h1m21 0h1m24 0h2m4 0h2m17 0h1m25 0h1m13 0h1m10 0h1m23 0h1m24 0h1m1 0h2m18 0h1m20 0h1m19 0h1m16 0h1m16 0h1m12 0h1m9 0h1m3 0h1m1 0h2m-352 1h1m5 0h1m10 0h1m6 0h11m16 0h1m21 0h1m24 0h1m8 0h2m14 0h1m25 0h1m15 0h1m8 0h1m24 0h1m23 0h1m4 0h2m16 0h1m20 0h1m18 0h1m16 0h1m16 0h1m12 0h1m9 0h1m3 0h1m1 0h2m-353 1h2m5 0h1m9 0h10m5 0h2m3 0h6m9 0h1m21 0h1m24 0h1m11 0h2m12 0h1m24 0h1m17 0h2m5 0h1m24 0h1m24 0h1m6 0h2m13 0h1m20 0h1m18 0h1m17 0h1m16 0h1m11 0h1m10 0h1m2 0h1m2 0h1m-353 1h1m6 0h1m6 0h5m13 0h1m11 0h5m3 0h1m21 0h1m24 0h1m14 0h1m10 0h1m24 0h1m20 0h1m4 0h1m23 0h1m24 0h1m9 0h2m10 0h1m21 0h1m18 0h1m16 0h1m16 0h1m12 0h1m9 0h1m2 0h1m2 0h1m-353 1h1m5 0h2m4 0h3m2 0h1m14 0h1m17 0h4m19 0h2m24 0h1m16 0h2m7 0h1m24 0h1m22 0h2m1 0h1m23 0h1m24 0h1m12 0h1m9 0h1m20 0h1m18 0h1m16 0h1m16 0h1m12 0h1m9 0h1m2 0h1m2 0h1m-353 1h1m5 0h1m3 0h3m4 0h1m13 0h2m18 0h2m2 0h3m15 0h1m24 0h2m19 0h2m4 0h1m24 0h1m25 0h1m24 0h1m23 0h1m14 0h2m6 0h1m20 0h1m18 0h1m17 0h1m16 0h1m12 0h1m9 0h3m2 0h2m-354 1h1m5 0h5m5 0h2m13 0h1m19 0h1m7 0h4m10 0h1m24 0h1m23 0h2m1 0h1m24 0h1m25 0h1m1 0h2m21 0h1m24 0h1m16 0h2m3 0h1m21 0h1m18 0h1m16 0h1m16 0h1m12 0h1m9 0h3m2 0h2m-354 1h1m5 0h2m8 0h1m13 0h2m19 0h1m12 0h3m6 0h1m24 0h1m26 0h1m24 0h1m25 0h1m4 0h1m19 0h1m24 0h1m19 0h2m1 0h1m20 0h1m18 0h1m16 0h1m16 0h1m12 0h1m9 0h2m3 0h2m-354 1h1m4 0h2m8 0h2m13 0h1m19 0h2m16 0h3m2 0h1m24 0h1m26 0h1m1 0h2m21 0h1m25 0h1m6 0h2m16 0h1m24 0h1m22 0h2m19 0h1m19 0h1m16 0h1m16 0h1m12 0h1m9 0h1m4 0h1m-354 1h1m3 0h2m9 0h1m14 0h1m19 0h1m21 0h3m22 0h2m26 0h1m4 0h2m18 0h1m25 0h1m9 0h1m14 0h1m24 0h1m22 0h1m2 0h2m17 0h1m18 0h1m16 0h1m16 0h1m12 0h1m9 0h1m4 0h1m-354 1h1m2 0h3m9 0h1m13 0h2m18 0h2m21 0h2m2 0h2m19 0h1m26 0h2m7 0h1m16 0h1m25 0h1m11 0h2m12 0h1m23 0h1m22 0h1m5 0h2m14 0h1m18 0h1m17 0h1m16 0h1m11 0h1m8 0h2m4 0h2m-356 1h2m1 0h4m8 0h2m13 0h1m19 0h1m22 0h1m6 0h2m16 0h1m26 0h1m10 0h2m13 0h1m26 0h1m13 0h1m10 0h1m24 0h1m22 0h1m7 0h2m11 0h1m19 0h1m16 0h1m16 0h1m12 0h1m6 0h3m4 0h2m-356 1h1m2 0h3m9 0h1m13 0h2m19 0h1m22 0h1m9 0h3m12 0h1m26 0h1m13 0h1m12 0h1m25 0h1m15 0h1m8 0h1m24 0h1m22 0h1m10 0h2m9 0h1m18 0h1m16 0h1m16 0h1m12 0h1m5 0h2m2 0h1m3 0h2m-356 1h1m1 0h4m8 0h2m13 0h1m19 0h2m21 0h2m13 0h2m9 0h1m26 0h1m15 0h2m9 0h1m25 0h1m17 0h2m5 0h1m24 0h1m22 0h1m13 0h2m6 0h1m18 0h1m17 0h1m16 0h1m11 0h1m4 0h2m3 0h1m3 0h2m-356 1h3m1 0h1m9 0h1m14 0h1m19 0h1m22 0h1m17 0h2m5 0h2m26 0h1m18 0h2m6 0h1m25 0h1m20 0h1m4 0h1m23 0h1m22 0h1m16 0h2m3 0h1m19 0h1m16 0h1m16 0h1m12 0h1m3 0h2m3 0h1m3 0h2m-356 1h2m2 0h1m9 0h1m13 0h2m18 0h2m21 0h2m20 0h2m2 0h1m27 0h1m21 0h1m4 0h1m25 0h1m22 0h2m1 0h1m24 0h1m22 0h1m18 0h2m1 0h1m18 0h1m16 0h1m16 0h1m12 0h1m2 0h2m4 0h1m3 0h1m1 0h1m-357 1h1m2 0h2m8 0h2m5 0h11m17 0h1m22 0h1m24 0h2m26 0h2m23 0h2m1 0h1m25 0h1m25 0h1m24 0h1m22 0h1m21 0h2m17 0h1m17 0h1m16 0h1m11 0h1m1 0h2m6 0h1m2 0h1m1 0h1m-358 1h2m2 0h1m8 0h10m5 0h2m3 0h6m10 0h1m22 0h1m25 0h1m1 0h2m23 0h1m27 0h1m25 0h1m25 0h1m1 0h2m21 0h1m22 0h1m21 0h1m2 0h3m14 0h1m16 0h1m16 0h1m12 0h2m7 0h1m2 0h1m1 0h1m-358 1h1m2 0h2m5 0h5m12 0h2m11 0h5m3 0h2m21 0h2m24 0h2m4 0h2m20 0h1m27 0h1m1 0h2m22 0h1m25 0h1m4 0h2m18 0h1m22 0h1m21 0h1m6 0h4m9 0h1m16 0h1m16 0h1m11 0h2m8 0h1m2 0h1m1 0h1m-358 1h1m2 0h1m4 0h3m1 0h2m13 0h1m18 0h4m21 0h1m25 0h1m8 0h2m17 0h1m27 0h1m4 0h1m20 0h1m25 0h1m7 0h1m16 0h1m22 0h1m22 0h1m10 0h3m5 0h1m17 0h1m16 0h1m8 0h4m8 0h1m2 0h1m1 0h1m-359 1h2m2 0h1m2 0h3m3 0h1m13 0h2m19 0h2m2 0h3m16 0h2m25 0h1m11 0h2m14 0h1m27 0h1m6 0h2m17 0h1m25 0h1m9 0h2m14 0h1m22 0h1m21 0h1m14 0h3m2 0h1m16 0h1m16 0h1m5 0h4m2 0h1m8 0h1m3 0h1m1 0h1m-360 1h1m2 0h5m4 0h2m13 0h1m19 0h2m7 0h4m11 0h1m25 0h2m14 0h2m11 0h1m27 0h1m9 0h1m15 0h1m25 0h1m12 0h2m11 0h1m22 0h1m21 0h1m18 0h6m12 0h1m16 0h1m3 0h4m5 0h1m8 0h1m2 0h1m1 0h1m-361 1h2m2 0h2m7 0h1m13 0h2m19 0h1m13 0h3m7 0h1m25 0h1m18 0h2m7 0h2m26 0h2m11 0h2m12 0h1m25 0h1m15 0h2m8 0h1m22 0h1m21 0h1m19 0h1m5 0h8m4 0h1m16 0h4m8 0h1m8 0h1m2 0h1m1 0h1m-361 1h1m2 0h2m7 0h2m12 0h2m19 0h2m17 0h3m2 0h2m25 0h1m21 0h2m4 0h1m27 0h1m15 0h1m11 0h1m24 0h1m18 0h1m6 0h1m22 0h1m22 0h1m18 0h1m14 0h22m10 0h1m8 0h1m2 0h1m1 0h1m-361 1h1m1 0h2m7 0h2m13 0h1m20 0h1m22 0h3m24 0h2m24 0h2m1 0h1m27 0h1m17 0h1m9 0h1m24 0h1m20 0h2m4 0h1m22 0h1m21 0h1m19 0h1m16 0h1m16 0h1m11 0h1m8 0h1m2 0h1m1 0h1m-362 1h4m8 0h1m13 0h2m19 0h2m22 0h2m2 0h2m21 0h1m28 0h1m27 0h1m19 0h2m6 0h1m24 0h1m23 0h2m1 0h1m22 0h1m21 0h1m19 0h1m16 0h1m16 0h1m12 0h1m8 0h1m1 0h1m1 0h1m-362 1h4m7 0h2m13 0h1m19 0h2m22 0h2m6 0h2m18 0h1m28 0h1m1 0h2m24 0h1m22 0h1m4 0h1m24 0h1m26 0h1m22 0h1m21 0h1m19 0h1m17 0h1m16 0h1m11 0h1m8 0h1m1 0h1m1 0h1m-363 1h4m8 0h1m13 0h2m19 0h1m23 0h1m10 0h2m14 0h2m27 0h2m4 0h1m22 0h1m24 0h2m1 0h1m24 0h1m26 0h1m1 0h2m19 0h1m21 0h1m19 0h1m17 0h1m16 0h1m11 0h1m8 0h1m1 0h1m1 0h1m-363 1h4m7 0h2m12 0h2m19 0h2m22 0h2m13 0h2m11 0h1m28 0h1m7 0h2m19 0h1m27 0h1m25 0h1m25 0h1m4 0h2m16 0h1m22 0h1m19 0h1m16 0h1m16 0h1m11 0h1m8 0h3m1 0h1m-363 1h3m7 0h2m5 0h11m18 0h1m23 0h1m17 0h2m8 0h1m28 0h1m10 0h1m17 0h1m27 0h1m1 0h2m22 0h1m25 0h1m7 0h2m14 0h1m21 0h1m19 0h1m16 0h1m16 0h1m11 0h1m8 0h2m1 0h2m-364 1h3m7 0h10m5 0h2m3 0h6m10 0h2m22 0h2m20 0h2m4 0h2m27 0h2m12 0h2m14 0h1m27 0h1m4 0h2m19 0h1m25 0h1m10 0h2m11 0h1m21 0h1m19 0h1m17 0h1m15 0h1m12 0h1m8 0h1m1 0h2m-364 1h3m4 0h4m13 0h2m11 0h5m3 0h2m22 0h2m24 0h2m1 0h1m28 0h1m16 0h1m11 0h2m26 0h2m7 0h1m17 0h1m25 0h1m13 0h1m9 0h1m21 0h1m19 0h1m17 0h1m15 0h1m12 0h1m8 0h1m1 0h2m-365 1h3m3 0h5m13 0h2m18 0h4m22 0h1m28 0h1m28 0h1m18 0h1m9 0h1m27 0h1m10 0h2m14 0h1m25 0h1m15 0h2m6 0h1m22 0h1m18 0h1m17 0h1m16 0h1m11 0h1m8 0h1m1 0h2m-366 1h4m1 0h3m1 0h2m13 0h2m19 0h2m3 0h3m17 0h2m27 0h2m1 0h2m24 0h2m20 0h2m6 0h1m27 0h1m13 0h1m12 0h1m25 0h1m18 0h2m4 0h1m21 0h1m19 0h1m16 0h1m16 0h1m11 0h1m8 0h1m1 0h3m-367 1h6m2 0h2m13 0h2m19 0h2m8 0h4m12 0h1m27 0h2m5 0h2m21 0h1m24 0h1m4 0h1m27 0h1m15 0h2m9 0h1m25 0h1m21 0h2m1 0h1m21 0h1m19 0h1m16 0h1m16 0h1m12 0h1m6 0h2m1 0h1m1 0h1m-368 1h4m3 0h3m13 0h2m19 0h2m14 0h3m7 0h2m26 0h2m9 0h2m18 0h1m26 0h2m1 0h1m27 0h1m18 0h2m6 0h1m25 0h1m24 0h2m20 0h1m19 0h1m17 0h1m15 0h1m12 0h1m6 0h1m3 0h2m-368 1h2m4 0h2m14 0h2m19 0h2m19 0h3m2 0h2m27 0h1m13 0h2m14 0h2m29 0h1m27 0h1m21 0h1m4 0h1m25 0h1m24 0h1m2 0h2m17 0h1m19 0h1m17 0h1m15 0h1m12 0h1m6 0h1m3 0h2m-369 1h2m4 0h2m14 0h2m19 0h2m24 0h3m26 0h2m16 0h2m11 0h1m29 0h2m1 0h2m23 0h2m23 0h2m1 0h1m25 0h1m24 0h1m5 0h2m15 0h1m19 0h1m16 0h1m16 0h1m11 0h1m6 0h1m3 0h2m-370 1h2m4 0h2m14 0h2m19 0h2m24 0h2m3 0h2m22 0h2m20 0h2m8 0h1m29 0h1m5 0h2m20 0h1m27 0h1m26 0h1m23 0h1m8 0h2m12 0h1m19 0h1m16 0h1m16 0h1m11 0h1m6 0h1m3 0h2m-371 1h2m4 0h2m14 0h2m19 0h2m24 0h2m7 0h2m18 0h2m24 0h2m4 0h2m29 0h1m8 0h1m18 0h1m27 0h1m1 0h2m23 0h1m23 0h1m11 0h2m9 0h1m19 0h1m17 0h1m15 0h1m12 0h1m4 0h2m3 0h2m-372 1h2m3 0h23m15 0h2m24 0h2m11 0h3m14 0h1m28 0h2m1 0h1m29 0h2m10 0h2m15 0h1m27 0h1m4 0h1m21 0h1m23 0h1m14 0h2m6 0h1m19 0h1m17 0h1m15 0h1m12 0h1m3 0h3m3 0h2m-373 1h2m2 0h3m15 0h2m6 0h8m5 0h2m24 0h2m16 0h2m10 0h2m31 0h1m29 0h1m14 0h1m13 0h1m27 0h1m6 0h2m18 0h1m24 0h1m16 0h2m4 0h1m18 0h1m17 0h1m15 0h1m12 0h1m3 0h2m5 0h1m-374 1h7m14 0h3m16 0h5m24 0h2m20 0h2m6 0h2m31 0h2m1 0h2m25 0h2m16 0h2m10 0h1m27 0h1m9 0h1m16 0h1m24 0h1m19 0h2m1 0h1m19 0h1m16 0h1m16 0h1m11 0h1m2 0h3m5 0h1m-375 1h7m13 0h3m19 0h2m3 0h3m19 0h2m24 0h2m2 0h2m31 0h2m5 0h2m22 0h1m20 0h2m6 0h2m26 0h2m11 0h2m13 0h1m24 0h1m22 0h2m18 0h1m16 0h1m16 0h1m12 0h3m1 0h1m5 0h1m-376 1h3m1 0h2m14 0h2m20 0h2m8 0h4m13 0h2m28 0h2m31 0h2m9 0h1m20 0h1m23 0h1m4 0h1m27 0h1m15 0h1m11 0h1m24 0h1m22 0h1m2 0h3m14 0h1m17 0h1m15 0h1m12 0h2m2 0h1m5 0h1m-378 1h3m2 0h2m13 0h3m19 0h3m14 0h3m8 0h2m29 0h2m1 0h2m27 0h2m12 0h2m16 0h2m25 0h2m1 0h1m27 0h1m17 0h1m9 0h1m24 0h1m22 0h1m6 0h4m9 0h1m17 0h1m15 0h1m11 0h2m2 0h2m5 0h1m-379 1h2m2 0h3m12 0h3m20 0h2m20 0h3m3 0h2m29 0h2m5 0h2m23 0h2m16 0h1m14 0h1m29 0h1m27 0h1m19 0h2m6 0h1m24 0h1m22 0h1m11 0h3m6 0h1m16 0h1m15 0h1m8 0h5m2 0h1m1 0h1m4 0h1m-380 1h2m2 0h2m13 0h2m21 0h2m25 0h3m29 0h2m9 0h2m20 0h1m19 0h2m10 0h2m29 0h1m1 0h2m24 0h1m22 0h1m4 0h1m24 0h1m22 0h1m15 0h3m2 0h1m16 0h1m15 0h1m6 0h3m3 0h1m2 0h1m1 0h1m4 0h1m-382 1h3m2 0h2m5 0h11m19 0h3m25 0h2m3 0h2m25 0h2m13 0h2m16 0h2m22 0h2m7 0h1m29 0h2m4 0h1m22 0h1m24 0h2m1 0h1m24 0h1m22 0h1m19 0h6m13 0h1m15 0h1m3 0h3m5 0h1m1 0h2m1 0h1m4 0h1m-383 1h2m2 0h10m4 0h3m4 0h6m11 0h2m26 0h2m7 0h2m21 0h2m17 0h1m13 0h2m26 0h1m5 0h1m29 0h1m7 0h2m19 0h1m27 0h1m24 0h1m22 0h1m20 0h1m5 0h8m4 0h1m15 0h5m7 0h1m1 0h1m2 0h1m3 0h2m-384 1h2m1 0h3m12 0h2m13 0h5m4 0h2m25 0h3m11 0h2m17 0h2m20 0h2m9 0h2m29 0h2m1 0h2m29 0h1m10 0h1m17 0h1m27 0h1m1 0h2m21 0h1m22 0h1m20 0h1m14 0h21m10 0h1m1 0h1m2 0h1m3 0h1m-385 1h7m11 0h3m20 0h4m25 0h2m16 0h2m13 0h2m24 0h2m5 0h2m33 0h1m29 0h2m12 0h2m14 0h1m27 0h1m4 0h2m18 0h1m22 0h1m20 0h1m17 0h1m15 0h1m11 0h3m3 0h1m2 0h1m-386 1h6m11 0h3m21 0h3m3 0h3m20 0h2m20 0h2m9 0h2m28 0h2m1 0h2m33 0h2m1 0h2m26 0h1m16 0h1m11 0h2m26 0h2m7 0h2m15 0h1m22 0h1m20 0h1m17 0h1m15 0h1m11 0h2m4 0h1m2 0h1m-387 1h5m11 0h3m21 0h3m9 0h4m13 0h3m24 0h2m5 0h2m32 0h1m33 0h2m5 0h1m24 0h1m18 0h1m9 0h1m27 0h1m11 0h2m13 0h1m21 0h1m20 0h1m17 0h1m15 0h1m11 0h2m4 0h1m2 0h1m-389 1h6m11 0h2m21 0h3m16 0h3m8 0h2m29 0h2m1 0h2m32 0h2m1 0h2m30 0h1m8 0h2m20 0h2m20 0h2m6 0h1m27 0h1m14 0h2m10 0h1m21 0h1m20 0h1m17 0h1m15 0h1m11 0h2m4 0h1m2 0h1m-391 1h6m11 0h3m20 0h3m22 0h3m3 0h2m32 0h2m32 0h2m5 0h1m27 0h2m11 0h1m18 0h1m24 0h1m4 0h1m27 0h1m17 0h2m7 0h1m22 0h1m19 0h1m17 0h1m15 0h1m11 0h1m5 0h1m2 0h1m-393 1h3m1 0h2m4 0h13m17 0h3m28 0h3m32 0h2m2 0h2m28 0h2m8 0h2m24 0h1m14 0h2m15 0h1m26 0h2m1 0h1m27 0h1m20 0h2m4 0h1m22 0h1m19 0h1m18 0h1m14 0h1m11 0h1m6 0h1m1 0h1m-395 1h3m1 0h10m3 0h3m6 0h8m6 0h3m29 0h2m3 0h2m27 0h3m6 0h2m24 0h2m12 0h1m21 0h2m17 0h1m12 0h2m29 0h1m27 0h1m23 0h2m1 0h1m22 0h1m19 0h1m18 0h1m14 0h1m10 0h2m6 0h1m1 0h1m-397 1h7m10 0h3m17 0h6m29 0h3m7 0h2m22 0h3m11 0h2m20 0h2m15 0h2m17 0h2m20 0h1m10 0h1m30 0h1m1 0h2m23 0h2m26 0h2m21 0h1m19 0h1m18 0h1m14 0h1m10 0h1m7 0h3m-399 1h7m10 0h3m20 0h3m3 0h3m23 0h3m12 0h3m17 0h2m16 0h2m16 0h2m19 0h2m14 0h1m23 0h2m7 0h1m29 0h2m4 0h2m20 0h1m27 0h1m2 0h2m18 0h1m19 0h1m18 0h1m14 0h1m10 0h1m7 0h2m-400 1h7m10 0h3m20 0h3m9 0h2m19 0h2m18 0h2m12 0h3m20 0h1m13 0h2m23 0h1m11 0h2m26 0h1m4 0h2m29 0h1m8 0h1m18 0h1m27 0h1m5 0h2m15 0h1m20 0h1m17 0h1m14 0h1m9 0h2m7 0h2m-402 1h7m10 0h3m20 0h3m14 0h3m13 0h3m22 0h2m7 0h3m24 0h2m9 0h2m26 0h2m8 0h1m29 0h2m1 0h1m30 0h1m10 0h2m15 0h1m26 0h2m8 0h3m11 0h1m20 0h1m17 0h1m14 0h1m8 0h3m8 0h1m-403 1h2m1 0h3m10 0h3m20 0h3m20 0h3m7 0h3m27 0h2m3 0h2m29 0h2m5 0h2m30 0h1m5 0h2m32 0h1m29 0h2m13 0h1m13 0h1m26 0h1m13 0h2m8 0h1m20 0h1m17 0h1m15 0h1m6 0h2m1 0h1m8 0h1m-405 1h6m3 0h13m17 0h3m26 0h2m3 0h2m32 0h3m33 0h2m1 0h2m33 0h2m1 0h2m32 0h2m1 0h2m26 0h1m16 0h2m10 0h1m26 0h1m16 0h2m5 0h1m20 0h1m17 0h1m15 0h1m6 0h1m3 0h1m7 0h1m-407 1h2m1 0h10m3 0h3m6 0h8m6 0h3m31 0h3m32 0h2m2 0h2m33 0h2m36 0h2m32 0h2m5 0h1m24 0h1m19 0h2m6 0h2m26 0h1m19 0h2m2 0h1m20 0h1m17 0h1m15 0h1m5 0h2m3 0h1m6 0h2m-408 1h5m10 0h3m17 0h6m31 0h3m3 0h2m27 0h3m6 0h2m29 0h2m2 0h2m32 0h2m2 0h2m28 0h2m8 0h2m20 0h2m22 0h1m4 0h1m27 0h1m22 0h3m19 0h1m17 0h1m15 0h1m4 0h2m4 0h1m6 0h2m-410 1h5m10 0h3m20 0h3m3 0h3m25 0h3m8 0h2m22 0h3m11 0h1m26 0h2m6 0h2m28 0h2m6 0h2m25 0h1m12 0h1m18 0h1m25 0h2m1 0h1m27 0h1m23 0h1m2 0h3m15 0h1m17 0h1m15 0h1m3 0h2m5 0h1m6 0h2m-412 1h5m10 0h3m21 0h2m9 0h2m20 0h3m13 0h3m17 0h2m15 0h2m21 0h3m10 0h1m25 0h2m10 0h1m22 0h2m14 0h2m15 0h1m28 0h1m26 0h2m23 0h1m6 0h4m10 0h1m17 0h1m15 0h1m3 0h1m6 0h1m5 0h3m-413 1h4m10 0h3m21 0h3m13 0h3m14 0h3m19 0h2m12 0h3m19 0h1m18 0h2m14 0h2m21 0h2m13 0h2m18 0h2m18 0h1m12 0h2m28 0h1m1 0h2m23 0h1m24 0h1m11 0h3m6 0h1m18 0h1m14 0h1m2 0h2m6 0h1m5 0h2m-414 1h4m10 0h3m21 0h3m19 0h3m8 0h3m24 0h2m7 0h3m23 0h2m14 0h2m18 0h2m17 0h2m17 0h1m15 0h2m21 0h1m10 0h1m28 0h2m4 0h2m20 0h1m24 0h1m15 0h3m2 0h1m18 0h1m14 0h1m1 0h2m8 0h1m3 0h3m-416 1h4m3 0h11m20 0h3m25 0h2m3 0h3m29 0h2m3 0h2m28 0h2m9 0h3m22 0h2m13 0h2m20 0h2m12 0h1m24 0h2m7 0h1m28 0h1m8 0h2m17 0h1m23 0h2m19 0h4m16 0h1m14 0h3m9 0h1m3 0h1m1 0h1m-417 1h10m4 0h2m4 0h6m12 0h2m30 0h3m34 0h3m32 0h1m6 0h2m27 0h1m10 0h2m24 0h2m8 0h2m27 0h1m4 0h2m28 0h1m11 0h2m14 0h1m23 0h1m21 0h1m3 0h6m9 0h1m14 0h2m10 0h1m3 0h1m1 0h1m-420 1h4m11 0h3m12 0h5m4 0h3m29 0h3m3 0h2m29 0h3m2 0h2m32 0h2m2 0h2m30 0h2m6 0h2m28 0h1m5 0h2m30 0h2m1 0h1m28 0h2m14 0h2m11 0h1m23 0h1m21 0h1m10 0h5m3 0h1m6 0h10m10 0h1m2 0h2m1 0h1m-422 1h5m10 0h3m20 0h4m29 0h3m8 0h2m24 0h3m7 0h2m31 0h3m34 0h2m2 0h2m31 0h2m1 0h2m34 0h1m28 0h1m18 0h2m7 0h2m23 0h1m21 0h1m16 0h11m5 0h3m10 0h1m2 0h1m2 0h1m-424 1h5m11 0h2m21 0h3m3 0h4m22 0h3m13 0h3m18 0h3m12 0h2m26 0h3m2 0h2m34 0h3m35 0h1m34 0h2m1 0h2m25 0h1m21 0h2m4 0h1m24 0h1m21 0h1m18 0h1m12 0h2m2 0h1m9 0h1m1 0h2m1 0h2m-426 1h5m11 0h3m20 0h3m10 0h3m16 0h3m19 0h2m13 0h3m17 0h2m21 0h3m7 0h2m30 0h2m2 0h2m32 0h2m1 0h2m30 0h2m5 0h2m21 0h2m24 0h2m1 0h1m24 0h1m20 0h2m18 0h1m11 0h2m3 0h1m10 0h2m2 0h1m-427 1h6m10 0h3m20 0h3m16 0h3m10 0h3m24 0h2m8 0h3m22 0h1m17 0h3m12 0h1m26 0h3m6 0h1m29 0h2m5 0h1m27 0h2m9 0h1m19 0h1m28 0h2m23 0h1m20 0h1m19 0h1m10 0h2m4 0h1m10 0h2m2 0h1m-429 1h6m11 0h2m20 0h3m22 0h4m3 0h3m29 0h2m3 0h3m26 0h2m12 0h3m16 0h2m22 0h2m10 0h2m25 0h2m8 0h2m24 0h1m12 0h2m16 0h1m27 0h2m2 0h2m20 0h1m20 0h1m19 0h1m9 0h2m5 0h1m10 0h2m2 0h1m-431 1h3m1 0h2m4 0h13m16 0h3m29 0h3m34 0h3m31 0h2m7 0h3m21 0h1m18 0h3m14 0h1m22 0h2m12 0h1m21 0h2m15 0h1m13 0h2m27 0h1m6 0h2m17 0h1m20 0h1m18 0h2m8 0h2m6 0h1m10 0h1m2 0h2m-433 1h3m1 0h10m4 0h2m6 0h8m5 0h3m29 0h3m3 0h2m29 0h3m2 0h2m32 0h2m2 0h3m25 0h2m14 0h3m17 0h2m18 0h2m15 0h2m17 0h2m18 0h2m10 0h1m28 0h1m9 0h2m13 0h2m20 0h1m18 0h1m8 0h2m8 0h1m8 0h2m2 0h1m-434 1h7m12 0h2m16 0h5m29 0h3m8 0h2m24 0h3m7 0h2m31 0h3m30 0h2m10 0h2m22 0h1m15 0h2m19 0h1m14 0h2m22 0h2m7 0h1m27 0h2m12 0h2m10 0h1m21 0h1m18 0h1m7 0h2m9 0h1m7 0h3m2 0h1m-436 1h8m11 0h3m18 0h2m3 0h4m22 0h3m13 0h3m18 0h3m12 0h2m26 0h3m2 0h2m31 0h1m6 0h3m25 0h1m12 0h2m22 0h1m12 0h1m26 0h1m4 0h2m27 0h1m16 0h2m7 0h1m21 0h1m18 0h1m6 0h2m10 0h1m7 0h1m1 0h1m1 0h2m-438 1h8m12 0h2m19 0h2m9 0h3m16 0h3m19 0h2m13 0h3m17 0h2m21 0h3m7 0h2m30 0h2m2 0h2m29 0h2m8 0h2m25 0h2m8 0h2m28 0h2m1 0h1m28 0h1m19 0h2m4 0h1m21 0h1m18 0h1m5 0h2m11 0h1m6 0h4m1 0h1m-439 1h4m2 0h2m13 0h2m18 0h3m14 0h3m10 0h3m24 0h2m8 0h3m22 0h1m17 0h3m12 0h1m30 0h3m33 0h1m5 0h2m29 0h1m5 0h2m32 0h1m27 0h2m22 0h2m1 0h1m21 0h1m18 0h1m4 0h3m11 0h1m6 0h1m1 0h1m1 0h2m-440 1h2m3 0h3m12 0h3m18 0h2m20 0h4m3 0h3m29 0h2m3 0h3m26 0h2m12 0h3m16 0h2m25 0h3m2 0h2m33 0h2m1 0h2m32 0h2m1 0h2m32 0h2m1 0h2m24 0h1m26 0h2m19 0h2m18 0h1m2 0h3m1 0h1m12 0h1m4 0h2m1 0h1m1 0h1m-440 1h2m2 0h3m13 0h2m19 0h2m26 0h3m34 0h3m31 0h2m7 0h3m21 0h1m21 0h3m7 0h1m33 0h2m36 0h1m32 0h2m5 0h2m20 0h2m25 0h2m2 0h3m15 0h1m19 0h4m3 0h1m12 0h1m3 0h2m2 0h1m1 0h1m-442 1h3m2 0h2m14 0h2m18 0h3m26 0h2m3 0h2m30 0h2m2 0h2m32 0h2m2 0h3m25 0h2m16 0h3m11 0h2m29 0h2m2 0h2m32 0h2m1 0h2m28 0h2m9 0h2m17 0h1m26 0h1m7 0h4m10 0h1m19 0h2m6 0h1m11 0h1m3 0h1m3 0h3m-443 1h2m2 0h22m15 0h2m27 0h2m7 0h2m25 0h3m6 0h2m31 0h3m30 0h2m11 0h3m16 0h1m26 0h2m6 0h1m29 0h2m5 0h2m25 0h1m13 0h2m14 0h1m26 0h1m12 0h3m6 0h1m17 0h3m7 0h1m11 0h1m2 0h2m3 0h2m-443 1h2m1 0h4m13 0h2m6 0h8m5 0h2m26 0h3m11 0h2m20 0h3m11 0h2m26 0h3m2 0h2m31 0h1m7 0h3m20 0h2m21 0h3m9 0h2m25 0h2m9 0h1m22 0h2m16 0h1m11 0h2m25 0h2m16 0h3m2 0h1m15 0h3m9 0h1m11 0h1m2 0h1m4 0h2m-445 1h8m13 0h2m16 0h5m26 0h2m16 0h2m16 0h2m16 0h2m21 0h3m7 0h1m31 0h2m2 0h3m25 0h2m17 0h2m14 0h1m22 0h2m12 0h2m18 0h2m19 0h2m8 0h1m26 0h1m21 0h4m12 0h2m11 0h1m12 0h3m3 0h2m-445 1h5m1 0h2m13 0h2m18 0h2m3 0h4m20 0h2m20 0h2m11 0h3m20 0h1m17 0h3m11 0h2m30 0h3m30 0h1m14 0h2m17 0h2m18 0h2m16 0h1m15 0h2m23 0h2m5 0h1m25 0h2m22 0h1m3 0h6m3 0h3m12 0h1m12 0h2m4 0h2m-446 1h3m3 0h2m13 0h2m18 0h2m9 0h3m14 0h3m24 0h2m6 0h3m24 0h2m12 0h3m16 0h1m27 0h2m2 0h2m30 0h2m9 0h3m21 0h1m15 0h2m19 0h2m12 0h1m27 0h2m1 0h2m25 0h1m22 0h2m10 0h4m13 0h1m11 0h2m5 0h2m-448 1h3m4 0h2m13 0h2m18 0h2m14 0h3m9 0h2m29 0h2m2 0h2m29 0h2m7 0h3m20 0h2m22 0h3m6 0h1m31 0h1m6 0h2m25 0h1m12 0h2m23 0h2m8 0h2m30 0h2m25 0h1m22 0h1m10 0h3m1 0h1m14 0h1m9 0h3m5 0h1m-448 1h2m5 0h2m13 0h2m18 0h2m19 0h4m3 0h2m32 0h3m33 0h2m2 0h3m25 0h1m18 0h3m10 0h2m30 0h2m2 0h2m28 0h2m8 0h2m27 0h1m5 0h2m30 0h2m2 0h2m21 0h2m22 0h1m8 0h3m4 0h1m13 0h1m8 0h2m1 0h1m4 0h2m-449 1h2m5 0h2m13 0h2m18 0h2m25 0h3m32 0h2m2 0h2m33 0h3m29 0h1m15 0h2m15 0h1m30 0h3m32 0h1m5 0h2m30 0h2m1 0h2m30 0h2m6 0h3m17 0h1m22 0h2m7 0h2m6 0h1m13 0h1m7 0h2m2 0h1m3 0h2m-449 1h2m5 0h2m13 0h2m18 0h2m25 0h3m2 0h2m28 0h2m6 0h2m29 0h2m2 0h2m29 0h2m10 0h3m18 0h2m25 0h3m2 0h2m32 0h2m1 0h2m34 0h1m30 0h2m11 0h2m13 0h2m22 0h1m6 0h3m7 0h1m13 0h1m6 0h2m2 0h2m3 0h1m-449 1h2m5 0h2m13 0h2m18 0h2m25 0h3m6 0h2m23 0h3m10 0h2m24 0h3m6 0h1m30 0h1m6 0h3m23 0h2m20 0h3m7 0h2m31 0h2m34 0h2m1 0h2m27 0h1m15 0h2m10 0h1m23 0h1m4 0h3m9 0h1m13 0h1m5 0h2m3 0h1m3 0h2m-450 1h2m5 0h2m5 0h13m15 0h2m25 0h3m10 0h2m19 0h2m15 0h2m19 0h3m10 0h2m29 0h2m2 0h2m28 0h1m16 0h3m12 0h1m28 0h2m2 0h2m30 0h2m5 0h2m23 0h2m18 0h3m6 0h1m22 0h2m3 0h2m11 0h1m13 0h1m4 0h2m4 0h1m3 0h1m-450 1h2m4 0h11m5 0h2m5 0h8m5 0h2m25 0h3m14 0h2m15 0h2m19 0h1m16 0h2m15 0h1m29 0h3m31 0h2m11 0h3m16 0h2m23 0h3m6 0h2m26 0h2m9 0h2m19 0h2m23 0h2m2 0h2m22 0h1m2 0h3m13 0h1m13 0h1m2 0h2m5 0h1m2 0h2m-451 1h2m2 0h6m12 0h2m15 0h5m25 0h3m18 0h2m10 0h3m22 0h2m11 0h3m18 0h2m24 0h3m2 0h2m32 0h1m7 0h3m21 0h1m19 0h3m11 0h1m23 0h2m13 0h2m15 0h2m27 0h3m22 0h5m14 0h1m13 0h1m1 0h2m6 0h1m1 0h2m-451 1h7m1 0h2m13 0h1m18 0h2m2 0h3m20 0h3m22 0h2m6 0h2m27 0h2m6 0h3m23 0h1m20 0h3m7 0h2m31 0h2m2 0h3m25 0h2m15 0h2m15 0h2m19 0h2m17 0h1m13 0h1m28 0h2m2 0h3m17 0h3m2 0h1m14 0h1m13 0h3m7 0h1m1 0h1m-451 1h5m3 0h2m13 0h2m17 0h2m7 0h2m16 0h3m26 0h2m2 0h2m31 0h2m2 0h2m27 0h1m16 0h3m12 0h1m31 0h3m30 0h2m10 0h3m19 0h1m16 0h2m20 0h2m9 0h2m27 0h2m7 0h2m12 0h3m4 0h1m14 0h1m12 0h3m8 0h3m-452 1h3m6 0h1m14 0h1m18 0h1m11 0h3m11 0h3m29 0h3m34 0h3m30 0h2m11 0h3m16 0h2m26 0h3m2 0h2m31 0h1m6 0h3m23 0h2m12 0h2m24 0h2m5 0h2m28 0h1m11 0h3m6 0h3m7 0h1m13 0h1m11 0h3m8 0h3m-452 1h2m7 0h2m13 0h2m17 0h2m15 0h3m6 0h3m29 0h2m2 0h2m31 0h2m2 0h2m31 0h1m7 0h3m21 0h2m21 0h3m7 0h1m31 0h2m2 0h2m28 0h2m8 0h2m28 0h2m1 0h2m28 0h2m15 0h6m9 0h1m14 0h1m9 0h4m8 0h3m-453 1h2m7 0h2m13 0h2m18 0h1m20 0h2m2 0h3m29 0h2m6 0h2m27 0h2m6 0h2m30 0h2m2 0h3m26 0h2m16 0h3m11 0h2m30 0h3m32 0h1m5 0h2m32 0h2m28 0h1m17 0h3m11 0h1m14 0h1m7 0h3m1 0h1m9 0h2m-452 1h1m7 0h2m14 0h1m18 0h2m23 0h3m29 0h2m10 0h2m22 0h3m10 0h1m30 0h3m31 0h1m12 0h3m16 0h1m27 0h2m2 0h2m32 0h2m1 0h2m32 0h2m2 0h2m24 0h2m15 0h3m13 0h1m14 0h1m6 0h2m3 0h1m8 0h2m-452 1h2m7 0h1m14 0h2m17 0h2m24 0h2m2 0h2m25 0h2m14 0h2m18 0h2m14 0h2m25 0h3m2 0h2m31 0h2m7 0h3m20 0h2m22 0h3m6 0h1m32 0h2m32 0h2m6 0h2m20 0h2m14 0h4m14 0h1m14 0h1m5 0h2m4 0h1m7 0h3m-453 1h2m7 0h2m14 0h1m18 0h1m24 0h2m6 0h3m20 0h2m18 0h1m15 0h2m18 0h1m21 0h3m7 0h2m31 0h2m2 0h3m25 0h1m18 0h3m10 0h2m28 0h2m2 0h2m28 0h2m10 0h2m17 0h1m13 0h3m2 0h1m14 0h1m14 0h1m3 0h3m5 0h1m6 0h3m-453 1h3m6 0h2m14 0h2m17 0h2m23 0h2m11 0h2m16 0h2m21 0h2m10 0h3m21 0h2m16 0h3m12 0h1m31 0h3m29 0h1m15 0h2m15 0h1m25 0h2m6 0h2m24 0h2m14 0h2m13 0h2m11 0h3m4 0h1m14 0h2m14 0h1m1 0h2m6 0h2m5 0h3m-452 1h2m6 0h2m14 0h2m18 0h1m24 0h1m15 0h2m12 0h2m25 0h2m6 0h2m26 0h2m11 0h3m16 0h2m26 0h3m2 0h2m29 0h2m10 0h3m18 0h2m20 0h3m10 0h2m20 0h2m18 0h2m10 0h1m10 0h3m7 0h1m14 0h1m14 0h3m7 0h1m5 0h3m-452 1h2m6 0h22m14 0h2m23 0h2m18 0h3m7 0h2m29 0h2m2 0h2m30 0h1m7 0h3m21 0h1m22 0h3m7 0h1m30 0h1m6 0h3m23 0h1m17 0h2m15 0h2m16 0h2m22 0h2m6 0h2m8 0h3m9 0h1m14 0h1m13 0h3m8 0h1m3 0h4m-452 1h3m4 0h4m14 0h2m5 0h8m4 0h2m23 0h2m23 0h2m3 0h2m32 0h3m33 0h2m2 0h3m25 0h2m16 0h4m11 0h2m29 0h2m2 0h2m27 0h1m14 0h2m19 0h1m13 0h2m26 0h2m2 0h2m7 0h3m11 0h1m14 0h1m11 0h4m9 0h1m2 0h4m-451 1h2m2 0h4m1 0h2m14 0h1m15 0h5m22 0h2m27 0h3m32 0h2m2 0h2m33 0h3m30 0h2m11 0h4m16 0h1m29 0h3m30 0h2m9 0h3m22 0h2m9 0h2m30 0h3m5 0h3m13 0h1m14 0h1m10 0h2m1 0h2m9 0h1m1 0h4m-451 1h7m3 0h1m15 0h1m17 0h2m2 0h3m18 0h1m28 0h2m1 0h2m29 0h2m6 0h2m29 0h2m2 0h2m31 0h1m7 0h3m21 0h2m24 0h3m2 0h2m31 0h1m6 0h2m27 0h2m5 0h2m30 0h2m3 0h6m14 0h1m14 0h1m8 0h3m2 0h1m9 0h6m-451 1h5m6 0h1m14 0h2m17 0h1m7 0h4m12 0h2m27 0h2m5 0h2m25 0h2m10 0h1m26 0h2m6 0h1m31 0h2m2 0h3m26 0h1m20 0h3m7 0h2m30 0h2m2 0h2m31 0h2m1 0h2m30 0h2m5 0h2m2 0h1m14 0h1m14 0h1m6 0h3m4 0h1m9 0h3m1 0h1m-451 1h4m7 0h2m14 0h1m18 0h1m12 0h3m7 0h2m28 0h1m9 0h2m21 0h2m13 0h2m21 0h3m9 0h2m30 0h3m30 0h1m16 0h3m12 0h1m30 0h3m34 0h3m29 0h2m4 0h3m3 0h1m14 0h2m14 0h1m3 0h3m6 0h1m8 0h3m1 0h2m-451 1h3m8 0h1m14 0h2m17 0h2m16 0h3m2 0h2m28 0h2m12 0h2m17 0h2m17 0h1m18 0h2m14 0h1m27 0h2m2 0h2m30 0h2m11 0h3m16 0h2m25 0h3m2 0h2m31 0h2m3 0h2m25 0h2m3 0h3m6 0h1m14 0h1m14 0h1m2 0h2m8 0h1m7 0h3m1 0h2m-451 1h3m9 0h1m14 0h1m18 0h1m21 0h3m28 0h1m16 0h1m14 0h2m20 0h2m14 0h2m17 0h2m22 0h3m6 0h1m31 0h1m7 0h3m21 0h1m21 0h3m7 0h2m27 0h2m7 0h3m20 0h2m2 0h3m8 0h1m14 0h1m14 0h4m8 0h2m6 0h3m1 0h2m-451 1h4m8 0h2m14 0h1m17 0h2m22 0h1m2 0h2m24 0h2m18 0h2m10 0h2m24 0h2m9 0h3m21 0h1m18 0h3m10 0h2m30 0h2m2 0h3m25 0h2m16 0h3m12 0h2m22 0h3m12 0h2m16 0h2m2 0h2m10 0h1m14 0h1m13 0h3m10 0h1m5 0h7m-451 1h5m8 0h1m14 0h2m17 0h1m22 0h2m5 0h2m20 0h2m22 0h2m6 0h2m28 0h1m6 0h2m25 0h1m15 0h2m15 0h1m30 0h3m30 0h2m11 0h3m17 0h2m18 0h2m17 0h2m12 0h2m1 0h3m11 0h1m14 0h1m11 0h4m11 0h1m4 0h2m1 0h4m-450 1h2m1 0h1m9 0h1m14 0h1m18 0h1m22 0h1m9 0h2m17 0h1m26 0h2m2 0h2m31 0h2m2 0h2m28 0h2m10 0h3m18 0h2m25 0h3m2 0h2m31 0h1m7 0h3m22 0h1m15 0h2m21 0h3m7 0h5m13 0h1m14 0h1m9 0h3m2 0h1m11 0h1m3 0h2m2 0h3m-450 1h2m1 0h2m8 0h2m13 0h2m17 0h2m22 0h1m12 0h2m13 0h2m29 0h2m34 0h3m32 0h1m6 0h3m23 0h2m20 0h3m7 0h2m30 0h2m2 0h3m26 0h2m10 0h3m26 0h2m3 0h5m14 0h1m14 0h1m7 0h3m4 0h1m11 0h1m1 0h3m2 0h3m-450 1h2m2 0h1m9 0h1m14 0h1m18 0h1m22 0h2m15 0h2m10 0h1m29 0h2m1 0h2m31 0h2m2 0h2m32 0h2m2 0h2m28 0h1m16 0h3m12 0h1m30 0h3m31 0h2m6 0h2m31 0h5m1 0h1m14 0h2m14 0h1m4 0h3m5 0h2m10 0h4m4 0h2m-450 1h2m3 0h1m9 0h1m14 0h1m17 0h2m22 0h1m19 0h2m6 0h2m28 0h2m5 0h2m27 0h2m6 0h1m32 0h3m31 0h2m11 0h3m16 0h2m25 0h3m2 0h2m32 0h2m2 0h2m31 0h5m3 0h1m14 0h1m14 0h1m2 0h3m7 0h1m11 0h3m4 0h2m-449 1h1m3 0h2m8 0h2m13 0h2m17 0h1m23 0h1m22 0h2m2 0h2m29 0h1m9 0h1m24 0h2m9 0h2m28 0h2m2 0h2m32 0h1m7 0h3m21 0h1m21 0h3m7 0h2m31 0h3m30 0h5m5 0h1m14 0h1m14 0h4m9 0h1m10 0h3m4 0h2m-448 1h1m3 0h1m9 0h1m6 0h13m14 0h1m22 0h2m25 0h2m29 0h2m11 0h2m20 0h2m13 0h1m25 0h2m6 0h1m32 0h2m2 0h3m25 0h2m16 0h3m12 0h2m26 0h3m3 0h2m26 0h2m1 0h2m6 0h1m14 0h1m13 0h3m11 0h1m9 0h3m4 0h2m-448 1h2m2 0h2m7 0h11m6 0h1m5 0h8m4 0h2m22 0h1m26 0h2m1 0h2m26 0h1m15 0h1m17 0h2m16 0h2m20 0h3m9 0h2m31 0h3m30 0h2m11 0h3m17 0h2m21 0h3m8 0h2m21 0h6m7 0h1m14 0h1m11 0h4m12 0h1m7 0h4m4 0h2m-447 1h1m3 0h1m5 0h6m14 0h1m14 0h5m22 0h1m26 0h1m5 0h2m22 0h2m17 0h2m13 0h2m20 0h1m17 0h2m14 0h1m28 0h2m2 0h2m31 0h1m7 0h3m22 0h1m17 0h3m13 0h3m16 0h5m9 0h1m14 0h1m9 0h3m2 0h1m12 0h1m5 0h5m3 0h3m-446 1h1m3 0h1m2 0h5m3 0h1m14 0h1m17 0h1m2 0h3m17 0h2m25 0h2m8 0h2m18 0h2m21 0h2m9 0h2m23 0h1m14 0h2m17 0h2m23 0h3m6 0h2m30 0h2m2 0h3m26 0h2m12 0h3m19 0h2m12 0h2m1 0h2m11 0h1m13 0h1m7 0h3m4 0h1m12 0h1m4 0h2m2 0h1m2 0h3m-445 1h2m2 0h6m5 0h2m14 0h1m17 0h1m6 0h2m14 0h1m26 0h1m12 0h2m15 0h1m25 0h1m6 0h2m26 0h2m9 0h3m21 0h2m18 0h3m11 0h1m30 0h3m31 0h2m7 0h3m24 0h2m7 0h6m12 0h1m14 0h1m4 0h3m5 0h2m11 0h2m2 0h3m2 0h2m1 0h2m-443 1h1m3 0h3m8 0h1m14 0h2m17 0h1m9 0h3m10 0h1m25 0h2m15 0h1m12 0h2m27 0h2m2 0h2m30 0h1m6 0h2m26 0h1m15 0h2m15 0h2m25 0h3m2 0h2m32 0h2m2 0h3m29 0h2m3 0h2m1 0h3m13 0h1m14 0h1m2 0h3m7 0h1m12 0h1m1 0h3m3 0h5m-442 1h1m2 0h2m10 0h1m14 0h1m18 0h1m13 0h3m5 0h2m25 0h1m18 0h2m9 0h1m31 0h2m33 0h2m2 0h2m29 0h2m10 0h3m19 0h1m21 0h3m7 0h2m31 0h3m34 0h3m1 0h2m1 0h1m13 0h1m14 0h4m9 0h1m12 0h3m4 0h4m-441 1h2m1 0h3m10 0h1m14 0h1m17 0h2m17 0h2m2 0h1m25 0h2m21 0h2m5 0h2m30 0h2m1 0h2m33 0h3m33 0h1m6 0h3m23 0h2m16 0h3m12 0h2m26 0h3m3 0h2m30 0h2m2 0h2m2 0h1m13 0h1m13 0h3m11 0h1m11 0h3m4 0h3m-439 1h1m2 0h3m10 0h1m14 0h1m17 0h1m21 0h3m24 0h2m24 0h2m1 0h2m30 0h2m5 0h1m30 0h2m2 0h2m33 0h2m2 0h2m28 0h2m11 0h3m17 0h2m21 0h3m8 0h2m25 0h3m2 0h2m4 0h1m13 0h1m11 0h3m12 0h1m9 0h4m4 0h3m-438 1h1m1 0h3m11 0h1m14 0h1m17 0h1m22 0h1m2 0h2m21 0h1m28 0h1m31 0h1m8 0h2m26 0h2m6 0h1m33 0h3m32 0h1m7 0h3m22 0h1m17 0h3m13 0h2m20 0h3m3 0h2m5 0h1m13 0h1m9 0h3m1 0h1m12 0h1m7 0h5m4 0h2m-437 1h4m1 0h1m10 0h2m14 0h1m17 0h1m22 0h1m5 0h2m17 0h2m27 0h2m1 0h2m27 0h2m11 0h1m23 0h2m9 0h2m29 0h2m2 0h2m32 0h2m2 0h3m26 0h2m12 0h3m18 0h2m16 0h2m4 0h2m6 0h1m13 0h1m7 0h3m3 0h1m12 0h1m5 0h3m1 0h2m3 0h3m-436 1h3m2 0h1m10 0h1m15 0h1m17 0h1m21 0h2m8 0h3m13 0h1m28 0h1m5 0h2m24 0h1m14 0h2m19 0h2m13 0h1m25 0h3m6 0h2m31 0h3m31 0h2m7 0h3m23 0h2m11 0h3m4 0h2m7 0h1m13 0h1m6 0h2m4 0h2m11 0h2m3 0h3m3 0h1m2 0h3m-434 1h2m3 0h1m10 0h1m15 0h1m17 0h1m21 0h1m13 0h2m9 0h2m28 0h1m8 0h1m21 0h2m17 0h1m16 0h2m16 0h2m21 0h2m11 0h1m28 0h2m2 0h2m32 0h2m2 0h3m28 0h2m6 0h3m5 0h2m8 0h1m13 0h1m4 0h3m5 0h1m12 0h1m2 0h3m4 0h2m1 0h2m-433 1h3m3 0h1m10 0h1m15 0h1m17 0h1m21 0h1m16 0h2m6 0h1m28 0h2m10 0h2m17 0h2m20 0h1m13 0h2m20 0h1m17 0h3m14 0h2m23 0h3m6 0h2m31 0h3m33 0h2m2 0h2m6 0h2m9 0h1m14 0h1m1 0h3m7 0h1m12 0h4m5 0h5m-432 1h2m3 0h2m10 0h1m14 0h2m17 0h1m21 0h1m19 0h2m2 0h2m28 0h1m14 0h1m15 0h1m23 0h2m9 0h2m23 0h1m14 0h3m18 0h1m19 0h3m11 0h2m26 0h3m3 0h2m32 0h3m6 0h2m11 0h1m13 0h3m9 0h1m11 0h3m6 0h4m-430 1h1m4 0h2m10 0h1m14 0h1m18 0h1m21 0h1m22 0h2m28 0h2m16 0h2m11 0h2m26 0h1m6 0h2m26 0h2m10 0h2m22 0h2m15 0h2m16 0h2m21 0h3m8 0h2m27 0h3m3 0h6m12 0h1m12 0h3m10 0h1m9 0h4m6 0h3m-428 1h1m4 0h1m10 0h2m14 0h1m17 0h2m21 0h1m23 0h1m1 0h2m25 0h1m20 0h2m8 0h1m29 0h2m2 0h2m30 0h1m6 0h3m26 0h2m10 0h3m20 0h1m17 0h3m13 0h2m22 0h3m8 0h3m12 0h1m11 0h3m11 0h1m7 0h5m6 0h3m-427 1h1m4 0h1m10 0h1m15 0h1m17 0h1m21 0h2m23 0h1m4 0h2m22 0h1m23 0h1m5 0h2m32 0h2m33 0h2m2 0h2m31 0h1m6 0h3m24 0h2m12 0h3m18 0h2m17 0h3m10 0h1m2 0h1m11 0h1m9 0h3m1 0h1m11 0h1m5 0h3m1 0h2m5 0h3m-426 1h2m4 0h1m10 0h1m15 0h1m17 0h1m21 0h1m24 0h1m7 0h2m18 0h2m25 0h2m1 0h2m32 0h2m1 0h2m33 0h3m34 0h2m2 0h2m29 0h2m7 0h3m23 0h2m12 0h3m11 0h2m2 0h1m11 0h1m7 0h3m3 0h1m10 0h2m3 0h3m3 0h1m4 0h3m-424 1h1m5 0h1m9 0h22m13 0h1m21 0h1m24 0h1m10 0h2m15 0h1m29 0h1m32 0h2m5 0h1m30 0h2m2 0h2m34 0h3m33 0h2m2 0h3m28 0h2m7 0h3m13 0h1m3 0h1m11 0h1m6 0h2m4 0h2m10 0h1m2 0h3m4 0h2m2 0h3m-422 1h1m5 0h1m6 0h5m15 0h1m5 0h8m4 0h1m21 0h1m23 0h2m13 0h2m11 0h2m28 0h2m1 0h2m29 0h1m8 0h2m26 0h2m6 0h2m30 0h2m2 0h2m33 0h3m33 0h2m2 0h3m14 0h2m3 0h1m12 0h1m3 0h3m5 0h1m11 0h4m5 0h2m1 0h3m-420 1h1m4 0h2m4 0h3m3 0h1m15 0h1m14 0h5m20 0h1m23 0h1m17 0h2m8 0h1m29 0h1m5 0h1m26 0h2m11 0h1m23 0h2m10 0h1m27 0h2m6 0h2m29 0h2m3 0h2m32 0h3m15 0h2m4 0h1m12 0h1m1 0h3m7 0h1m10 0h3m6 0h5m-418 1h1m4 0h1m3 0h3m5 0h1m15 0h1m17 0h1m2 0h3m16 0h1m23 0h1m20 0h2m5 0h1m29 0h1m7 0h2m23 0h1m14 0h2m19 0h2m13 0h2m22 0h3m10 0h2m24 0h3m7 0h2m27 0h3m3 0h3m11 0h1m6 0h1m11 0h3m9 0h1m9 0h3m6 0h4m-416 1h1m4 0h5m7 0h1m15 0h1m17 0h1m6 0h4m10 0h2m23 0h1m23 0h2m1 0h2m28 0h2m10 0h1m20 0h2m17 0h1m16 0h2m17 0h2m18 0h2m15 0h2m19 0h3m12 0h2m22 0h3m9 0h4m5 0h2m6 0h1m11 0h2m10 0h1m7 0h4m6 0h3m-415 1h2m4 0h2m10 0h1m15 0h1m17 0h1m11 0h3m6 0h1m24 0h1m26 0h1m29 0h1m13 0h2m16 0h2m20 0h1m13 0h2m21 0h2m14 0h2m19 0h1m16 0h2m17 0h2m17 0h3m16 0h3m1 0h1m7 0h1m10 0h2m11 0h1m5 0h5m5 0h3m-413 1h1m4 0h2m12 0h1m14 0h1m17 0h1m15 0h3m2 0h1m24 0h1m26 0h1m1 0h2m25 0h2m16 0h1m14 0h1m23 0h2m9 0h2m25 0h1m10 0h3m22 0h2m11 0h3m21 0h2m12 0h3m21 0h2m7 0h1m9 0h3m11 0h1m4 0h2m2 0h1m4 0h3m-411 1h1m3 0h3m12 0h1m14 0h1m17 0h1m19 0h3m23 0h1m26 0h1m4 0h2m22 0h1m19 0h1m11 0h2m26 0h1m6 0h2m28 0h2m6 0h2m27 0h2m6 0h3m26 0h2m7 0h3m22 0h2m8 0h1m8 0h2m1 0h1m10 0h2m2 0h3m2 0h2m2 0h3m-409 1h1m2 0h2m1 0h1m12 0h1m14 0h1m18 0h1m19 0h1m2 0h2m20 0h1m26 0h1m7 0h1m20 0h1m21 0h2m8 0h1m29 0h2m2 0h2m32 0h2m2 0h2m31 0h2m2 0h2m31 0h2m2 0h3m24 0h1m10 0h1m6 0h2m1 0h2m10 0h1m1 0h3m3 0h2m1 0h3m-407 1h1m1 0h2m2 0h1m12 0h1m14 0h1m18 0h1m19 0h1m5 0h2m17 0h1m26 0h1m9 0h2m16 0h2m24 0h1m5 0h2m32 0h2m35 0h3m34 0h3m34 0h3m25 0h2m10 0h1m5 0h2m2 0h1m11 0h3m4 0h5m-405 1h1m1 0h2m2 0h1m12 0h1m14 0h1m18 0h1m19 0h1m8 0h2m13 0h2m25 0h2m12 0h1m14 0h1m27 0h2m1 0h2m32 0h2m1 0h2m32 0h2m2 0h2m31 0h2m3 0h2m30 0h2m3 0h3m21 0h2m10 0h1m4 0h2m3 0h1m10 0h3m4 0h4m-404 1h4m4 0h1m11 0h1m14 0h1m18 0h1m19 0h1m11 0h2m10 0h1m26 0h1m15 0h2m10 0h2m30 0h1m32 0h2m5 0h2m28 0h2m6 0h2m27 0h2m7 0h2m25 0h3m8 0h4m15 0h3m10 0h1m3 0h2m4 0h1m9 0h3m4 0h3m-402 1h3m5 0h1m11 0h1m15 0h1m17 0h1m19 0h1m14 0h2m7 0h1m26 0h1m18 0h2m7 0h1m30 0h2m1 0h2m29 0h1m9 0h1m25 0h2m10 0h2m22 0h3m11 0h2m20 0h3m15 0h3m9 0h4m1 0h1m9 0h1m2 0h2m5 0h1m7 0h4m4 0h2m-400 1h2m6 0h1m11 0h1m15 0h1m17 0h1m20 0h1m16 0h2m4 0h1m26 0h1m21 0h1m5 0h1m30 0h1m5 0h1m26 0h2m11 0h2m21 0h2m14 0h2m18 0h2m16 0h2m16 0h2m21 0h3m3 0h3m1 0h1m2 0h1m10 0h3m6 0h1m5 0h5m3 0h3m-399 1h1m7 0h1m11 0h1m15 0h1m17 0h1m20 0h1m19 0h2m1 0h1m26 0h1m23 0h2m1 0h2m30 0h1m7 0h2m23 0h1m15 0h2m17 0h2m18 0h1m15 0h2m20 0h2m11 0h3m26 0h4m1 0h2m2 0h1m10 0h2m7 0h1m4 0h2m2 0h1m2 0h3m-397 1h1m7 0h1m11 0h1m15 0h1m17 0h1m20 0h1m22 0h1m26 0h1m26 0h1m30 0h2m10 0h1m20 0h2m18 0h2m13 0h2m21 0h2m10 0h3m24 0h2m6 0h3m27 0h2m4 0h1m3 0h1m10 0h1m7 0h2m2 0h3m2 0h2m1 0h2m-395 1h1m7 0h1m11 0h1m15 0h1m17 0h1m20 0h1m22 0h1m1 0h2m23 0h1m26 0h1m1 0h2m27 0h1m13 0h2m16 0h2m22 0h1m10 0h2m25 0h2m6 0h2m29 0h2m2 0h2m27 0h3m5 0h1m3 0h1m9 0h2m7 0h1m1 0h3m3 0h5m-394 1h1m7 0h1m11 0h1m15 0h1m17 0h1m20 0h1m22 0h1m4 0h2m20 0h1m26 0h1m4 0h1m24 0h2m16 0h1m14 0h1m25 0h2m6 0h2m29 0h2m2 0h2m32 0h3m26 0h3m6 0h2m3 0h1m8 0h3m7 0h3m4 0h4m-392 1h1m7 0h1m12 0h1m14 0h1m17 0h1m20 0h1m22 0h1m7 0h2m17 0h1m26 0h1m6 0h2m21 0h1m19 0h1m11 0h2m28 0h2m2 0h2m32 0h3m32 0h2m3 0h3m21 0h2m8 0h1m5 0h1m6 0h2m1 0h1m7 0h2m4 0h3m-390 1h1m7 0h1m12 0h1m14 0h1m17 0h1m20 0h1m22 0h1m10 0h2m13 0h2m26 0h1m9 0h1m19 0h1m21 0h2m8 0h1m32 0h2m32 0h2m3 0h2m27 0h3m8 0h4m14 0h3m8 0h2m5 0h1m6 0h1m1 0h2m6 0h2m4 0h3m-388 1h1m6 0h1m12 0h1m14 0h1m18 0h1m19 0h1m22 0h1m13 0h2m10 0h1m26 0h2m11 0h2m15 0h2m24 0h1m5 0h2m31 0h2m1 0h2m29 0h2m7 0h2m22 0h3m15 0h3m8 0h3m10 0h1m6 0h1m5 0h2m1 0h1m6 0h2m4 0h2m-386 1h1m6 0h1m12 0h1m14 0h1m18 0h1m19 0h1m22 0h1m16 0h2m7 0h1m26 0h1m15 0h1m13 0h1m27 0h2m1 0h2m31 0h2m5 0h2m25 0h2m11 0h3m17 0h2m21 0h3m3 0h2m12 0h1m6 0h1m4 0h2m2 0h1m5 0h3m3 0h2m-385 1h1m6 0h1m12 0h1m6 0h11m16 0h1m19 0h1m22 0h1m19 0h2m4 0h1m26 0h1m17 0h1m10 0h2m30 0h1m32 0h1m9 0h2m21 0h2m16 0h2m12 0h3m26 0h6m9 0h2m6 0h1m3 0h2m3 0h1m4 0h3m2 0h3m-384 1h1m7 0h1m10 0h10m6 0h1m3 0h6m9 0h1m19 0h1m22 0h1m22 0h2m1 0h1m26 0h1m19 0h2m7 0h1m30 0h2m1 0h2m28 0h2m12 0h2m17 0h2m20 0h2m7 0h3m27 0h2m6 0h9m7 0h1m3 0h1m4 0h1m3 0h3m2 0h2m-382 1h1m7 0h1m7 0h5m14 0h1m10 0h5m3 0h1m19 0h1m22 0h1m25 0h1m26 0h1m22 0h1m5 0h1m30 0h1m5 0h2m24 0h2m16 0h1m14 0h2m24 0h2m3 0h2m28 0h2m15 0h1m8 0h1m1 0h2m4 0h1m2 0h4m1 0h2m-381 1h1m7 0h1m5 0h3m3 0h1m15 0h1m15 0h4m19 0h1m21 0h1m25 0h1m1 0h2m23 0h1m24 0h2m1 0h2m30 0h1m8 0h1m21 0h2m19 0h2m10 0h2m28 0h3m27 0h3m16 0h1m8 0h3m5 0h1m1 0h2m1 0h4m-380 1h1m7 0h1m3 0h3m6 0h1m14 0h1m17 0h1m2 0h3m15 0h1m21 0h1m25 0h1m4 0h2m20 0h1m27 0h1m30 0h2m10 0h2m18 0h2m22 0h2m6 0h2m29 0h2m2 0h3m22 0h2m18 0h2m7 0h2m5 0h4m1 0h3m-378 1h1m7 0h5m8 0h1m14 0h1m17 0h1m6 0h4m10 0h1m22 0h1m24 0h1m7 0h1m18 0h1m27 0h1m1 0h2m27 0h1m14 0h1m15 0h2m26 0h2m2 0h2m29 0h2m7 0h2m18 0h2m18 0h3m7 0h1m6 0h3m1 0h3m-377 1h1m7 0h2m11 0h1m14 0h1m18 0h1m10 0h3m6 0h1m22 0h1m24 0h1m9 0h2m15 0h1m27 0h1m4 0h1m24 0h2m16 0h2m11 0h2m30 0h2m29 0h2m11 0h3m12 0h3m18 0h4m7 0h1m6 0h2m1 0h3m-376 1h1m6 0h2m12 0h1m15 0h1m17 0h1m14 0h3m2 0h1m22 0h1m24 0h1m12 0h1m12 0h2m27 0h1m6 0h2m21 0h1m20 0h2m8 0h1m30 0h2m2 0h2m25 0h2m16 0h3m7 0h2m19 0h3m1 0h1m6 0h2m6 0h1m1 0h2m-374 1h1m5 0h3m12 0h1m15 0h1m17 0h1m18 0h3m21 0h1m24 0h1m14 0h2m9 0h1m28 0h1m9 0h1m19 0h1m23 0h1m5 0h2m29 0h2m6 0h2m21 0h2m21 0h2m3 0h2m18 0h3m1 0h1m1 0h1m6 0h2m5 0h4m-373 1h1m4 0h2m2 0h1m11 0h1m15 0h1m17 0h1m19 0h1m2 0h2m18 0h1m24 0h1m17 0h2m6 0h1m27 0h2m11 0h2m15 0h2m25 0h2m1 0h2m30 0h1m10 0h2m17 0h2m25 0h6m15 0h2m3 0h1m2 0h1m5 0h2m4 0h4m-371 1h1m2 0h2m3 0h1m12 0h1m14 0h1m18 0h1m18 0h1m5 0h2m15 0h1m24 0h1m20 0h1m4 0h1m27 0h1m15 0h1m13 0h1m29 0h1m30 0h2m13 0h2m13 0h2m25 0h2m6 0h8m5 0h2m4 0h1m2 0h1m4 0h2m4 0h4m-370 1h1m2 0h2m3 0h1m12 0h1m14 0h1m18 0h1m19 0h1m7 0h3m11 0h1m24 0h1m22 0h2m1 0h1m27 0h1m17 0h1m10 0h2m28 0h2m1 0h2m27 0h1m17 0h2m9 0h2m25 0h2m16 0h11m2 0h1m4 0h2m4 0h3m-369 1h1m1 0h2m4 0h1m12 0h1m15 0h1m17 0h1m19 0h1m11 0h2m8 0h1m24 0h1m25 0h1m27 0h1m19 0h2m7 0h1m29 0h1m5 0h2m23 0h2m20 0h2m5 0h2m25 0h2m18 0h2m7 0h1m2 0h1m4 0h2m3 0h3m-368 1h3m6 0h1m11 0h1m15 0h1m17 0h1m19 0h1m14 0h2m5 0h1m24 0h1m25 0h1m1 0h2m24 0h1m22 0h1m5 0h1m29 0h1m8 0h2m19 0h2m24 0h2m1 0h2m25 0h2m18 0h2m8 0h1m2 0h1m3 0h3m2 0h3m-367 1h2m7 0h1m11 0h1m15 0h1m17 0h1m19 0h1m17 0h2m2 0h1m24 0h1m25 0h1m4 0h1m22 0h1m24 0h2m1 0h2m28 0h2m11 0h2m16 0h1m28 0h2m24 0h2m18 0h2m9 0h1m3 0h1m2 0h1m1 0h1m1 0h3m-366 1h1m8 0h1m12 0h1m14 0h1m18 0h1m19 0h1m19 0h2m24 0h1m25 0h1m6 0h2m19 0h1m27 0h1m29 0h1m15 0h2m12 0h2m27 0h2m2 0h3m19 0h2m18 0h2m9 0h2m3 0h1m2 0h1m1 0h1m1 0h2m-365 1h1m8 0h1m12 0h1m15 0h1m17 0h1m19 0h1m20 0h1m1 0h2m21 0h1m25 0h1m9 0h1m17 0h1m27 0h1m1 0h2m25 0h2m18 0h2m9 0h1m27 0h2m7 0h4m13 0h2m18 0h2m10 0h1m4 0h1m1 0h6m-364 1h1m8 0h1m12 0h1m15 0h1m17 0h1m19 0h1m20 0h1m4 0h2m18 0h1m25 0h1m11 0h2m14 0h1m27 0h1m4 0h2m22 0h1m22 0h2m5 0h2m26 0h2m13 0h3m8 0h2m18 0h2m11 0h1m4 0h1m1 0h1m1 0h3m-362 1h1m8 0h1m11 0h1m15 0h1m17 0h1m19 0h1m21 0h1m6 0h2m15 0h1m26 0h1m13 0h1m11 0h2m27 0h1m7 0h1m20 0h1m25 0h2m1 0h2m27 0h1m18 0h3m3 0h2m18 0h2m12 0h1m4 0h1m1 0h1m1 0h2m-361 1h1m8 0h1m11 0h1m15 0h1m18 0h1m18 0h1m21 0h1m9 0h2m12 0h1m26 0h1m15 0h1m9 0h1m28 0h1m9 0h2m16 0h2m28 0h2m26 0h2m22 0h6m15 0h2m13 0h1m5 0h2m1 0h1m-360 1h1m8 0h1m12 0h1m14 0h1m18 0h1m19 0h1m20 0h1m12 0h1m10 0h1m26 0h1m17 0h2m6 0h1m27 0h2m12 0h1m14 0h1m28 0h2m2 0h2m22 0h2m23 0h2m5 0h8m5 0h2m14 0h1m5 0h1m2 0h1m-360 1h1m8 0h1m12 0h1m15 0h1m17 0h1m19 0h1m20 0h1m14 0h2m7 0h1m26 0h1m20 0h1m4 0h1m27 0h1m15 0h2m10 0h2m28 0h1m6 0h2m18 0h2m23 0h2m15 0h21m5 0h1m1 0h2m-359 1h1m8 0h1m11 0h1m15 0h1m17 0h1m19 0h1m21 0h1m16 0h2m4 0h1m26 0h1m22 0h2m1 0h1m27 0h1m18 0h2m7 0h1m29 0h1m9 0h3m14 0h1m24 0h1m18 0h2m15 0h2m5 0h1m1 0h1m-358 1h1m8 0h1m11 0h1m15 0h1m17 0h1m19 0h1m21 0h1m19 0h2m1 0h1m26 0h1m25 0h1m27 0h1m21 0h1m5 0h1m28 0h2m13 0h2m10 0h2m23 0h2m17 0h2m15 0h3m5 0h1m1 0h1m-358 1h1m8 0h1m11 0h1m15 0h1m18 0h1m19 0h1m20 0h1m22 0h1m26 0h1m25 0h1m1 0h2m24 0h1m23 0h2m1 0h2m28 0h1m17 0h2m6 0h2m24 0h1m18 0h1m15 0h2m1 0h2m3 0h4m-358 1h1m8 0h1m11 0h1m16 0h1m17 0h1m19 0h1m20 0h1m22 0h1m1 0h2m23 0h1m25 0h1m4 0h1m22 0h1m26 0h1m28 0h2m20 0h2m2 0h2m24 0h2m17 0h2m14 0h2m2 0h2m3 0h3m-357 1h1m8 0h1m12 0h1m15 0h1m17 0h1m19 0h1m20 0h1m22 0h1m4 0h1m21 0h1m25 0h1m6 0h2m19 0h1m26 0h1m1 0h2m25 0h1m24 0h3m23 0h2m18 0h1m14 0h2m3 0h2m3 0h1m1 0h1m-356 1h1m8 0h1m11 0h1m7 0h11m15 0h1m19 0h1m21 0h1m22 0h1m5 0h2m18 0h1m25 0h1m9 0h1m17 0h1m26 0h1m4 0h2m22 0h1m25 0h1m2 0h3m19 0h1m18 0h2m14 0h1m4 0h2m3 0h3m-356 1h1m8 0h1m10 0h10m11 0h5m10 0h1m18 0h1m21 0h1m22 0h1m8 0h1m16 0h1m25 0h1m11 0h2m14 0h1m26 0h1m7 0h2m18 0h2m24 0h2m6 0h2m15 0h2m17 0h2m14 0h2m4 0h2m3 0h2m-355 1h1m8 0h1m8 0h3m26 0h6m3 0h1m19 0h1m20 0h1m22 0h1m10 0h2m13 0h1m25 0h1m14 0h1m11 0h2m26 0h1m10 0h2m15 0h1m25 0h1m10 0h3m11 0h1m18 0h1m14 0h2m5 0h2m3 0h2m-355 1h1m8 0h1m5 0h4m35 0h4m18 0h1m20 0h1m22 0h1m13 0h2m11 0h1m24 0h1m16 0h1m9 0h1m26 0h2m13 0h2m11 0h2m25 0h1m14 0h3m6 0h2m17 0h2m13 0h2m4 0h3m1 0h1m1 0h3m-354 1h1m8 0h1m2 0h3m43 0h3m14 0h1m21 0h1m22 0h1m15 0h1m9 0h1m24 0h1m18 0h2m6 0h1m26 0h1m17 0h2m8 0h1m25 0h2m18 0h2m2 0h2m18 0h1m13 0h2m2 0h4m2 0h2m1 0h2m-353 1h1m8 0h4m49 0h3m10 0h1m21 0h1m22 0h1m17 0h2m6 0h1m24 0h1m21 0h1m4 0h1m26 0h1m20 0h2m5 0h1m25 0h1m22 0h6m14 0h2m12 0h6m5 0h2m1 0h2m-353 1h1m8 0h2m55 0h4m6 0h1m20 0h1m22 0h1m20 0h1m4 0h1m24 0h1m23 0h2m1 0h1m26 0h1m23 0h2m1 0h2m25 0h1m22 0h2m5 0h8m4 0h2m5 0h11m8 0h2m1 0h2m-353 1h1m7 0h2m61 0h3m2 0h1m20 0h1m22 0h1m22 0h2m1 0h1m24 0h1m26 0h1m26 0h1m26 0h2m24 0h2m22 0h1m15 0h12m6 0h1m10 0h2m1 0h1m-352 1h1m6 0h2m66 0h3m19 0h1m22 0h1m25 0h1m25 0h1m25 0h1m1 0h2m23 0h1m26 0h1m2 0h2m21 0h1m23 0h1m17 0h2m13 0h2m9 0h3m1 0h1m-351 1h1m4 0h2m71 0h2m17 0h1m22 0h1m24 0h1m1 0h2m22 0h1m25 0h1m4 0h2m20 0h1m26 0h1m5 0h2m18 0h1m22 0h2m17 0h1m14 0h1m10 0h2m1 0h2m-351 1h1m3 0h2m75 0h2m14 0h1m22 0h1m24 0h1m4 0h2m19 0h1m25 0h1m7 0h1m18 0h1m26 0h1m8 0h2m14 0h2m22 0h1m18 0h1m14 0h1m10 0h2m1 0h2m-351 1h1m3 0h1m79 0h2m11 0h1m22 0h1m25 0h1m6 0h1m17 0h1m25 0h1m9 0h2m15 0h1m26 0h1m11 0h2m11 0h1m22 0h2m17 0h2m13 0h2m9 0h3m1 0h2m-351 1h1m2 0h2m82 0h3m7 0h1m22 0h1m25 0h1m8 0h2m14 0h1m25 0h1m12 0h1m12 0h2m25 0h2m14 0h2m8 0h1m22 0h1m18 0h1m14 0h1m10 0h3m1 0h2m-350 1h3m87 0h2m5 0h1m22 0h1m24 0h1m11 0h1m12 0h1m25 0h1m14 0h2m9 0h1m26 0h1m18 0h2m4 0h2m22 0h1m17 0h2m14 0h1m9 0h4m1 0h2m-350 1h2m91 0h2m2 0h1m22 0h1m24 0h1m13 0h2m9 0h1m25 0h1m17 0h2m6 0h1m26 0h1m21 0h2m1 0h1m22 0h2m17 0h1m14 0h2m9 0h4m1 0h1m-349 1h1m95 0h2m22 0h1m25 0h1m15 0h2m6 0h1m25 0h1m20 0h1m4 0h1m26 0h1m24 0h2m21 0h1m18 0h1m14 0h1m10 0h2m1 0h1m1 0h1m-250 1h2m19 0h1m25 0h1m18 0h1m4 0h1m25 0h1m22 0h2m1 0h1m26 0h1m24 0h1m2 0h3m16 0h2m17 0h2m14 0h1m9 0h2m2 0h1m1 0h1m-247 1h2m16 0h1m25 0h1m20 0h2m1 0h1m25 0h1m25 0h1m26 0h1m24 0h1m6 0h4m11 0h1m18 0h1m14 0h2m8 0h2m3 0h1m1 0h1m-244 1h2m14 0h1m24 0h1m23 0h1m25 0h1m25 0h1m1 0h2m23 0h1m23 0h2m11 0h3m7 0h1m17 0h2m14 0h1m6 0h5m4 0h1m1 0h1m-242 1h1m12 0h1m24 0h1m23 0h1m1 0h2m23 0h1m24 0h1m4 0h2m20 0h1m23 0h1m16 0h3m2 0h2m17 0h1m15 0h1m4 0h3m3 0h1m4 0h1m1 0h1m-240 1h2m9 0h1m25 0h1m22 0h1m4 0h1m21 0h1m24 0h1m7 0h2m17 0h1m23 0h1m20 0h6m14 0h1m14 0h2m2 0h3m4 0h2m4 0h1m1 0h1m-237 1h2m6 0h1m25 0h1m23 0h1m5 0h2m18 0h1m24 0h1m10 0h2m13 0h2m23 0h1m21 0h1m5 0h8m4 0h2m14 0h5m6 0h1m5 0h1m1 0h1m-234 1h2m4 0h1m24 0h1m23 0h1m8 0h1m16 0h1m24 0h1m13 0h2m10 0h1m24 0h1m21 0h1m14 0h21m9 0h1m5 0h3m-231 1h2m1 0h1m24 0h1m23 0h1m10 0h2m13 0h1m24 0h1m16 0h2m7 0h1m24 0h1m21 0h1m17 0h1m15 0h1m10 0h1m5 0h3m-228 1h1m25 0h1m22 0h1m13 0h1m11 0h1m24 0h1m19 0h2m4 0h1m23 0h2m21 0h1m17 0h1m15 0h1m10 0h1m5 0h3m-226 1h2m22 0h1m23 0h1m14 0h1m9 0h1m24 0h1m22 0h2m1 0h1m23 0h1m21 0h2m17 0h1m14 0h2m10 0h1m5 0h3m-223 1h1m20 0h1m23 0h1m16 0h2m6 0h1m24 0h1m25 0h2m22 0h1m21 0h1m18 0h1m14 0h1m10 0h2m5 0h3m-221 1h2m17 0h1m23 0h1m19 0h1m4 0h1m24 0h1m25 0h1m2 0h2m19 0h1m21 0h1m17 0h2m14 0h1m10 0h2m5 0h3m-218 1h1m15 0h1m23 0h1m21 0h2m1 0h1m24 0h1m25 0h1m5 0h2m16 0h1m21 0h1m17 0h1m15 0h1m10 0h1m5 0h2m1 0h1m-216 1h2m13 0h1m22 0h1m24 0h1m25 0h1m24 0h1m8 0h3m12 0h1m21 0h1m17 0h1m15 0h1m10 0h1m4 0h3m1 0h1m-213 1h2m10 0h1m23 0h1m23 0h1m1 0h2m22 0h1m24 0h1m12 0h2m8 0h2m21 0h1m17 0h1m15 0h1m10 0h1m3 0h2m1 0h1m1 0h2m-211 1h1m8 0h1m23 0h1m23 0h1m4 0h2m19 0h1m24 0h1m15 0h2m5 0h1m22 0h1m17 0h1m14 0h2m10 0h1m2 0h2m2 0h1m1 0h2m-209 1h2m5 0h1m23 0h1m24 0h1m6 0h1m17 0h1m24 0h1m18 0h2m2 0h1m22 0h1m17 0h1m14 0h1m11 0h1m1 0h2m3 0h1m1 0h2m-206 1h1m4 0h1m22 0h1m24 0h1m8 0h2m14 0h1m24 0h1m21 0h3m21 0h1m17 0h1m14 0h1m10 0h4m4 0h1m2 0h1m-204 1h2m1 0h1m23 0h1m23 0h1m11 0h1m12 0h1m24 0h1m22 0h1m2 0h3m16 0h2m17 0h1m14 0h1m10 0h3m5 0h1m2 0h1m-201 1h1m23 0h1m23 0h1m13 0h2m9 0h1m24 0h1m22 0h1m6 0h2m13 0h1m18 0h1m14 0h1m10 0h2m6 0h1m2 0h1m-199 1h2m20 0h1m24 0h1m15 0h2m6 0h1m24 0h1m22 0h1m9 0h3m9 0h1m17 0h2m14 0h1m8 0h3m7 0h1m2 0h2m-197 1h1m18 0h1m24 0h1m18 0h1m4 0h1m24 0h1m22 0h1m13 0h3m5 0h1m17 0h1m14 0h2m5 0h6m7 0h1m2 0h2m-195 1h2m15 0h1m24 0h1m20 0h2m1 0h1m25 0h1m21 0h1m17 0h2m2 0h1m17 0h1m14 0h1m3 0h5m3 0h1m7 0h1m1 0h3m-192 1h2m13 0h1m23 0h1m23 0h1m25 0h1m22 0h1m19 0h6m13 0h1m14 0h6m6 0h1m8 0h4m-189 1h1m11 0h1m23 0h1m23 0h1m1 0h2m22 0h1m22 0h1m20 0h1m5 0h8m4 0h1m6 0h11m9 0h1m8 0h2m1 0h2m-188 1h2m8 0h1m24 0h1m22 0h1m4 0h2m19 0h1m22 0h1m20 0h1m14 0h12m6 0h1m11 0h1m8 0h2m1 0h2m-185 1h1m6 0h1m24 0h1m23 0h1m6 0h1m17 0h1m22 0h1m20 0h1m17 0h1m14 0h1m11 0h1m8 0h2m2 0h1m-183 1h2m4 0h1m23 0h1m23 0h1m8 0h2m14 0h1m22 0h1m20 0h1m17 0h1m14 0h1m11 0h1m8 0h2m2 0h1m-180 1h2m1 0h1m23 0h1m23 0h1m11 0h1m12 0h1m22 0h1m20 0h1m17 0h1m14 0h1m11 0h1m8 0h2m2 0h1m-177 1h1m24 0h1m22 0h1m13 0h2m9 0h1m22 0h1m20 0h1m17 0h1m14 0h1m11 0h1m8 0h2m2 0h2m-176 1h2m21 0h1m23 0h1m15 0h2m6 0h1m22 0h1m20 0h1m17 0h1m15 0h1m10 0h1m8 0h2m2 0h2m-173 1h1m19 0h1m23 0h1m18 0h1m4 0h1m22 0h1m20 0h1m18 0h1m14 0h1m10 0h1m8 0h1m4 0h1m-171 1h2m16 0h1m23 0h1m20 0h2m1 0h1m22 0h1m20 0h1m18 0h1m14 0h1m11 0h1m7 0h1m4 0h1m-168 1h1m14 0h1m23 0h1m23 0h2m21 0h1m20 0h1m18 0h1m14 0h1m11 0h1m7 0h1m4 0h1m-166 1h1m13 0h1m22 0h1m23 0h1m2 0h2m18 0h1m20 0h1m18 0h1m14 0h1m11 0h1m6 0h2m4 0h2m-165 1h2m10 0h1m23 0h1m22 0h1m5 0h3m15 0h1m20 0h1m17 0h1m14 0h1m11 0h1m5 0h3m5 0h1m-162 1h1m8 0h1m23 0h1m23 0h1m8 0h2m12 0h1m20 0h1m17 0h1m14 0h1m11 0h1m4 0h2m2 0h1m4 0h1m-160 1h2m5 0h1m23 0h1m23 0h1m11 0h2m9 0h1m20 0h1m17 0h1m14 0h1m11 0h1m3 0h2m3 0h1m4 0h1m-157 1h1m4 0h1m22 0h1m23 0h1m14 0h3m5 0h1m20 0h1m17 0h1m14 0h1m11 0h1m2 0h2m4 0h1m4 0h1m-155 1h2m1 0h1m23 0h1m22 0h1m18 0h2m2 0h1m20 0h1m17 0h1m14 0h1m11 0h1m1 0h2m5 0h1m4 0h2m-153 1h1m23 0h1m23 0h1m20 0h3m19 0h1m17 0h1m14 0h1m11 0h3m7 0h1m4 0h1m-151 1h2m20 0h1m23 0h1m21 0h1m2 0h3m15 0h1m17 0h1m14 0h1m11 0h2m8 0h1m4 0h1m-148 1h1m18 0h1m23 0h1m21 0h1m6 0h4m10 0h1m17 0h1m15 0h1m9 0h2m9 0h1m4 0h1m-146 1h2m15 0h1m23 0h1m22 0h1m10 0h3m6 0h1m18 0h1m14 0h1m7 0h4m9 0h1m4 0h1m-143 1h2m13 0h1m22 0h1m22 0h1m14 0h3m2 0h1m18 0h1m14 0h1m4 0h4m2 0h1m9 0h1m5 0h1m-141 1h1m11 0h1m23 0h1m21 0h1m18 0h4m16 0h1m14 0h1m2 0h4m5 0h1m9 0h1m4 0h1m-139 1h2m8 0h1m23 0h1m21 0h1m19 0h1m3 0h6m9 0h1m14 0h4m8 0h1m9 0h1m4 0h1m-136 1h1m6 0h1m23 0h1m22 0h1m18 0h1m10 0h5m3 0h1m6 0h10m10 0h1m9 0h1m4 0h1m-134 1h2m4 0h1m22 0h1m22 0h1m19 0h1m15 0h11m6 0h1m11 0h1m9 0h1m4 0h1m-131 1h2m1 0h1m23 0h1m21 0h1m19 0h1m17 0h1m14 0h1m12 0h1m9 0h1m2 0h2m-128 1h1m23 0h1m21 0h1m19 0h1m17 0h1m15 0h1m11 0h1m9 0h1m2 0h1m-125 1h2m20 0h1m21 0h1m19 0h1m18 0h1m14 0h1m11 0h1m9 0h1m2 0h1m-122 1h1m18 0h1m22 0h1m19 0h1m17 0h1m14 0h1m11 0h1m9 0h1m2 0h1m-120 1h2m15 0h1m22 0h1m19 0h1m17 0h1m14 0h1m11 0h1m9 0h1m2 0h1m-117 1h2m13 0h1m21 0h1m19 0h1m17 0h1m15 0h1m11 0h1m9 0h1m1 0h1m-114 1h1m11 0h1m21 0h1m19 0h1m18 0h1m14 0h1m11 0h1m9 0h1m1 0h1m-112 1h2m8 0h1m22 0h1m18 0h1m18 0h1m14 0h1m11 0h1m9 0h3m-109 1h1m6 0h1m22 0h1m19 0h1m17 0h1m14 0h1m11 0h1m9 0h2m-106 1h2m4 0h1m21 0h1m19 0h1m17 0h1m14 0h1m12 0h1m9 0h1m-103 1h2m1 0h1m21 0h1m19 0h1m17 0h1m15 0h1m11 0h1m9 0h1m-100 1h2m20 0h1m19 0h1m18 0h1m14 0h1m11 0h1m9 0h1m-97 1h2m18 0h1m19 0h1m17 0h1m14 0h1m11 0h1m8 0h2m-94 1h3m14 0h1m19 0h1m17 0h1m14 0h1m11 0h1m7 0h2m-89 1h2m11 0h1m19 0h1m17 0h1m15 0h1m11 0h1m5 0h2m-85 1h2m8 0h1m19 0h1m18 0h1m14 0h1m11 0h1m4 0h2m-81 1h3m5 0h1m18 0h1m18 0h1m14 0h1m11 0h1m3 0h2m-76 1h2m2 0h1m19 0h1m17 0h1m14 0h1m11 0h1m2 0h2m-72 1h3m18 0h1m17 0h1m14 0h1m12 0h3m-67 1h3m14 0h1m17 0h1m15 0h1m11 0h2m-62 1h3m10 0h1m18 0h1m14 0h1m10 0h2m-57 1h4m6 0h1m17 0h1m14 0h1m8 0h3m-51 1h3m2 0h1m17 0h1m14 0h1m5 0h4m-45 1h4m15 0h1m15 0h1m2 0h3m-37 1h5m10 0h1m14 0h4m-29 1h6m3 0h1m6 0h10m-20 1h10" stroke="#000" stroke-width="1" fill="none"/>
   </svg>
   <svg class="gl" width="849" height="480" viewBox="0 0 849 480">
   <g class="t">
<text x="14" y="197.200" text-anchor="end">0</text>
<text x="14" y="393.500" text-anchor="end">10</text>
<text x="38" y="414.500">8</text>
<text x="70" y="435.500">6</text>
<text x="103.500" y="457">4</text>
<text x="786" y="445.500">10</text>
<text x="743" y="461.500">8</text>
<text x="306" y="227" style="font-size:12px;letter-spacing:4.700px">极大值</text>
<text x="423.500" y="218" style="font-size:12px;letter-spacing:4.700px">极小值</text>
</g>
<g shape-rendering="crispEdges"><rect x="496" y="359" width="209" height="30" fill="#fff"/><path d="M496 359.500 L704.500 359.500 L704.500 388.500 L702 388.500 M496 388.500 L498 388.500" fill="none" stroke="#000"/><rect x="504.500" y="364.500" width="40" height="18" fill="#20ffdf" stroke="#000"/></g>
<g class="t" style="font-size:13px;letter-spacing:-.3px"><text x="548.300" y="382">z=x.</text><text x="580.300" y="382">-y.</text><text x="601.500" y="382">+3*x.</text><text x="638.400" y="382">+3*y.</text><text x="675.300" y="382">-9*x</text><g style="font-size:10px;letter-spacing:0"><text x="573.600" y="375.500">3</text><text x="595.200" y="375.500">3</text><text x="631.900" y="375.500">2</text><text x="668.600" y="375.500">2</text></g></g>

   </svg>
  </div>
 </div>
 <div id="winedge"></div>
</div>
<div id="badge"><svg style="position:absolute;left:10px;top:5px" width="13" height="12"><path d="M6.500 0.500 L6.500 9.500 M1.500 5 L6.500 10 L11.500 5" stroke="#a6ee4a" stroke-width="2.400" fill="none"/></svg><span>0.9KB/s</span></div>
</body></html>
